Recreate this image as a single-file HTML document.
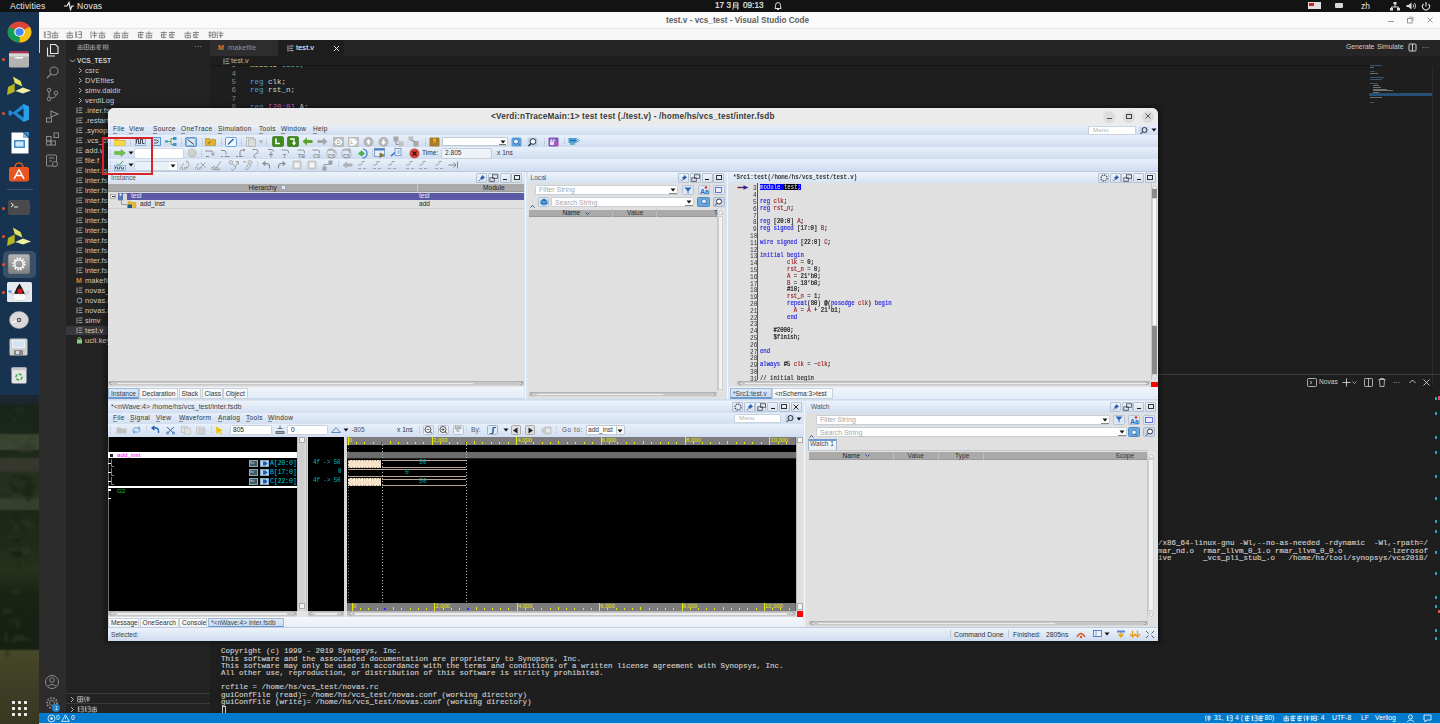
<!DOCTYPE html>
<html><head><meta charset="utf-8">
<style>
*{margin:0;padding:0;box-sizing:border-box}
html,body{width:1440px;height:724px;overflow:hidden;background:#1e1e1e;font-family:"Liberation Sans",sans-serif}
.a{position:absolute}
.t{position:absolute;white-space:nowrap;line-height:1}
svg.a{overflow:visible}
</style></head><body>
<div class="a" style="left:0px;top:0px;width:1440px;height:12px;background:#131313;"></div>
<div class="t" style="left:10px;top:1.70px;font-size:8.6px;color:#e8e8e8;font-weight:normal;letter-spacing:0.15px">Activities</div>
<svg class="a" style="left:63px;top:1px;" width="12" height="10" viewBox="0 0 12 10"><path d="M1 5 L4 5 L6 1.5 L7.5 8.5 L9 5 L11 5" stroke="#e8e8e8" stroke-width="1.2" fill="none"/></svg>
<div class="t" style="left:77px;top:1.70px;font-size:8.6px;color:#e8e8e8;font-weight:normal;letter-spacing:0.2px">Novas</div>
<div class="t" style="left:715px;top:1.90px;font-size:8.2px;color:#e8e8e8;font-weight:normal;-webkit-text-stroke:0.2px #e8e8e8">17</div>
<div class="t" style="left:726.5px;top:1.90px;font-size:8.2px;color:#e8e8e8;font-weight:normal;-webkit-text-stroke:0.2px #e8e8e8">3</div>
<svg class="a" style="left:732px;top:2px;" width="7" height="8" viewBox="0 0 7 8"><path d="M1.5 0.8h4.5v6.5M1.5 0.8v3.5q0 2.5-1 3.5M1.5 3h4.5M1.5 5h4.5M6 7.3l-1 -0.5" stroke="#e8e8e8" stroke-width="0.9" fill="none"/></svg>
<div class="t" style="left:743px;top:1.90px;font-size:8.2px;color:#e8e8e8;font-weight:normal;-webkit-text-stroke:0.2px #e8e8e8">09:13</div>
<svg class="a" style="left:773px;top:1px;" width="10" height="10" viewBox="0 0 10 10"><path d="M2 7.5 Q2.5 6 2.5 4.5 Q2.5 1.5 5 1.5 Q7.5 1.5 7.5 4.5 Q7.5 6 8 7.5 Z M4 8.5 h2" stroke="#ddd" stroke-width="1" fill="none"/></svg>
<div class="a" style="left:1308px;top:2px;width:13px;height:7px;background:#e0e0e0;"></div>
<div class="a" style="left:1309px;top:3px;width:5px;height:3px;background:#c81e2a;"></div>
<div class="a" style="left:1335px;top:3px;width:8px;height:5px;background:#d8d8d8;border-radius:1px"></div>
<div class="t" style="left:1361px;top:1.80px;font-size:8.4px;color:#e8e8e8;font-weight:normal;">zh</div>
<svg class="a" style="left:1389px;top:1px;" width="12" height="10" viewBox="0 0 12 10"><path d="M6 1.5v3M2.5 8v-2h7v2M6 4.5v1.5" stroke="#ddd" stroke-width="1" fill="none"/><rect x="4.5" y="1" width="3" height="2.5" fill="#ddd"/><rect x="1" y="7" width="3" height="2.5" fill="#ddd"/><rect x="8" y="7" width="3" height="2.5" fill="#ddd"/></svg>
<svg class="a" style="left:1405px;top:1px;" width="12" height="10" viewBox="0 0 12 10"><path d="M1.5 4h2l3-2.5v7l-3-2.5h-2z" fill="#ddd"/><path d="M8 3.5q1.5 1.5 0 3M9.5 2q2.5 3 0 6" stroke="#ddd" stroke-width="0.9" fill="none"/></svg>
<svg class="a" style="left:1419.5px;top:1px;" width="12" height="10" viewBox="0 0 12 10"><path d="M3.5 3 A3.5 3.5 0 1 0 8.5 3" stroke="#ddd" stroke-width="1.1" fill="none"/><path d="M6 1v4.5" stroke="#ddd" stroke-width="1.1"/></svg>
<div class="a" style="left:0px;top:12px;width:39px;height:393px;background:#173350;"></div>
<div class="a" style="left:0;top:395px;width:39px;height:329px;background:linear-gradient(180deg,#1d2a36 0px,#1f2b33 8px,#1c281d 10px,#1e2a1e 38px,#3e4a36 40px,#404c36 54px,#1f2a1c 56px,#22301d 62px,#3c3e32 64px,#3a3c32 75px,#2a3422 78px,#2c3524 100px,#3a4830 106px,#384630 114px,#1f2b1a 116px,#222e1a 150px,#2c361f 175px,#1d2616 200px,#1a2214 250px,#1c2414 254px,#4f4f2e 256px,#4a4a2a 266px,#43432a 300px,#3c3c22 329px)"></div>
<div class="a" style="left:22.3px;top:555.7px;width:10.4px;height:7.7px;background:#202c18;border-radius:50%;opacity:0.45;filter:blur(1px)"></div>
<div class="a" style="left:14.0px;top:407.3px;width:11.5px;height:6.2px;background:#2a3620;border-radius:50%;opacity:0.45;filter:blur(1px)"></div>
<div class="a" style="left:14.1px;top:428.3px;width:6.0px;height:5.7px;background:#202c18;border-radius:50%;opacity:0.45;filter:blur(1px)"></div>
<div class="a" style="left:21.9px;top:462.3px;width:7.3px;height:3.9px;background:#343c2c;border-radius:50%;opacity:0.45;filter:blur(1px)"></div>
<div class="a" style="left:23.9px;top:439.9px;width:5.1px;height:6.1px;background:#3a4030;border-radius:50%;opacity:0.45;filter:blur(1px)"></div>
<div class="a" style="left:29.2px;top:433.1px;width:4.0px;height:6.9px;background:#3a4030;border-radius:50%;opacity:0.45;filter:blur(1px)"></div>
<div class="a" style="left:8.7px;top:618.1px;width:11.7px;height:5.7px;background:#2a3620;border-radius:50%;opacity:0.45;filter:blur(1px)"></div>
<div class="a" style="left:29.1px;top:445.4px;width:5.6px;height:7.8px;background:#343c2c;border-radius:50%;opacity:0.45;filter:blur(1px)"></div>
<div class="a" style="left:10.8px;top:474.7px;width:5.3px;height:3.7px;background:#16200f;border-radius:50%;opacity:0.45;filter:blur(1px)"></div>
<div class="a" style="left:24.5px;top:483.0px;width:8.7px;height:6.0px;background:#1a2412;border-radius:50%;opacity:0.45;filter:blur(1px)"></div>
<div class="a" style="left:10.7px;top:416.5px;width:6.4px;height:6.5px;background:#2a3620;border-radius:50%;opacity:0.45;filter:blur(1px)"></div>
<div class="a" style="left:21.1px;top:520.3px;width:4.5px;height:7.9px;background:#16200f;border-radius:50%;opacity:0.45;filter:blur(1px)"></div>
<div class="a" style="left:10.7px;top:637.3px;width:7.2px;height:5.7px;background:#34402a;border-radius:50%;opacity:0.45;filter:blur(1px)"></div>
<div class="a" style="left:17.4px;top:491.5px;width:4.1px;height:3.2px;background:#2a3620;border-radius:50%;opacity:0.45;filter:blur(1px)"></div>
<div class="a" style="left:28.6px;top:555.9px;width:5.0px;height:4.2px;background:#34402a;border-radius:50%;opacity:0.45;filter:blur(1px)"></div>
<div class="a" style="left:10.6px;top:486.1px;width:8.2px;height:6.9px;background:#16200f;border-radius:50%;opacity:0.45;filter:blur(1px)"></div>
<div class="a" style="left:23.4px;top:547.4px;width:6.9px;height:4.5px;background:#34402a;border-radius:50%;opacity:0.45;filter:blur(1px)"></div>
<div class="a" style="left:2.7px;top:636.5px;width:6.7px;height:6.1px;background:#2a3620;border-radius:50%;opacity:0.45;filter:blur(1px)"></div>
<div class="a" style="left:27.7px;top:485.0px;width:8.4px;height:4.6px;background:#1a2412;border-radius:50%;opacity:0.45;filter:blur(1px)"></div>
<div class="a" style="left:24.0px;top:476.5px;width:9.0px;height:6.6px;background:#1a2412;border-radius:50%;opacity:0.45;filter:blur(1px)"></div>
<div class="a" style="left:4.8px;top:649.2px;width:4.4px;height:7.9px;background:#202c18;border-radius:50%;opacity:0.45;filter:blur(1px)"></div>
<div class="a" style="left:1.0px;top:630.9px;width:9.9px;height:4.7px;background:#1a2412;border-radius:50%;opacity:0.45;filter:blur(1px)"></div>
<div class="a" style="left:12.7px;top:513.9px;width:4.4px;height:7.6px;background:#16200f;border-radius:50%;opacity:0.45;filter:blur(1px)"></div>
<div class="a" style="left:10.0px;top:600.4px;width:5.7px;height:7.9px;background:#202c18;border-radius:50%;opacity:0.45;filter:blur(1px)"></div>
<div class="a" style="left:18.9px;top:637.4px;width:10.3px;height:3.5px;background:#34402a;border-radius:50%;opacity:0.45;filter:blur(1px)"></div>
<div class="a" style="left:1.8px;top:493.2px;width:7.4px;height:3.7px;background:#202c18;border-radius:50%;opacity:0.45;filter:blur(1px)"></div>
<div class="a" style="left:29.3px;top:613.1px;width:7.6px;height:5.4px;background:#1a2412;border-radius:50%;opacity:0.45;filter:blur(1px)"></div>
<div class="a" style="left:8.7px;top:519.8px;width:7.2px;height:3.7px;background:#34402a;border-radius:50%;opacity:0.45;filter:blur(1px)"></div>
<div class="a" style="left:16.0px;top:605.5px;width:5.4px;height:7.7px;background:#1a2412;border-radius:50%;opacity:0.45;filter:blur(1px)"></div>
<div class="a" style="left:14.8px;top:445.0px;width:8.1px;height:5.7px;background:#40402f;border-radius:50%;opacity:0.45;filter:blur(1px)"></div>
<div class="a" style="left:23.6px;top:490.3px;width:10.2px;height:6.5px;background:#16200f;border-radius:50%;opacity:0.45;filter:blur(1px)"></div>
<div class="a" style="left:10.9px;top:589.9px;width:9.6px;height:4.4px;background:#34402a;border-radius:50%;opacity:0.45;filter:blur(1px)"></div>
<div class="a" style="left:29.4px;top:466.2px;width:9.7px;height:7.8px;background:#343c2c;border-radius:50%;opacity:0.45;filter:blur(1px)"></div>
<div class="a" style="left:17.4px;top:562.4px;width:4.1px;height:5.7px;background:#1a2412;border-radius:50%;opacity:0.45;filter:blur(1px)"></div>
<div class="a" style="left:8.2px;top:481.5px;width:6.3px;height:5.5px;background:#1a2412;border-radius:50%;opacity:0.45;filter:blur(1px)"></div>
<div class="a" style="left:19.3px;top:487.0px;width:9.9px;height:7.1px;background:#1a2412;border-radius:50%;opacity:0.45;filter:blur(1px)"></div>
<div class="a" style="left:5.2px;top:630.6px;width:10.9px;height:5.2px;background:#1a2412;border-radius:50%;opacity:0.45;filter:blur(1px)"></div>
<div class="a" style="left:15.5px;top:639.1px;width:8.2px;height:3.8px;background:#1a2412;border-radius:50%;opacity:0.45;filter:blur(1px)"></div>
<div class="a" style="left:14.3px;top:634.3px;width:9.5px;height:6.6px;background:#34402a;border-radius:50%;opacity:0.45;filter:blur(1px)"></div>
<div class="a" style="left:23.4px;top:443.0px;width:8.6px;height:6.3px;background:#343c2c;border-radius:50%;opacity:0.45;filter:blur(1px)"></div>
<div class="a" style="left:16.6px;top:475.7px;width:10.9px;height:4.4px;background:#16200f;border-radius:50%;opacity:0.45;filter:blur(1px)"></div>
<div class="a" style="left:17.6px;top:448.9px;width:9.0px;height:3.9px;background:#40402f;border-radius:50%;opacity:0.45;filter:blur(1px)"></div>
<div class="a" style="left:21.6px;top:445.1px;width:11.9px;height:7.9px;background:#3a4030;border-radius:50%;opacity:0.45;filter:blur(1px)"></div>
<div class="a" style="left:4.0px;top:413.5px;width:6.5px;height:3.9px;background:#2a3620;border-radius:50%;opacity:0.45;filter:blur(1px)"></div>
<div class="a" style="left:12.5px;top:537.1px;width:6.8px;height:6.3px;background:#16200f;border-radius:50%;opacity:0.45;filter:blur(1px)"></div>
<div class="a" style="left:7.1px;top:547.5px;width:11.2px;height:3.0px;background:#34402a;border-radius:50%;opacity:0.45;filter:blur(1px)"></div>
<div class="a" style="left:25.7px;top:638.0px;width:10.9px;height:6.4px;background:#202c18;border-radius:50%;opacity:0.45;filter:blur(1px)"></div>
<div class="a" style="left:1.1px;top:493.5px;width:8.9px;height:3.5px;background:#202c18;border-radius:50%;opacity:0.45;filter:blur(1px)"></div>
<div class="a" style="left:28.5px;top:528.2px;width:6.3px;height:4.8px;background:#2a3620;border-radius:50%;opacity:0.45;filter:blur(1px)"></div>
<div class="a" style="left:24.4px;top:504.8px;width:9.1px;height:4.8px;background:#3a4030;border-radius:50%;opacity:0.45;filter:blur(1px)"></div>
<div class="a" style="left:11.5px;top:439.2px;width:7.8px;height:4.0px;background:#3a4030;border-radius:50%;opacity:0.45;filter:blur(1px)"></div>
<div class="a" style="left:10.5px;top:552.2px;width:11.1px;height:3.0px;background:#16200f;border-radius:50%;opacity:0.45;filter:blur(1px)"></div>
<div class="a" style="left:27.5px;top:481.5px;width:8.3px;height:4.6px;background:#202c18;border-radius:50%;opacity:0.45;filter:blur(1px)"></div>
<div class="a" style="left:13.0px;top:494.0px;width:5.8px;height:4.5px;background:#34402a;border-radius:50%;opacity:0.45;filter:blur(1px)"></div>
<div class="a" style="left:25.6px;top:496.0px;width:5.3px;height:6.0px;background:#1a2412;border-radius:50%;opacity:0.45;filter:blur(1px)"></div>
<div class="a" style="left:12.5px;top:524.1px;width:6.6px;height:7.9px;background:#34402a;border-radius:50%;opacity:0.45;filter:blur(1px)"></div>
<div class="a" style="left:4.3px;top:632.4px;width:4.2px;height:6.3px;background:#34402a;border-radius:50%;opacity:0.45;filter:blur(1px)"></div>
<div class="a" style="left:1.2px;top:461.4px;width:5.1px;height:5.0px;background:#343c2c;border-radius:50%;opacity:0.45;filter:blur(1px)"></div>
<div class="a" style="left:8.2px;top:533.1px;width:11.5px;height:6.9px;background:#2a3620;border-radius:50%;opacity:0.45;filter:blur(1px)"></div>
<div class="a" style="left:25.3px;top:522.5px;width:9.8px;height:4.4px;background:#34402a;border-radius:50%;opacity:0.45;filter:blur(1px)"></div>
<div class="a" style="left:14.2px;top:552.0px;width:9.2px;height:6.0px;background:#16200f;border-radius:50%;opacity:0.45;filter:blur(1px)"></div>
<div class="a" style="left:3.8px;top:404.0px;width:6.3px;height:6.5px;background:#202c18;border-radius:50%;opacity:0.45;filter:blur(1px)"></div>
<div class="a" style="left:15.9px;top:474.2px;width:7.7px;height:4.8px;background:#202c18;border-radius:50%;opacity:0.45;filter:blur(1px)"></div>
<div class="a" style="left:0.1px;top:433.1px;width:8.4px;height:6.4px;background:#3a4030;border-radius:50%;opacity:0.45;filter:blur(1px)"></div>
<div class="a" style="left:16.4px;top:622.0px;width:4.1px;height:6.9px;background:#34402a;border-radius:50%;opacity:0.45;filter:blur(1px)"></div>
<div class="a" style="left:20.7px;top:548.7px;width:11.6px;height:6.2px;background:#34402a;border-radius:50%;opacity:0.45;filter:blur(1px)"></div>
<div class="a" style="left:20.5px;top:518.9px;width:9.8px;height:7.5px;background:#34402a;border-radius:50%;opacity:0.45;filter:blur(1px)"></div>
<div class="a" style="left:2.0px;top:607.5px;width:10.7px;height:6.5px;background:#34402a;border-radius:50%;opacity:0.45;filter:blur(1px)"></div>
<div class="a" style="left:19.5px;top:545.5px;width:7.8px;height:4.6px;background:#2a3620;border-radius:50%;opacity:0.45;filter:blur(1px)"></div>
<div class="a" style="left:16.5px;top:519.6px;width:8.0px;height:4.7px;background:#2a3620;border-radius:50%;opacity:0.45;filter:blur(1px)"></div>
<div class="a" style="left:0;top:395px;width:39px;height:329px;background:rgba(0,0,0,0.08)"></div>
<div class="a" style="left:39px;top:395px;width:0px;height:0px;background:none;"></div>
<svg class="a" style="left:7px;top:21px;" width="25" height="22" viewBox="0 0 25 22"><g transform="scale(1.25,1.1)"><circle cx="10" cy="10" r="9.5" fill="#db4437"/><path d="M10 10 L18.2 5.2 A9.5 9.5 0 0 1 10 19.5Z" fill="#f4c20d"/><path d="M10 10 L10 19.5 A9.5 9.5 0 0 1 1.8 5.3Z" fill="#0f9d58"/><circle cx="10" cy="10" r="4.3" fill="#fff"/><circle cx="10" cy="10" r="3.3" fill="#4285f4"/></g></svg>
<svg class="a" style="left:8px;top:51px;" width="22" height="17" viewBox="0 0 22 17"><rect x="1" y="0" width="20" height="5" rx="1.5" fill="#a3324f"/><rect x="1" y="2.5" width="20" height="14" rx="1.5" fill="#b3b3b3"/><rect x="1" y="2.5" width="20" height="3" fill="#d8d8d8"/><rect x="7" y="6" width="8" height="1.5" fill="#f5f5f5"/></svg>
<div class="a" style="left:1.5px;top:57.5px;width:3px;height:3px;background:#e95420;border-radius:50%"></div>
<svg class="a" style="left:7px;top:75px;" width="25" height="22" viewBox="0 0 25 22"><path d="M6 1.5 L13.6 6 L15.4 11.5 L7.7 8 Z" fill="#e2e26a"/><path d="M7.7 8.5 L7.7 16.8 L0 20 L1 12 Z" fill="#b4b424"/><path d="M8.3 16 L16 12.6 L24 15.6 L16 18.5 Z" fill="#f0f0a4"/></svg>
<svg class="a" style="left:8px;top:103px;" width="22" height="20" viewBox="0 0 22 20"><path d="M15.5 1 L21 3.5 V16.5 L15.5 19 L5 10.5 L2 13 L0.5 12 V8 L2 7 L5 9.5Z" fill="#1f8ad2"/><path d="M15.5 1 L21 3.5 V16.5 L15.5 19Z" fill="#2a9fe8"/><path d="M15.5 5.5 V14.5 L9 10Z" fill="#15304a"/></svg>
<div class="a" style="left:1.5px;top:111.5px;width:3px;height:3px;background:#e95420;border-radius:50%"></div>
<svg class="a" style="left:11px;top:132px;" width="18" height="22" viewBox="0 0 18 22"><path d="M0.5 0.5 H12 L17.5 6 V21.5 H0.5Z" fill="#fff"/><path d="M12 0.5 L17.5 6 H12Z" fill="#7ab7e0"/><rect x="3" y="8" width="11" height="8" fill="#3b8fcf"/><rect x="4.5" y="9.5" width="8" height="5" fill="#cfe6f7"/><path d="M12.5 0 L18 0 L18 5z" fill="#3b8fcf"/></svg>
<svg class="a" style="left:8px;top:162px;" width="22" height="20" viewBox="0 0 22 20"><path d="M7 6 Q7 1 11 1 Q15 1 15 6" stroke="#d65a1a" stroke-width="1.6" fill="none"/><rect x="1" y="5" width="20" height="14.5" rx="2" fill="#e95420"/><path d="M11 7.5 L6 17 M11 7.5 L16 17 M7.5 13.5 H14.5" stroke="#fff" stroke-width="1.6"/></svg>
<div class="a" style="left:7px;top:189px;width:26px;height:1px;background:#3e5670;"></div>
<svg class="a" style="left:8px;top:200px;" width="22" height="15" viewBox="0 0 22 15"><rect x="0.5" y="0.5" width="21" height="14" rx="1.5" fill="#4a4a4a" stroke="#5a5a5a" stroke-width="0.5"/><path d="M3 3 L5.5 5 L3 7" stroke="#fff" stroke-width="0.9" fill="none"/><path d="M6 7h4" stroke="#fff" stroke-width="0.9"/></svg>
<div class="a" style="left:1.5px;top:206.5px;width:3px;height:3px;background:#e95420;border-radius:50%"></div>
<svg class="a" style="left:7px;top:225.5px;" width="25" height="22" viewBox="0 0 25 22"><path d="M6 1.5 L13.6 6 L15.4 11.5 L7.7 8 Z" fill="#e2e26a"/><path d="M7.7 8.5 L7.7 16.8 L0 20 L1 12 Z" fill="#b4b424"/><path d="M8.3 16 L16 12.6 L24 15.6 L16 18.5 Z" fill="#f0f0a4"/></svg>
<div class="a" style="left:1.5px;top:234.5px;width:3px;height:3px;background:#e95420;border-radius:50%"></div>
<div class="a" style="left:3px;top:251px;width:33px;height:27px;background:#3a5068;border-radius:5px"></div>
<svg class="a" style="left:8px;top:254px;" width="22" height="20" viewBox="0 0 22 20"><rect x="0.5" y="0.5" width="21" height="19" rx="1.5" fill="#9a9a9a"/><rect x="0.5" y="0.5" width="21" height="19" rx="1.5" fill="url(#gg)"/><defs><linearGradient id="gg" x1="0" y1="0" x2="0" y2="1"><stop offset="0" stop-color="#b5b5b5"/><stop offset="1" stop-color="#808080"/></linearGradient></defs><circle cx="11" cy="10" r="5.6" fill="none" stroke="#fff" stroke-width="2" stroke-dasharray="1.6 1.3"/><circle cx="11" cy="10" r="4.2" fill="none" stroke="#fff" stroke-width="1.3"/></svg>
<div class="a" style="left:1.5px;top:262.5px;width:3px;height:3px;background:#e95420;border-radius:50%"></div>
<svg class="a" style="left:7px;top:282px;" width="25" height="20" viewBox="0 0 25 20"><rect x="0" y="0" width="25" height="20" rx="1.5" fill="#e4eaf0"/><path d="M12.5 1.5 Q9 6 7 12 L18 12 Q15.5 6 12.5 1.5Z" fill="#181818"/><path d="M6 12 Q5 17 8 18.5 L17 18.5 Q20 17 19 12Z" fill="#fafafa" stroke="#c8c8c8" stroke-width="0.5"/><circle cx="13" cy="9" r="2.6" fill="#d81818"/><path d="M6.5 13 L3 10.5 M18.5 13 L22 9" stroke="#d0d0d0" stroke-width="2"/><ellipse cx="3" cy="9.5" rx="2" ry="1.2" fill="#6aa0d0"/></svg>
<div class="a" style="left:1.5px;top:290.5px;width:3px;height:3px;background:#e95420;border-radius:50%"></div>
<svg class="a" style="left:9px;top:311px;" width="20" height="18" viewBox="0 0 20 18"><ellipse cx="10" cy="9" rx="9.5" ry="8.5" fill="#d8d8d8"/><ellipse cx="10" cy="9" rx="9.5" ry="8.5" fill="none" stroke="#aaa" stroke-width="0.6"/><path d="M3 12 L9 9" stroke="#fff" stroke-width="1.2"/><circle cx="10" cy="9" r="2.3" fill="#555"/><circle cx="10" cy="9" r="1" fill="#ddd"/></svg>
<svg class="a" style="left:9px;top:338px;" width="19" height="18" viewBox="0 0 19 18"><rect x="0.5" y="0.5" width="18" height="17" rx="1.5" fill="#cfcfcf"/><rect x="3" y="2" width="13" height="8" fill="#eaf2fa"/><path d="M4 4h11M4 6h11M4 8h11" stroke="#9cc1e2" stroke-width="0.6"/><rect x="5" y="12" width="9" height="5" fill="#8a8a8a"/><rect x="7" y="13" width="3" height="3" fill="#ddd"/></svg>
<svg class="a" style="left:11px;top:367px;" width="16" height="17" viewBox="0 0 16 17"><rect x="0.5" y="0.5" width="15" height="16" rx="1.5" fill="#e4e4e4"/><rect x="0.5" y="0.5" width="15" height="2.5" fill="#c8c8c8"/><circle cx="8" cy="10" r="3" fill="none" stroke="#2ea043" stroke-width="1.4" stroke-dasharray="3 1.5"/></svg>
<div class="a" style="left:12.2px;top:701.3px;width:3.2px;height:3.2px;background:#f4f4f4;border-radius:0.8px"></div>
<div class="a" style="left:18.1px;top:701.3px;width:3.2px;height:3.2px;background:#f4f4f4;border-radius:0.8px"></div>
<div class="a" style="left:24.0px;top:701.3px;width:3.2px;height:3.2px;background:#f4f4f4;border-radius:0.8px"></div>
<div class="a" style="left:12.2px;top:707.3px;width:3.2px;height:3.2px;background:#f4f4f4;border-radius:0.8px"></div>
<div class="a" style="left:18.1px;top:707.3px;width:3.2px;height:3.2px;background:#f4f4f4;border-radius:0.8px"></div>
<div class="a" style="left:24.0px;top:707.3px;width:3.2px;height:3.2px;background:#f4f4f4;border-radius:0.8px"></div>
<div class="a" style="left:12.2px;top:713.3px;width:3.2px;height:3.2px;background:#f4f4f4;border-radius:0.8px"></div>
<div class="a" style="left:18.1px;top:713.3px;width:3.2px;height:3.2px;background:#f4f4f4;border-radius:0.8px"></div>
<div class="a" style="left:24.0px;top:713.3px;width:3.2px;height:3.2px;background:#f4f4f4;border-radius:0.8px"></div>
<div class="a" style="left:39px;top:12px;width:1401px;height:17px;background:#fafafa;"></div>
<div class="a" style="left:39px;top:28px;width:1401px;height:1px;background:#e6e6e6;"></div>
<div class="a" style="left:39px;top:29px;width:1401px;height:11px;background:#f6f6f6;"></div>
<div class="t" style="left:666px;top:16.90px;font-size:8.2px;color:#5f5f5f;font-weight:bold;">test.v - vcs_test - Visual Studio Code</div>
<div class="a" style="left:1388px;top:21px;width:6px;height:1px;background:#9a9a9a;"></div>
<svg class="a" style="left:1406px;top:16px;" width="8" height="8" viewBox="0 0 8 8"><rect x="1.5" y="2.5" width="4.5" height="4.5" fill="none" stroke="#9a9a9a" stroke-width="1"/><path d="M3 1.2h4v4" stroke="#9a9a9a" stroke-width="0.8" fill="none"/></svg>
<svg class="a" style="left:1426px;top:16px;" width="8" height="8" viewBox="0 0 8 8"><path d="M1.5 1.5L6.5 6.5M6.5 1.5L1.5 6.5" stroke="#9a9a9a" stroke-width="1"/></svg>
<svg class="a" style="left:43px;top:30.7px;" width="18" height="9" viewBox="0 0 18 9"><path transform="translate(0.00,0) scale(7.60)" d="M.1 .15h.3M.1 .45h.3M.1 .8h.35M.25 .15v.65M.55 .1h.4v.8M.55 .45h.4M.55 .9h.4" stroke="#7a7a7a" stroke-width="0.130" fill="none" opacity="0.9"/><path transform="translate(8.20,0) scale(7.60)" d="M.05 .3h.9M.5 .05v.35M.15 .55h.7v.35h-.7zM.5 .55v.35" stroke="#7a7a7a" stroke-width="0.130" fill="none" opacity="0.9"/></svg>
<svg class="a" style="left:66px;top:30.7px;" width="18" height="9" viewBox="0 0 18 9"><path transform="translate(0.00,0) scale(7.60)" d="M.05 .3h.9M.5 .05v.35M.15 .55h.7v.35h-.7zM.5 .55v.35" stroke="#7a7a7a" stroke-width="0.130" fill="none" opacity="0.9"/><path transform="translate(8.20,0) scale(7.60)" d="M.1 .15h.3M.1 .45h.3M.1 .8h.35M.25 .15v.65M.55 .1h.4v.8M.55 .45h.4M.55 .9h.4" stroke="#7a7a7a" stroke-width="0.130" fill="none" opacity="0.9"/></svg>
<svg class="a" style="left:90px;top:30.7px;" width="18" height="9" viewBox="0 0 18 9"><path transform="translate(0.00,0) scale(7.60)" d="M.2 .05l-.15 .4M.3 .3h.65M.6 .05v.9M.35 .6h.55M.15 .45v.5" stroke="#7a7a7a" stroke-width="0.130" fill="none" opacity="0.9"/><path transform="translate(8.20,0) scale(7.60)" d="M.05 .3h.9M.5 .05v.35M.15 .55h.7v.35h-.7zM.5 .55v.35" stroke="#7a7a7a" stroke-width="0.130" fill="none" opacity="0.9"/></svg>
<svg class="a" style="left:113px;top:30.7px;" width="18" height="9" viewBox="0 0 18 9"><path transform="translate(0.00,0) scale(7.60)" d="M.05 .3h.9M.5 .05v.35M.15 .55h.7v.35h-.7zM.5 .55v.35" stroke="#7a7a7a" stroke-width="0.130" fill="none" opacity="0.9"/><path transform="translate(8.20,0) scale(7.60)" d="M.05 .3h.9M.5 .05v.35M.15 .55h.7v.35h-.7zM.5 .55v.35" stroke="#7a7a7a" stroke-width="0.130" fill="none" opacity="0.9"/></svg>
<svg class="a" style="left:137px;top:30.7px;" width="18" height="9" viewBox="0 0 18 9"><path transform="translate(0.00,0) scale(7.60)" d="M.1 .2h.8M.5 .05v.9M.15 .5h.7M.2 .85h.6M.2 .35v.5" stroke="#7a7a7a" stroke-width="0.130" fill="none" opacity="0.9"/><path transform="translate(8.20,0) scale(7.60)" d="M.05 .3h.9M.5 .05v.35M.15 .55h.7v.35h-.7zM.5 .55v.35" stroke="#7a7a7a" stroke-width="0.130" fill="none" opacity="0.9"/></svg>
<svg class="a" style="left:160px;top:30.7px;" width="18" height="9" viewBox="0 0 18 9"><path transform="translate(0.00,0) scale(7.60)" d="M.1 .2h.8M.5 .05v.9M.15 .5h.7M.2 .85h.6M.2 .35v.5" stroke="#7a7a7a" stroke-width="0.130" fill="none" opacity="0.9"/><path transform="translate(8.20,0) scale(7.60)" d="M.1 .2h.8M.5 .05v.9M.15 .5h.7M.2 .85h.6M.2 .35v.5" stroke="#7a7a7a" stroke-width="0.130" fill="none" opacity="0.9"/></svg>
<svg class="a" style="left:184px;top:30.7px;" width="18" height="9" viewBox="0 0 18 9"><path transform="translate(0.00,0) scale(7.60)" d="M.05 .3h.9M.5 .05v.35M.15 .55h.7v.35h-.7zM.5 .55v.35" stroke="#7a7a7a" stroke-width="0.130" fill="none" opacity="0.9"/><path transform="translate(8.20,0) scale(7.60)" d="M.1 .2h.8M.5 .05v.9M.15 .5h.7M.2 .85h.6M.2 .35v.5" stroke="#7a7a7a" stroke-width="0.130" fill="none" opacity="0.9"/></svg>
<svg class="a" style="left:208px;top:30.7px;" width="18" height="9" viewBox="0 0 18 9"><path transform="translate(0.00,0) scale(7.60)" d="M.05 .25h.4M.25 .05v.9M.05 .6h.4M.55 .15h.4v.7h-.4zM.55 .5h.4" stroke="#7a7a7a" stroke-width="0.130" fill="none" opacity="0.9"/><path transform="translate(8.20,0) scale(7.60)" d="M.2 .05l-.15 .4M.3 .3h.65M.6 .05v.9M.35 .6h.55M.15 .45v.5" stroke="#7a7a7a" stroke-width="0.130" fill="none" opacity="0.9"/></svg>
<div class="a" style="left:39px;top:40px;width:27px;height:673px;background:#2c2c2c;"></div>
<div class="a" style="left:39px;top:40px;width:1px;height:13px;background:#d0d0d0;"></div>
<svg class="a" style="left:45px;top:43px;" width="15" height="15" viewBox="0 0 15 15"><path d="M5.5 1.5h5l2.5 2.5v6.5h-7.5z" fill="none" stroke="#e8e8e8" stroke-width="1.1"/><path d="M2.5 4.5v8.5h7.5" fill="none" stroke="#e8e8e8" stroke-width="1.1"/></svg>
<svg class="a" style="left:45px;top:65px;" width="15" height="15" viewBox="0 0 15 15"><circle cx="9" cy="6" r="4" fill="none" stroke="#8b8b8b" stroke-width="1.1"/><path d="M6 9L2 13" stroke="#8b8b8b" stroke-width="1.2"/></svg>
<svg class="a" style="left:45px;top:87px;" width="15" height="15" viewBox="0 0 15 15"><circle cx="4" cy="3" r="1.8" fill="none" stroke="#8b8b8b"/><circle cx="4" cy="12" r="1.8" fill="none" stroke="#8b8b8b"/><circle cx="11" cy="6" r="1.8" fill="none" stroke="#8b8b8b"/><path d="M4 5v5M11 8q0 3-6 3" stroke="#8b8b8b" fill="none"/></svg>
<svg class="a" style="left:45px;top:109px;" width="15" height="15" viewBox="0 0 15 15"><path d="M6 2v6l7-3z" fill="none" stroke="#8b8b8b" stroke-width="1.1"/><rect x="1.5" y="9" width="5" height="4" fill="none" stroke="#8b8b8b"/></svg>
<svg class="a" style="left:45px;top:131px;" width="15" height="15" viewBox="0 0 15 15"><rect x="1.5" y="5.5" width="4.5" height="4.5" fill="none" stroke="#8b8b8b"/><rect x="6" y="10" width="4.5" height="4" fill="none" stroke="#8b8b8b"/><rect x="1.5" y="10" width="4.5" height="4" fill="none" stroke="#8b8b8b"/><rect x="9" y="2" width="4.5" height="4.5" fill="none" stroke="#8b8b8b"/></svg>
<svg class="a" style="left:45px;top:153px;" width="15" height="15" viewBox="0 0 15 15"><rect x="1.5" y="2" width="10" height="11" rx="1" fill="none" stroke="#8b8b8b"/><circle cx="10" cy="11" r="2.5" fill="#2c2c2c" stroke="#8b8b8b"/><path d="M4 5h5M4 8h3" stroke="#8b8b8b"/></svg>
<svg class="a" style="left:44px;top:674px;" width="16" height="16" viewBox="0 0 16 16"><circle cx="8" cy="8" r="6.5" fill="none" stroke="#8b8b8b" stroke-width="1"/><circle cx="8" cy="6" r="2.3" fill="none" stroke="#8b8b8b"/><path d="M3.5 12.5q4.5-4 9 0" fill="none" stroke="#8b8b8b"/></svg>
<svg class="a" style="left:44px;top:695px;" width="16" height="16" viewBox="0 0 16 16"><circle cx="8" cy="8" r="5" fill="none" stroke="#8b8b8b" stroke-width="1.8" stroke-dasharray="1.6 1.4"/><circle cx="8" cy="8" r="2.5" fill="none" stroke="#8b8b8b"/></svg>
<div class="a" style="left:52px;top:704px;width:8px;height:8px;background:#1e84d0;border-radius:50%"></div>
<div class="t" style="left:55px;top:705.50px;font-size:5px;color:#fff;font-weight:normal;">1</div>
<div class="a" style="left:66px;top:40px;width:144px;height:673px;background:#232323;"></div>
<svg class="a" style="left:77px;top:44.4px;" width="33" height="8" viewBox="0 0 33 8"><path transform="translate(0.00,0) scale(6.20)" d="M.05 .3h.9M.5 .05v.35M.15 .55h.7v.35h-.7zM.5 .55v.35" stroke="#a8a8a8" stroke-width="0.130" fill="none" opacity="0.85"/><path transform="translate(6.30,0) scale(6.20)" d="M.1 .1h.8v.8h-.8zM.1 .5h.8M.5 .1v.8" stroke="#a8a8a8" stroke-width="0.130" fill="none" opacity="0.85"/><path transform="translate(12.60,0) scale(6.20)" d="M.05 .3h.9M.5 .05v.35M.15 .55h.7v.35h-.7zM.5 .55v.35" stroke="#a8a8a8" stroke-width="0.130" fill="none" opacity="0.85"/><path transform="translate(18.90,0) scale(6.20)" d="M.1 .2h.8M.5 .05v.9M.15 .5h.7M.2 .85h.6M.2 .35v.5" stroke="#a8a8a8" stroke-width="0.130" fill="none" opacity="0.85"/><path transform="translate(25.20,0) scale(6.20)" d="M.05 .25h.4M.25 .05v.9M.05 .6h.4M.55 .15h.4v.7h-.4zM.55 .5h.4" stroke="#a8a8a8" stroke-width="0.130" fill="none" opacity="0.85"/></svg>
<div class="t" style="left:194px;top:43.00px;font-size:8px;color:#c0c0c0;font-weight:normal;">···</div>
<svg class="a" style="left:69px;top:58px;" width="7" height="6" viewBox="0 0 7 6"><path d="M1 1.5L3.5 4L6 1.5" stroke="#c5c5c5" fill="none" stroke-width="0.9"/></svg>
<div class="t" style="left:77px;top:57.70px;font-size:6.6px;color:#d0d0d0;font-weight:bold;">VCS_TEST</div>
<svg class="a" style="left:78px;top:67.3px;" width="5" height="7" viewBox="0 0 5 7"><path d="M1 1L3.5 3.5L1 6" stroke="#c5c5c5" fill="none" stroke-width="0.9"/></svg>
<div class="t" style="left:85px;top:66.60px;font-size:7.4px;color:#cccccc;font-weight:normal;letter-spacing:0.1px">csrc</div>
<svg class="a" style="left:78px;top:77.3px;" width="5" height="7" viewBox="0 0 5 7"><path d="M1 1L3.5 3.5L1 6" stroke="#c5c5c5" fill="none" stroke-width="0.9"/></svg>
<div class="t" style="left:85px;top:76.60px;font-size:7.4px;color:#cccccc;font-weight:normal;letter-spacing:0.1px">DVEfiles</div>
<svg class="a" style="left:78px;top:87.3px;" width="5" height="7" viewBox="0 0 5 7"><path d="M1 1L3.5 3.5L1 6" stroke="#c5c5c5" fill="none" stroke-width="0.9"/></svg>
<div class="t" style="left:85px;top:86.60px;font-size:7.4px;color:#cccccc;font-weight:normal;letter-spacing:0.1px">simv.daidir</div>
<svg class="a" style="left:78px;top:97.3px;" width="5" height="7" viewBox="0 0 5 7"><path d="M1 1L3.5 3.5L1 6" stroke="#c5c5c5" fill="none" stroke-width="0.9"/></svg>
<div class="t" style="left:85px;top:96.60px;font-size:7.4px;color:#cccccc;font-weight:normal;letter-spacing:0.1px">verdiLog</div>
<svg class="a" style="left:76px;top:107.3px;" width="7" height="7" viewBox="0 0 7 7"><path d="M1 0.5v6M2.5 1h4M2.5 3.3h3.2M2.5 5.6h4" stroke="#a0a0a0" stroke-width="1" fill="none"/></svg>
<div class="t" style="left:85px;top:106.60px;font-size:7.4px;color:#cccccc;font-weight:normal;letter-spacing:0.1px">.inter.fsdb</div>
<svg class="a" style="left:76px;top:117.3px;" width="7" height="7" viewBox="0 0 7 7"><path d="M1 0.5v6M2.5 1h4M2.5 3.3h3.2M2.5 5.6h4" stroke="#a0a0a0" stroke-width="1" fill="none"/></svg>
<div class="t" style="left:85px;top:116.60px;font-size:7.4px;color:#cccccc;font-weight:normal;letter-spacing:0.1px">.restart</div>
<svg class="a" style="left:76px;top:127.30000000000001px;" width="7" height="7" viewBox="0 0 7 7"><path d="M1 0.5v6M2.5 1h4M2.5 3.3h3.2M2.5 5.6h4" stroke="#a0a0a0" stroke-width="1" fill="none"/></svg>
<div class="t" style="left:85px;top:126.60px;font-size:7.4px;color:#cccccc;font-weight:normal;letter-spacing:0.1px">.synopsys</div>
<svg class="a" style="left:76px;top:137.3px;" width="7" height="7" viewBox="0 0 7 7"><path d="M1 0.5v6M2.5 1h4M2.5 3.3h3.2M2.5 5.6h4" stroke="#a0a0a0" stroke-width="1" fill="none"/></svg>
<div class="t" style="left:85px;top:136.60px;font-size:7.4px;color:#cccccc;font-weight:normal;letter-spacing:0.1px">.vcs_cl</div>
<svg class="a" style="left:76px;top:147.3px;" width="7" height="7" viewBox="0 0 7 7"><path d="M1 0.5v6M2.5 1h4M2.5 3.3h3.2M2.5 5.6h4" stroke="#a0a0a0" stroke-width="1" fill="none"/></svg>
<div class="t" style="left:85px;top:146.60px;font-size:7.4px;color:#cccccc;font-weight:normal;letter-spacing:0.1px">add.v</div>
<svg class="a" style="left:76px;top:157.3px;" width="7" height="7" viewBox="0 0 7 7"><path d="M1 0.5v6M2.5 1h4M2.5 3.3h3.2M2.5 5.6h4" stroke="#a0a0a0" stroke-width="1" fill="none"/></svg>
<div class="t" style="left:85px;top:156.60px;font-size:7.4px;color:#cccccc;font-weight:normal;letter-spacing:0.1px">file.f</div>
<svg class="a" style="left:76px;top:167.3px;" width="7" height="7" viewBox="0 0 7 7"><path d="M1 0.5v6M2.5 1h4M2.5 3.3h3.2M2.5 5.6h4" stroke="#a0a0a0" stroke-width="1" fill="none"/></svg>
<div class="t" style="left:85px;top:166.60px;font-size:7.4px;color:#cccccc;font-weight:normal;letter-spacing:0.1px">inter.fsdb</div>
<svg class="a" style="left:76px;top:177.3px;" width="7" height="7" viewBox="0 0 7 7"><path d="M1 0.5v6M2.5 1h4M2.5 3.3h3.2M2.5 5.6h4" stroke="#a0a0a0" stroke-width="1" fill="none"/></svg>
<div class="t" style="left:85px;top:176.60px;font-size:7.4px;color:#cccccc;font-weight:normal;letter-spacing:0.1px">inter.fsdb</div>
<svg class="a" style="left:76px;top:187.3px;" width="7" height="7" viewBox="0 0 7 7"><path d="M1 0.5v6M2.5 1h4M2.5 3.3h3.2M2.5 5.6h4" stroke="#a0a0a0" stroke-width="1" fill="none"/></svg>
<div class="t" style="left:85px;top:186.60px;font-size:7.4px;color:#cccccc;font-weight:normal;letter-spacing:0.1px">inter.fsdb</div>
<svg class="a" style="left:76px;top:197.3px;" width="7" height="7" viewBox="0 0 7 7"><path d="M1 0.5v6M2.5 1h4M2.5 3.3h3.2M2.5 5.6h4" stroke="#a0a0a0" stroke-width="1" fill="none"/></svg>
<div class="t" style="left:85px;top:196.60px;font-size:7.4px;color:#cccccc;font-weight:normal;letter-spacing:0.1px">inter.fsdb</div>
<svg class="a" style="left:76px;top:207.3px;" width="7" height="7" viewBox="0 0 7 7"><path d="M1 0.5v6M2.5 1h4M2.5 3.3h3.2M2.5 5.6h4" stroke="#a0a0a0" stroke-width="1" fill="none"/></svg>
<div class="t" style="left:85px;top:206.60px;font-size:7.4px;color:#cccccc;font-weight:normal;letter-spacing:0.1px">inter.fsdb</div>
<svg class="a" style="left:76px;top:217.3px;" width="7" height="7" viewBox="0 0 7 7"><path d="M1 0.5v6M2.5 1h4M2.5 3.3h3.2M2.5 5.6h4" stroke="#a0a0a0" stroke-width="1" fill="none"/></svg>
<div class="t" style="left:85px;top:216.60px;font-size:7.4px;color:#cccccc;font-weight:normal;letter-spacing:0.1px">inter.fsdb</div>
<svg class="a" style="left:76px;top:227.3px;" width="7" height="7" viewBox="0 0 7 7"><path d="M1 0.5v6M2.5 1h4M2.5 3.3h3.2M2.5 5.6h4" stroke="#a0a0a0" stroke-width="1" fill="none"/></svg>
<div class="t" style="left:85px;top:226.60px;font-size:7.4px;color:#cccccc;font-weight:normal;letter-spacing:0.1px">inter.fsdb</div>
<svg class="a" style="left:76px;top:237.3px;" width="7" height="7" viewBox="0 0 7 7"><path d="M1 0.5v6M2.5 1h4M2.5 3.3h3.2M2.5 5.6h4" stroke="#a0a0a0" stroke-width="1" fill="none"/></svg>
<div class="t" style="left:85px;top:236.60px;font-size:7.4px;color:#cccccc;font-weight:normal;letter-spacing:0.1px">inter.fsdb</div>
<svg class="a" style="left:76px;top:247.3px;" width="7" height="7" viewBox="0 0 7 7"><path d="M1 0.5v6M2.5 1h4M2.5 3.3h3.2M2.5 5.6h4" stroke="#a0a0a0" stroke-width="1" fill="none"/></svg>
<div class="t" style="left:85px;top:246.60px;font-size:7.4px;color:#cccccc;font-weight:normal;letter-spacing:0.1px">inter.fsdb</div>
<svg class="a" style="left:76px;top:257.3px;" width="7" height="7" viewBox="0 0 7 7"><path d="M1 0.5v6M2.5 1h4M2.5 3.3h3.2M2.5 5.6h4" stroke="#a0a0a0" stroke-width="1" fill="none"/></svg>
<div class="t" style="left:85px;top:256.60px;font-size:7.4px;color:#cccccc;font-weight:normal;letter-spacing:0.1px">inter.fsdb</div>
<svg class="a" style="left:76px;top:267.3px;" width="7" height="7" viewBox="0 0 7 7"><path d="M1 0.5v6M2.5 1h4M2.5 3.3h3.2M2.5 5.6h4" stroke="#a0a0a0" stroke-width="1" fill="none"/></svg>
<div class="t" style="left:85px;top:266.60px;font-size:7.4px;color:#cccccc;font-weight:normal;letter-spacing:0.1px">inter.fsdb</div>
<div class="t" style="left:76px;top:276.80px;font-size:7px;color:#e37933;font-weight:bold;">M</div>
<div class="t" style="left:85px;top:276.60px;font-size:7.4px;color:#cccccc;font-weight:normal;letter-spacing:0.1px">makefile</div>
<svg class="a" style="left:76px;top:287.3px;" width="7" height="7" viewBox="0 0 7 7"><path d="M1 0.5v6M2.5 1h4M2.5 3.3h3.2M2.5 5.6h4" stroke="#a0a0a0" stroke-width="1" fill="none"/></svg>
<div class="t" style="left:85px;top:286.60px;font-size:7.4px;color:#cccccc;font-weight:normal;letter-spacing:0.1px">novas_dump</div>
<svg class="a" style="left:76px;top:297.3px;" width="7" height="7" viewBox="0 0 7 7"><circle cx="3.5" cy="3.5" r="2.3" fill="none" stroke="#6d8ba4" stroke-width="1.2"/></svg>
<div class="t" style="left:85px;top:296.60px;font-size:7.4px;color:#cccccc;font-weight:normal;letter-spacing:0.1px">novas.conf</div>
<svg class="a" style="left:76px;top:307.3px;" width="7" height="7" viewBox="0 0 7 7"><path d="M1 0.5v6M2.5 1h4M2.5 3.3h3.2M2.5 5.6h4" stroke="#a0a0a0" stroke-width="1" fill="none"/></svg>
<div class="t" style="left:85px;top:306.60px;font-size:7.4px;color:#cccccc;font-weight:normal;letter-spacing:0.1px">novas.rc</div>
<svg class="a" style="left:76px;top:317.3px;" width="7" height="7" viewBox="0 0 7 7"><path d="M1 0.5v6M2.5 1h4M2.5 3.3h3.2M2.5 5.6h4" stroke="#a0a0a0" stroke-width="1" fill="none"/></svg>
<div class="t" style="left:85px;top:316.60px;font-size:7.4px;color:#cccccc;font-weight:normal;letter-spacing:0.1px">simv</div>
<div class="a" style="left:66px;top:326.3px;width:144px;height:9px;background:#37373d;"></div>
<svg class="a" style="left:76px;top:327.3px;" width="7" height="7" viewBox="0 0 7 7"><path d="M1 0.5v6M2.5 1h4M2.5 3.3h3.2M2.5 5.6h4" stroke="#a0a0a0" stroke-width="1" fill="none"/></svg>
<div class="t" style="left:85px;top:326.60px;font-size:7.4px;color:#cccccc;font-weight:normal;letter-spacing:0.1px">test.v</div>
<svg class="a" style="left:76px;top:336.3px;" width="7" height="8" viewBox="0 0 7 8"><rect x="1" y="3.5" width="5" height="4" fill="#89d185"/><path d="M2 3.5v-1q1.5-2 3 0v1" stroke="#89d185" fill="none"/></svg>
<div class="t" style="left:85px;top:336.60px;font-size:7.4px;color:#cccccc;font-weight:normal;letter-spacing:0.1px">ucli.key</div>
<div class="a" style="left:66px;top:693px;width:144px;height:1px;background:#3a3a3a;"></div>
<div class="a" style="left:66px;top:703px;width:144px;height:1px;background:#3a3a3a;"></div>
<svg class="a" style="left:70px;top:696px;" width="5" height="7" viewBox="0 0 5 7"><path d="M1 1L3.5 3.5L1 6" stroke="#c5c5c5" fill="none" stroke-width="0.9"/></svg>
<svg class="a" style="left:70px;top:706px;" width="5" height="7" viewBox="0 0 5 7"><path d="M1 1L3.5 3.5L1 6" stroke="#c5c5c5" fill="none" stroke-width="0.9"/></svg>
<svg class="a" style="left:77px;top:695.75px;" width="16" height="8" viewBox="0 0 16 8"><path transform="translate(0.00,0) scale(6.50)" d="M.1 .1h.8v.8h-.8zM.1 .5h.8M.5 .1v.8" stroke="#c8c8c8" stroke-width="0.130" fill="none" opacity="0.85"/><path transform="translate(7.00,0) scale(6.50)" d="M.2 .05l-.15 .4M.3 .3h.65M.6 .05v.9M.35 .6h.55M.15 .45v.5" stroke="#c8c8c8" stroke-width="0.130" fill="none" opacity="0.85"/></svg>
<svg class="a" style="left:77px;top:705.75px;" width="23" height="8" viewBox="0 0 23 8"><path transform="translate(0.00,0) scale(6.50)" d="M.1 .15h.3M.1 .45h.3M.1 .8h.35M.25 .15v.65M.55 .1h.4v.8M.55 .45h.4M.55 .9h.4" stroke="#c8c8c8" stroke-width="0.130" fill="none" opacity="0.85"/><path transform="translate(7.00,0) scale(6.50)" d="M.1 .15h.3M.1 .45h.3M.1 .8h.35M.25 .15v.65M.55 .1h.4v.8M.55 .45h.4M.55 .9h.4" stroke="#c8c8c8" stroke-width="0.130" fill="none" opacity="0.85"/><path transform="translate(14.00,0) scale(6.50)" d="M.05 .3h.9M.5 .05v.35M.15 .55h.7v.35h-.7zM.5 .55v.35" stroke="#c8c8c8" stroke-width="0.130" fill="none" opacity="0.85"/></svg>
<div class="a" style="left:210px;top:40px;width:1230px;height:673px;background:#1e1e1e;"></div>
<div class="a" style="left:210px;top:40px;width:1230px;height:15.5px;background:#252526;"></div>
<div class="a" style="left:210px;top:40px;width:67.5px;height:15.5px;background:#2d2d2d;"></div>
<div class="a" style="left:277.5px;top:40px;width:66.5px;height:15.5px;background:#1e1e1e;"></div>
<div class="t" style="left:218px;top:44.30px;font-size:7px;color:#e37933;font-weight:bold;">M</div>
<div class="t" style="left:228px;top:44.00px;font-size:7.6px;color:#8f8f8f;font-weight:normal;">makefile</div>
<svg class="a" style="left:287px;top:44.5px;" width="7" height="7" viewBox="0 0 7 7"><path d="M1 0.5v6M2.5 1h4M2.5 3.3h3.2M2.5 5.6h4" stroke="#b0b0b0" stroke-width="1" fill="none"/></svg>
<div class="t" style="left:296px;top:44.00px;font-size:7.6px;color:#ffffff;font-weight:normal;">test.v</div>
<svg class="a" style="left:333px;top:44.5px;" width="7" height="7" viewBox="0 0 7 7"><path d="M1 1L6 6M6 1L1 6" stroke="#e0e0e0" stroke-width="1"/></svg>
<div class="t" style="left:1346px;top:44.10px;font-size:6.8px;color:#cccccc;font-weight:normal;">Generate</div>
<div class="t" style="left:1377px;top:44.10px;font-size:6.8px;color:#cccccc;font-weight:normal;">Simulate</div>
<svg class="a" style="left:1408px;top:43px;" width="9" height="9" viewBox="0 0 9 9"><rect x="1" y="1" width="7" height="7" rx="0.8" fill="none" stroke="#cfcfcf"/><path d="M4.5 1v7" stroke="#cfcfcf"/></svg>
<div class="t" style="left:1422px;top:43.50px;font-size:7px;color:#cccccc;font-weight:normal;">···</div>
<svg class="a" style="left:223px;top:58px;" width="7" height="7" viewBox="0 0 7 7"><path d="M1 0.5v6M2.5 1h4M2.5 3.3h3.2M2.5 5.6h4" stroke="#a0a0a0" stroke-width="1" fill="none"/></svg>
<div class="t" style="left:231px;top:57.30px;font-size:7.4px;color:#b8b8b8;font-weight:normal;">test.v</div>
<div class="t" style="left:231.5px;top:62.20px;font-size:7.5px;color:#858585;font-weight:normal;font-family:'Liberation Mono',monospace;">3</div>
<div class="t" style="left:250px;top:62.20px;font-size:7.5px;color:#d4d4d4;font-weight:normal;font-family:'Liberation Mono',monospace;"><span style="color:#dcdc8b">module</span><span style="color:#4ec9b0"> test;</span></div>
<div class="t" style="left:231.5px;top:70.55px;font-size:7.5px;color:#858585;font-weight:normal;font-family:'Liberation Mono',monospace;">4</div>
<div class="t" style="left:231.5px;top:78.90px;font-size:7.5px;color:#858585;font-weight:normal;font-family:'Liberation Mono',monospace;">5</div>
<div class="t" style="left:250px;top:78.90px;font-size:7.5px;color:#d4d4d4;font-weight:normal;font-family:'Liberation Mono',monospace;"><span style="color:#569cd6">reg</span><span style="color:#d4d4d4"> clk;</span></div>
<div class="t" style="left:231.5px;top:87.25px;font-size:7.5px;color:#858585;font-weight:normal;font-family:'Liberation Mono',monospace;">6</div>
<div class="t" style="left:250px;top:87.25px;font-size:7.5px;color:#d4d4d4;font-weight:normal;font-family:'Liberation Mono',monospace;"><span style="color:#569cd6">reg</span><span style="color:#d4d4d4"> rst_n;</span></div>
<div class="t" style="left:231.5px;top:95.60px;font-size:7.5px;color:#858585;font-weight:normal;font-family:'Liberation Mono',monospace;">7</div>
<div class="t" style="left:231.5px;top:103.95px;font-size:7.5px;color:#858585;font-weight:normal;font-family:'Liberation Mono',monospace;">8</div>
<div class="t" style="left:250px;top:103.95px;font-size:7.5px;color:#d4d4d4;font-weight:normal;font-family:'Liberation Mono',monospace;"><span style="color:#569cd6">reg</span><span style="color:#d16fd8"> [20:0]</span><span style="color:#d4d4d4"> A;</span></div>
<div class="a" style="left:210px;top:55.5px;width:1230px;height:9.6px;background:#1e1e1e;"></div>
<svg class="a" style="left:223px;top:58px;" width="7" height="7" viewBox="0 0 7 7"><path d="M1 0.5v6M2.5 1h4M2.5 3.3h3.2M2.5 5.6h4" stroke="#a0a0a0" stroke-width="1" fill="none"/></svg>
<div class="t" style="left:231px;top:57.30px;font-size:7.4px;color:#b8b8b8;font-weight:normal;">test.v</div>
<div class="a" style="left:210px;top:65.1px;width:1160px;height:1.2px;background:#151515;"></div>
<div class="a" style="left:1370px;top:65px;width:12px;height:0.8px;background:#569cd6;opacity:0.45"></div>
<div class="a" style="left:1370px;top:67px;width:4px;height:0.8px;background:#9cdcfe;opacity:0.45"></div>
<div class="a" style="left:1370px;top:71px;width:5px;height:0.8px;background:#569cd6;opacity:0.45"></div>
<div class="a" style="left:1370px;top:73px;width:8px;height:0.8px;background:#9cdcfe;opacity:0.45"></div>
<div class="a" style="left:1370px;top:77px;width:14px;height:0.8px;background:#569cd6;opacity:0.45"></div>
<div class="a" style="left:1370px;top:79px;width:12px;height:0.8px;background:#569cd6;opacity:0.45"></div>
<div class="a" style="left:1370px;top:83px;width:8px;height:0.8px;background:#569cd6;opacity:0.45"></div>
<div class="a" style="left:1373px;top:85px;width:6px;height:0.8px;background:#d4d4d4;opacity:0.45"></div>
<div class="a" style="left:1373px;top:87px;width:8px;height:0.8px;background:#d4d4d4;opacity:0.45"></div>
<div class="a" style="left:1373px;top:89px;width:14px;height:0.8px;background:#d4d4d4;opacity:0.45"></div>
<div class="a" style="left:1373px;top:90px;width:20px;height:0.8px;background:#d4d4d4;opacity:0.45"></div>
<div class="a" style="left:1373px;top:92px;width:6px;height:0.8px;background:#dcdcaa;opacity:0.45"></div>
<div class="a" style="left:1370px;top:95px;width:3px;height:0.8px;background:#569cd6;opacity:0.45"></div>
<div class="a" style="left:1370px;top:97px;width:12px;height:0.8px;background:#d4d4d4;opacity:0.45"></div>
<div class="a" style="left:1370px;top:102px;width:4px;height:0.8px;background:#569cd6;opacity:0.45"></div>
<div class="a" style="left:1369px;top:92.5px;width:63px;height:3px;background:#264f78;"></div>
<div class="a" style="left:1432px;top:66px;width:1px;height:320px;background:#2a2a2a;"></div>
<div class="a" style="left:210px;top:374px;width:1230px;height:1px;background:#3c3c3c;"></div>
<svg class="a" style="left:1307px;top:378px;" width="10" height="9" viewBox="0 0 10 9"><rect x="0.5" y="0.5" width="9" height="8" rx="1" fill="none" stroke="#cfcfcf" stroke-width="0.8"/><path d="M3 3l2 1.5-2 1.5" stroke="#cfcfcf" stroke-width="0.8" fill="none"/></svg>
<div class="t" style="left:1319px;top:379.30px;font-size:6.6px;color:#cfcfcf;font-weight:normal;">Novas</div>
<svg class="a" style="left:1342px;top:378px;" width="9" height="9" viewBox="0 0 9 9"><path d="M4.5 0.5v8M0.5 4.5h8" stroke="#cfcfcf" stroke-width="0.9"/></svg>
<svg class="a" style="left:1352px;top:381px;" width="5" height="4" viewBox="0 0 5 4"><path d="M0.5 0.5L2.5 2.5L4.5 0.5" stroke="#cfcfcf" stroke-width="0.7" fill="none"/></svg>
<svg class="a" style="left:1364px;top:378px;" width="9" height="9" viewBox="0 0 9 9"><rect x="0.5" y="0.5" width="8" height="8" rx="0.8" fill="none" stroke="#cfcfcf" stroke-width="0.8"/><path d="M4.5 0.5v8" stroke="#cfcfcf" stroke-width="0.8"/></svg>
<svg class="a" style="left:1378px;top:378px;" width="8" height="9" viewBox="0 0 8 9"><path d="M0.5 1.5h7M2.5 1.5v-1h3v1M1.5 1.5l0.5 7h4l0.5-7" stroke="#cfcfcf" stroke-width="0.8" fill="none"/></svg>
<div class="t" style="left:1393px;top:378.50px;font-size:7px;color:#cfcfcf;font-weight:normal;">···</div>
<svg class="a" style="left:1409px;top:379px;" width="7" height="5" viewBox="0 0 7 5"><path d="M0.5 4L3.5 1L6.5 4" stroke="#cfcfcf" stroke-width="0.9" fill="none"/></svg>
<svg class="a" style="left:1423px;top:379px;" width="7" height="7" viewBox="0 0 7 7"><path d="M0.5 0.5L6.5 6.5M6.5 0.5L0.5 6.5" stroke="#cfcfcf" stroke-width="0.9"/></svg>
<div class="t" style="left:1158px;top:540.25px;font-size:7.5px;color:#cccccc;font-weight:normal;font-family:'Liberation Mono',monospace;white-space:pre;-webkit-text-stroke:0.15px #cccccc">/x86_64-linux-gnu -Wl,--no-as-needed -rdynamic  -Wl,-rpath=/</div>
<div class="t" style="left:1158px;top:547.50px;font-size:7.5px;color:#cccccc;font-weight:normal;font-family:'Liberation Mono',monospace;white-space:pre;-webkit-text-stroke:0.15px #cccccc">mar_nd.o  rmar_llvm_0_1.o rmar_llvm_0_0.o          -lzerosof</div>
<div class="t" style="left:1158px;top:554.75px;font-size:7.5px;color:#cccccc;font-weight:normal;font-family:'Liberation Mono',monospace;white-space:pre;-webkit-text-stroke:0.15px #cccccc">ive       _vcs_pli_stub_.o   /home/hs/tool/synopsys/vcs2018/</div>
<div class="t" style="left:221px;top:648.45px;font-size:7.5px;color:#cccccc;font-weight:normal;font-family:'Liberation Mono',monospace;white-space:pre;-webkit-text-stroke:0.15px #cccccc">Copyright (c) 1999 - 2019 Synopsys, Inc.</div>
<div class="t" style="left:221px;top:655.65px;font-size:7.5px;color:#cccccc;font-weight:normal;font-family:'Liberation Mono',monospace;white-space:pre;-webkit-text-stroke:0.15px #cccccc">This software and the associated documentation are proprietary to Synopsys, Inc.</div>
<div class="t" style="left:221px;top:662.85px;font-size:7.5px;color:#cccccc;font-weight:normal;font-family:'Liberation Mono',monospace;white-space:pre;-webkit-text-stroke:0.15px #cccccc">This software may only be used in accordance with the terms and conditions of a written license agreement with Synopsys, Inc.</div>
<div class="t" style="left:221px;top:670.05px;font-size:7.5px;color:#cccccc;font-weight:normal;font-family:'Liberation Mono',monospace;white-space:pre;-webkit-text-stroke:0.15px #cccccc">All other use, reproduction, or distribution of this software is strictly prohibited.</div>
<div class="t" style="left:221px;top:684.45px;font-size:7.5px;color:#cccccc;font-weight:normal;font-family:'Liberation Mono',monospace;white-space:pre;-webkit-text-stroke:0.15px #cccccc">rcfile = /home/hs/vcs_test/novas.rc</div>
<div class="t" style="left:221px;top:691.65px;font-size:7.5px;color:#cccccc;font-weight:normal;font-family:'Liberation Mono',monospace;white-space:pre;-webkit-text-stroke:0.15px #cccccc">guiConfFile (read)= /home/hs/vcs_test/novas.conf (working directory)</div>
<div class="t" style="left:221px;top:698.85px;font-size:7.5px;color:#cccccc;font-weight:normal;font-family:'Liberation Mono',monospace;white-space:pre;-webkit-text-stroke:0.15px #cccccc">guiConfFile (write)= /home/hs/vcs_test/novas.conf (working directory)</div>
<div class="a" style="left:221.5px;top:705.5px;width:4px;height:8px;background:none;border:1px solid #cccccc"></div>
<div class="a" style="left:1435px;top:397px;width:1.5px;height:3px;background:#2aa0d8;"></div>
<div class="a" style="left:1435px;top:412px;width:1.5px;height:3px;background:#2aa0d8;"></div>
<div class="a" style="left:1435px;top:436px;width:1.5px;height:3px;background:#2aa0d8;"></div>
<div class="a" style="left:1435px;top:451px;width:1.5px;height:3px;background:#2aa0d8;"></div>
<div class="a" style="left:1435px;top:475px;width:1.5px;height:3px;background:#2aa0d8;"></div>
<div class="a" style="left:1435px;top:497px;width:1.5px;height:3px;background:#2aa0d8;"></div>
<div class="a" style="left:1435px;top:520px;width:1.5px;height:3px;background:#2aa0d8;"></div>
<div class="a" style="left:1435px;top:530px;width:1.5px;height:3px;background:#2aa0d8;"></div>
<div class="a" style="left:1435px;top:551px;width:1.5px;height:3px;background:#2aa0d8;"></div>
<div class="a" style="left:1435px;top:572px;width:1.5px;height:3px;background:#2aa0d8;"></div>
<div class="a" style="left:1435px;top:596px;width:1.5px;height:3px;background:#2aa0d8;"></div>
<div class="a" style="left:1435px;top:605px;width:1.5px;height:3px;background:#2aa0d8;"></div>
<div class="a" style="left:1435px;top:629px;width:1.5px;height:3px;background:#2aa0d8;"></div>
<div class="a" style="left:1435px;top:637px;width:1.5px;height:3px;background:#2aa0d8;"></div>
<div class="a" style="left:1438px;top:396px;width:2px;height:4px;background:#e05050;"></div>
<div class="a" style="left:1438px;top:610px;width:2px;height:3px;background:#e05050;"></div>
<div class="a" style="left:39px;top:713px;width:1401px;height:10px;background:#007acc;"></div>
<div class="a" style="left:39px;top:722.6px;width:1401px;height:1.4px;background:#d5dde4;"></div>
<svg class="a" style="left:47px;top:714px;" width="9" height="9" viewBox="0 0 9 9"><circle cx="4.5" cy="4.5" r="3.5" fill="none" stroke="#fff" stroke-width="0.8"/><circle cx="4.5" cy="4.5" r="1.2" fill="#fff"/></svg>
<div class="t" style="left:56px;top:715.00px;font-size:6.6px;color:#ffffff;font-weight:normal;">0</div>
<svg class="a" style="left:61px;top:714px;" width="9" height="8" viewBox="0 0 9 8"><path d="M4.5 0.8L8.3 7.4H0.7Z" fill="none" stroke="#fff" stroke-width="0.8"/><path d="M4.5 3v2.3" stroke="#fff" stroke-width="0.7"/></svg>
<div class="t" style="left:71px;top:715.00px;font-size:6.6px;color:#ffffff;font-weight:normal;">0</div>
<svg class="a" style="left:1205px;top:715.0px;" width="8" height="8" viewBox="0 0 8 8"><path transform="translate(0.00,0) scale(6.60)" d="M.2 .05l-.15 .4M.3 .3h.65M.6 .05v.9M.35 .6h.55M.15 .45v.5" stroke="#fff" stroke-width="0.130" fill="none" opacity="0.9"/></svg>
<div class="t" style="left:1214px;top:715.10px;font-size:6.8px;color:#fff;font-weight:normal;">31,</div>
<svg class="a" style="left:1226px;top:715.0px;" width="8" height="8" viewBox="0 0 8 8"><path transform="translate(0.00,0) scale(6.60)" d="M.1 .15h.3M.1 .45h.3M.1 .8h.35M.25 .15v.65M.55 .1h.4v.8M.55 .45h.4M.55 .9h.4" stroke="#fff" stroke-width="0.130" fill="none" opacity="0.9"/></svg>
<div class="t" style="left:1235px;top:715.10px;font-size:6.8px;color:#fff;font-weight:normal;">4 (</div>
<svg class="a" style="left:1244px;top:715.0px;" width="22" height="8" viewBox="0 0 22 8"><path transform="translate(0.00,0) scale(6.60)" d="M.1 .2h.8M.5 .05v.9M.15 .5h.7M.2 .85h.6M.2 .35v.5" stroke="#fff" stroke-width="0.130" fill="none" opacity="0.9"/><path transform="translate(6.80,0) scale(6.60)" d="M.1 .15h.3M.1 .45h.3M.1 .8h.35M.25 .15v.65M.55 .1h.4v.8M.55 .45h.4M.55 .9h.4" stroke="#fff" stroke-width="0.130" fill="none" opacity="0.9"/><path transform="translate(13.60,0) scale(6.60)" d="M.1 .2h.8M.5 .05v.9M.15 .5h.7M.2 .85h.6M.2 .35v.5" stroke="#fff" stroke-width="0.130" fill="none" opacity="0.9"/></svg>
<div class="t" style="left:1264.5px;top:715.10px;font-size:6.8px;color:#fff;font-weight:normal;">80)</div>
<svg class="a" style="left:1283px;top:715.0px;" width="36" height="8" viewBox="0 0 36 8"><path transform="translate(0.00,0) scale(6.60)" d="M.05 .3h.9M.5 .05v.35M.15 .55h.7v.35h-.7zM.5 .55v.35" stroke="#fff" stroke-width="0.130" fill="none" opacity="0.9"/><path transform="translate(6.80,0) scale(6.60)" d="M.1 .2h.8M.5 .05v.9M.15 .5h.7M.2 .85h.6M.2 .35v.5" stroke="#fff" stroke-width="0.130" fill="none" opacity="0.9"/><path transform="translate(13.60,0) scale(6.60)" d="M.1 .2h.8M.5 .05v.9M.15 .5h.7M.2 .85h.6M.2 .35v.5" stroke="#fff" stroke-width="0.130" fill="none" opacity="0.9"/><path transform="translate(20.40,0) scale(6.60)" d="M.2 .05l-.15 .4M.3 .3h.65M.6 .05v.9M.35 .6h.55M.15 .45v.5" stroke="#fff" stroke-width="0.130" fill="none" opacity="0.9"/><path transform="translate(27.20,0) scale(6.60)" d="M.05 .25h.4M.25 .05v.9M.05 .6h.4M.55 .15h.4v.7h-.4zM.55 .5h.4" stroke="#fff" stroke-width="0.130" fill="none" opacity="0.9"/></svg>
<div class="t" style="left:1317px;top:715.10px;font-size:6.8px;color:#fff;font-weight:normal;">: 4</div>
<div class="t" style="left:1332px;top:715.10px;font-size:6.8px;color:#fff;font-weight:normal;">UTF-8</div>
<div class="t" style="left:1361px;top:715.10px;font-size:6.8px;color:#fff;font-weight:normal;">LF</div>
<div class="t" style="left:1375px;top:715.10px;font-size:6.8px;color:#fff;font-weight:normal;">Verilog</div>
<svg class="a" style="left:1406px;top:714px;" width="9" height="9" viewBox="0 0 9 9"><circle cx="4.5" cy="3" r="2" fill="none" stroke="#fff" stroke-width="0.8"/><path d="M1 8q3.5-4 7 0" stroke="#fff" stroke-width="0.8" fill="none"/></svg>
<svg class="a" style="left:1423px;top:714px;" width="9" height="9" viewBox="0 0 9 9"><path d="M1 1h7v5H4l-2 2v-2H1z" fill="none" stroke="#fff" stroke-width="0.8"/></svg>
<div class="a" style="left:105px;top:106px;width:1055.5px;height:537px;background:rgba(0,0,0,0.35);border-radius:8px 8px 2px 2px;filter:blur(2px)"></div>
<div class="a" style="left:108px;top:108px;width:1049.5px;height:533px;background:#e0e0e0;border-radius:6px 6px 0 0;overflow:hidden"></div>
<div class="a" style="left:108px;top:108px;width:1049.5px;height:16.5px;background:#ebebeb;border-radius:6px 6px 0 0"></div>
<div class="t" style="left:491px;top:113.10px;font-size:8.2px;color:#3a3a3a;font-weight:bold;letter-spacing:0.2px">&lt;Verdi:nTraceMain:1&gt; test test (./test.v) - /home/hs/vcs_test/inter.fsdb</div>
<div class="a" style="left:1103px;top:110.5px;width:12px;height:12px;background:#dcdcdc;border-radius:50%"></div>
<div class="a" style="left:1122.6px;top:110.5px;width:12px;height:12px;background:#dcdcdc;border-radius:50%"></div>
<div class="a" style="left:1141.7px;top:110.5px;width:12px;height:12px;background:#dcdcdc;border-radius:50%"></div>
<div class="a" style="left:1106.5px;top:117.5px;width:5px;height:1px;background:#555;"></div>
<div class="a" style="left:1126px;top:113.5px;width:5.5px;height:5px;background:none;border:1px solid #444"></div>
<svg class="a" style="left:1145px;top:113px;" width="6" height="6" viewBox="0 0 6 6"><path d="M0.5 0.5L5.5 5.5M5.5 0.5L0.5 5.5" stroke="#444" stroke-width="0.9"/></svg>
<div class="a" style="left:108px;top:124.5px;width:1049.5px;height:10.5px;background:linear-gradient(180deg,#e9f0fa,#cfdcef);"></div>
<div class="t" style="left:113px;top:126.30px;font-size:6.6px;color:#333333;font-weight:normal;letter-spacing:0.3px">File</div>
<div class="a" style="left:113px;top:133.2px;width:3.5px;height:0.5px;background:#8a8a8a;"></div>
<div class="t" style="left:129px;top:126.30px;font-size:6.6px;color:#333333;font-weight:normal;letter-spacing:0.3px">View</div>
<div class="a" style="left:129px;top:133.2px;width:3.5px;height:0.5px;background:#8a8a8a;"></div>
<div class="t" style="left:153px;top:126.30px;font-size:6.6px;color:#333333;font-weight:normal;letter-spacing:0.3px">Source</div>
<div class="a" style="left:153px;top:133.2px;width:3.5px;height:0.5px;background:#8a8a8a;"></div>
<div class="t" style="left:181px;top:126.30px;font-size:6.6px;color:#333333;font-weight:normal;letter-spacing:0.3px">OneTrace</div>
<div class="a" style="left:181px;top:133.2px;width:3.5px;height:0.5px;background:#8a8a8a;"></div>
<div class="t" style="left:218px;top:126.30px;font-size:6.6px;color:#333333;font-weight:normal;letter-spacing:0.3px">Simulation</div>
<div class="a" style="left:218px;top:133.2px;width:3.5px;height:0.5px;background:#8a8a8a;"></div>
<div class="t" style="left:259px;top:126.30px;font-size:6.6px;color:#333333;font-weight:normal;letter-spacing:0.3px">Tools</div>
<div class="a" style="left:259px;top:133.2px;width:3.5px;height:0.5px;background:#8a8a8a;"></div>
<div class="t" style="left:281px;top:126.30px;font-size:6.6px;color:#333333;font-weight:normal;letter-spacing:0.3px">Window</div>
<div class="a" style="left:281px;top:133.2px;width:3.5px;height:0.5px;background:#8a8a8a;"></div>
<div class="t" style="left:313px;top:126.30px;font-size:6.6px;color:#333333;font-weight:normal;letter-spacing:0.3px">Help</div>
<div class="a" style="left:313px;top:133.2px;width:3.5px;height:0.5px;background:#8a8a8a;"></div>
<div class="a" style="left:1088px;top:125.5px;width:48px;height:9px;background:#ffffff;border:1px solid #c9d3e0"></div>
<div class="t" style="left:1093px;top:126.90px;font-size:6.2px;color:#b0b0b0;font-weight:normal;">Menu</div>
<svg class="a" style="left:1139px;top:125.5px;" width="10" height="9" viewBox="0 0 10 9"><rect x="0.5" y="0.5" width="9" height="8" fill="#c9d8ec"/><circle cx="5.5" cy="4" r="2.5" fill="none" stroke="#223" stroke-width="0.9"/><path d="M3.5 6L1.5 8" stroke="#223" stroke-width="1"/></svg>
<svg class="a" style="left:1151px;top:128px;" width="6" height="4" viewBox="0 0 6 4"><path d="M0.5 0.5H5.5L3 3.5Z" fill="#111"/></svg>
<div class="a" style="left:108px;top:135px;width:1049.5px;height:12px;background:linear-gradient(180deg,#e8f0fb,#d0ddf0);"></div>
<div class="a" style="left:108px;top:146.5px;width:1049.5px;height:0.5px;background:#b8c8de;"></div>
<div class="a" style="left:108px;top:147px;width:1049.5px;height:12px;background:linear-gradient(180deg,#e8f0fb,#d0ddf0);"></div>
<div class="a" style="left:108px;top:158.5px;width:1049.5px;height:0.5px;background:#b8c8de;"></div>
<div class="a" style="left:108px;top:159px;width:1049.5px;height:12px;background:linear-gradient(180deg,#e8f0fb,#d0ddf0);"></div>
<div class="a" style="left:108px;top:170.5px;width:1049.5px;height:0.5px;background:#b8c8de;"></div>
<div class="a" style="left:110px;top:138.0px;width:1.2px;height:1.2px;background:#b8c4d4;"></div>
<div class="a" style="left:110px;top:140.2px;width:1.2px;height:1.2px;background:#b8c4d4;"></div>
<div class="a" style="left:110px;top:142.4px;width:1.2px;height:1.2px;background:#b8c4d4;"></div>
<div class="a" style="left:110px;top:144.6px;width:1.2px;height:1.2px;background:#b8c4d4;"></div>
<svg class="a" style="left:114px;top:137px;" width="12" height="9" viewBox="0 0 12 9"><path d="M0.5 2.5h4l1 1h6v5h-11z" fill="#f0c419" stroke="#c39a10" stroke-width="0.5"/><rect x="0.5" y="4" width="11" height="4.5" fill="#f7d84a"/></svg>
<div class="a" style="left:130px;top:138.0px;width:1.2px;height:1.2px;background:#b8c4d4;"></div>
<div class="a" style="left:130px;top:140.2px;width:1.2px;height:1.2px;background:#b8c4d4;"></div>
<div class="a" style="left:130px;top:142.4px;width:1.2px;height:1.2px;background:#b8c4d4;"></div>
<div class="a" style="left:130px;top:144.6px;width:1.2px;height:1.2px;background:#b8c4d4;"></div>
<svg class="a" style="left:135px;top:137px;" width="11" height="9" viewBox="0 0 11 9"><rect x="0.5" y="0.5" width="10" height="8" fill="#cfe0f2" stroke="#7da2c9" stroke-width="0.7"/><path d="M1.5 6.5v-4h2v4h2v-4h2v4h2" stroke="#223" stroke-width="0.8" fill="none"/></svg>
<svg class="a" style="left:152px;top:137px;" width="9" height="9" viewBox="0 0 9 9"><rect x="0.5" y="0.5" width="8" height="8" fill="#cde0f4" stroke="#3d86c6" stroke-width="0.8"/><path d="M2 3h3l1.5 1.5L5 6H2" stroke="#234" stroke-width="0.8" fill="none"/></svg>
<svg class="a" style="left:165px;top:137px;" width="12" height="9" viewBox="0 0 12 9"><rect x="0" y="3.5" width="3" height="2" fill="#3b92d8"/><path d="M3 4.5h3M6 1.5v6M6 1.5h2M6 7.5h2" stroke="#6aa84f" stroke-width="1"/><rect x="8" y="0" width="3.5" height="3" fill="#3b92d8"/><rect x="8" y="6" width="3.5" height="3" fill="#3b92d8"/></svg>
<div class="a" style="left:181px;top:138.0px;width:1.2px;height:1.2px;background:#b8c4d4;"></div>
<div class="a" style="left:181px;top:140.2px;width:1.2px;height:1.2px;background:#b8c4d4;"></div>
<div class="a" style="left:181px;top:142.4px;width:1.2px;height:1.2px;background:#b8c4d4;"></div>
<div class="a" style="left:181px;top:144.6px;width:1.2px;height:1.2px;background:#b8c4d4;"></div>
<svg class="a" style="left:185px;top:136.5px;" width="12" height="10" viewBox="0 0 12 10"><rect x="0.5" y="0.5" width="11" height="9" rx="1" fill="#8fb6df" stroke="#4a86c5" stroke-width="0.8"/><rect x="2" y="2" width="8" height="6" fill="#d8e6f5"/><path d="M2.5 2.5L9 7.5" stroke="#334" stroke-width="0.9"/></svg>
<div class="a" style="left:202px;top:138.0px;width:1.2px;height:1.2px;background:#b8c4d4;"></div>
<div class="a" style="left:202px;top:140.2px;width:1.2px;height:1.2px;background:#b8c4d4;"></div>
<div class="a" style="left:202px;top:142.4px;width:1.2px;height:1.2px;background:#b8c4d4;"></div>
<div class="a" style="left:202px;top:144.6px;width:1.2px;height:1.2px;background:#b8c4d4;"></div>
<svg class="a" style="left:205px;top:137px;" width="11" height="9" viewBox="0 0 11 9"><path d="M0.5 1.5h4l1 1h5v6h-10z" fill="#e2b32b" stroke="#9c7a15" stroke-width="0.5"/><path d="M3.5 6.5l2-2" stroke="#222" stroke-width="0.8"/></svg>
<div class="a" style="left:221px;top:138.0px;width:1.2px;height:1.2px;background:#b8c4d4;"></div>
<div class="a" style="left:221px;top:140.2px;width:1.2px;height:1.2px;background:#b8c4d4;"></div>
<div class="a" style="left:221px;top:142.4px;width:1.2px;height:1.2px;background:#b8c4d4;"></div>
<div class="a" style="left:221px;top:144.6px;width:1.2px;height:1.2px;background:#b8c4d4;"></div>
<svg class="a" style="left:225px;top:136.5px;" width="12" height="10" viewBox="0 0 12 10"><rect x="0.5" y="0.5" width="11" height="9" rx="1.5" fill="#f5f9fe" stroke="#5a9ad8" stroke-width="0.9"/><path d="M3 7.5L8.5 2" stroke="#2563a8" stroke-width="1.4"/></svg>
<div class="a" style="left:241px;top:138.0px;width:1.2px;height:1.2px;background:#b8c4d4;"></div>
<div class="a" style="left:241px;top:140.2px;width:1.2px;height:1.2px;background:#b8c4d4;"></div>
<div class="a" style="left:241px;top:142.4px;width:1.2px;height:1.2px;background:#b8c4d4;"></div>
<div class="a" style="left:241px;top:144.6px;width:1.2px;height:1.2px;background:#b8c4d4;"></div>
<svg class="a" style="left:246px;top:136.5px;" width="10" height="10" viewBox="0 0 10 10"><rect x="0.5" y="0.5" width="7" height="9" fill="#e8e8e8" stroke="#b0b0b0" stroke-width="0.7"/><rect x="2.5" y="2" width="7" height="7.5" fill="#dcdcdc" stroke="#b0b0b0" stroke-width="0.7"/></svg>
<svg class="a" style="left:258px;top:140px;" width="6" height="4" viewBox="0 0 6 4"><path d="M0.5 0.5H5.5L3 3.5Z" fill="#b0b0b0"/></svg>
<div class="a" style="left:266px;top:138.0px;width:1.2px;height:1.2px;background:#b8c4d4;"></div>
<div class="a" style="left:266px;top:140.2px;width:1.2px;height:1.2px;background:#b8c4d4;"></div>
<div class="a" style="left:266px;top:142.4px;width:1.2px;height:1.2px;background:#b8c4d4;"></div>
<div class="a" style="left:266px;top:144.6px;width:1.2px;height:1.2px;background:#b8c4d4;"></div>
<svg class="a" style="left:271.5px;top:136px;" width="12" height="11" viewBox="0 0 12 11"><rect x="0.5" y="0.5" width="11" height="10" rx="1.5" fill="#3f8a1c" stroke="#2d6a10" stroke-width="0.6"/><path d="M4 2.5v5h4" stroke="#fff" stroke-width="1.6" fill="none"/></svg>
<svg class="a" style="left:286.5px;top:136px;" width="12" height="11" viewBox="0 0 12 11"><rect x="0.5" y="0.5" width="11" height="10" rx="1.5" fill="#3f8a1c" stroke="#2d6a10" stroke-width="0.6"/><path d="M3 3h4v5M5.5 6.5L7 8.5L8.5 6.5" stroke="#fff" stroke-width="1.3" fill="none"/></svg>
<svg class="a" style="left:302px;top:137px;" width="11" height="9" viewBox="0 0 11 9"><path d="M0.5 4.5L5 0.5V3H10.5V6H5V8.5Z" fill="#5aa62a"/></svg>
<svg class="a" style="left:317px;top:137px;" width="11" height="9" viewBox="0 0 11 9"><path d="M10.5 4.5L6 0.5V3H0.5V6H6V8.5Z" fill="#a8a8a8"/></svg>
<svg class="a" style="left:333px;top:136.5px;" width="11" height="10" viewBox="0 0 11 10"><rect x="0.5" y="0.5" width="10" height="9" fill="#c0c0c0" stroke="#a0a0a0" stroke-width="0.5"/><path d="M1.5 5L4 2H7L9.5 5L7 8H4Z" fill="#fff"/><text x="3.8" y="7" font-size="5" fill="#888" font-family="Liberation Sans">D</text></svg>
<svg class="a" style="left:348px;top:136.5px;" width="11" height="10" viewBox="0 0 11 10"><rect x="0.5" y="0.5" width="10" height="9" fill="#c8c8c8" stroke="#a0a0a0" stroke-width="0.5"/><path d="M1.5 1.5H6L9.5 5L6 8.5H1.5Z" fill="#fff"/><text x="2.5" y="7" font-size="5" fill="#888" font-family="Liberation Sans">L</text></svg>
<svg class="a" style="left:363px;top:136.5px;" width="11" height="10" viewBox="0 0 11 10"><circle cx="5.5" cy="5" r="5" fill="#b4b4b4"/><path d="M5.5 2L8 5H6.5V7.5H4.5V5H3Z" fill="#fff"/></svg>
<svg class="a" style="left:378px;top:136.5px;" width="11" height="10" viewBox="0 0 11 10"><circle cx="5.5" cy="5" r="5" fill="#b4b4b4"/><path d="M5.5 8L8 5H6.5V2.5H4.5V5H3Z" fill="#fff"/></svg>
<svg class="a" style="left:393px;top:136px;" width="11" height="11" viewBox="0 0 11 11"><rect x="0.5" y="0.5" width="5" height="5" fill="#a8a8a8"/><rect x="5.5" y="5.5" width="5" height="5" fill="#c0c0c0"/><path d="M3 5.5v3h2.5" stroke="#777" stroke-width="0.8" fill="none"/></svg>
<svg class="a" style="left:408px;top:136px;" width="11" height="11" viewBox="0 0 11 11"><rect x="0.5" y="0.5" width="5" height="4" fill="#c0c0c0"/><rect x="5.5" y="5" width="5" height="5.5" fill="#a8a8a8"/><path d="M3 4.5l4 1" stroke="#777" stroke-width="0.8" fill="none"/></svg>
<div class="a" style="left:425px;top:138.0px;width:1.2px;height:1.2px;background:#b8c4d4;"></div>
<div class="a" style="left:425px;top:140.2px;width:1.2px;height:1.2px;background:#b8c4d4;"></div>
<div class="a" style="left:425px;top:142.4px;width:1.2px;height:1.2px;background:#b8c4d4;"></div>
<div class="a" style="left:425px;top:144.6px;width:1.2px;height:1.2px;background:#b8c4d4;"></div>
<svg class="a" style="left:429px;top:136.5px;" width="11" height="10" viewBox="0 0 11 10"><rect x="0.5" y="0.5" width="10" height="9" rx="1" fill="#a57a2a"/><rect x="4" y="1.5" width="3" height="3" fill="#f4b400"/><path d="M4 6.5l1.5-1.5 1.5 1.5" stroke="#f4b400" fill="none"/></svg>
<div class="a" style="left:442px;top:137px;width:66px;height:9px;background:#ffffff;border:1px solid #c0cad6;border-radius:1px"></div>
<svg class="a" style="left:500px;top:140px;" width="6" height="4" viewBox="0 0 6 4"><path d="M0.5 0.5H5.5L3 3.5Z" fill="#111"/></svg>
<div class="a" style="left:499px;top:144px;width:7px;height:1px;background:#777;"></div>
<svg class="a" style="left:511px;top:136.5px;" width="11" height="10" viewBox="0 0 11 10"><rect x="0.5" y="0.5" width="10" height="9" rx="1.5" fill="#5fa2e0"/><circle cx="5" cy="4.5" r="2.5" fill="#e8f2fb" stroke="#2a5b9a" stroke-width="0.8"/><path d="M7 6.5L9 8.5" stroke="#2a5b9a" stroke-width="1"/></svg>
<svg class="a" style="left:527px;top:136.5px;" width="11" height="10" viewBox="0 0 11 10"><rect x="0.5" y="0.5" width="10" height="9" rx="1.5" fill="#bcd0e6"/><circle cx="6" cy="4.5" r="2.8" fill="#f4f8fc" stroke="#223" stroke-width="0.9"/><path d="M4 6.5L1.5 9" stroke="#223" stroke-width="1.1"/></svg>
<div class="a" style="left:544px;top:138.0px;width:1.2px;height:1.2px;background:#b8c4d4;"></div>
<div class="a" style="left:544px;top:140.2px;width:1.2px;height:1.2px;background:#b8c4d4;"></div>
<div class="a" style="left:544px;top:142.4px;width:1.2px;height:1.2px;background:#b8c4d4;"></div>
<div class="a" style="left:544px;top:144.6px;width:1.2px;height:1.2px;background:#b8c4d4;"></div>
<svg class="a" style="left:548px;top:136.5px;" width="11" height="10" viewBox="0 0 11 10"><rect x="0.5" y="0.5" width="10" height="9" rx="1" fill="#7f5ab8"/><rect x="2" y="5" width="4" height="3" fill="#f0e0ff"/><text x="2" y="4.5" font-size="4" fill="#fff" font-family="Liberation Sans">AB</text><circle cx="8" cy="7" r="1.8" fill="#e040c0"/></svg>
<div class="a" style="left:564px;top:138.0px;width:1.2px;height:1.2px;background:#b8c4d4;"></div>
<div class="a" style="left:564px;top:140.2px;width:1.2px;height:1.2px;background:#b8c4d4;"></div>
<div class="a" style="left:564px;top:142.4px;width:1.2px;height:1.2px;background:#b8c4d4;"></div>
<div class="a" style="left:564px;top:144.6px;width:1.2px;height:1.2px;background:#b8c4d4;"></div>
<svg class="a" style="left:568px;top:137px;" width="11" height="9" viewBox="0 0 11 9"><rect x="0.5" y="1" width="8" height="5" fill="#4aa0d8"/><path d="M2 3.5h7M9 1.5L11 3.5L9 5.5" stroke="#1e5a8a" stroke-width="0.8" fill="none"/><rect x="2" y="6" width="5" height="2" fill="#7ac"/></svg>
<div class="a" style="left:110px;top:149.0px;width:1.2px;height:1.2px;background:#b8c4d4;"></div>
<div class="a" style="left:110px;top:151.2px;width:1.2px;height:1.2px;background:#b8c4d4;"></div>
<div class="a" style="left:110px;top:153.4px;width:1.2px;height:1.2px;background:#b8c4d4;"></div>
<div class="a" style="left:110px;top:155.6px;width:1.2px;height:1.2px;background:#b8c4d4;"></div>
<svg class="a" style="left:114px;top:149px;" width="12" height="8" viewBox="0 0 12 8"><path d="M11.5 4L7 0.5V2.5H0.5V5.5H7V7.5Z" fill="#6cc04a" stroke="#4f9a30" stroke-width="0.4"/></svg>
<svg class="a" style="left:128px;top:151px;" width="6" height="4" viewBox="0 0 6 4"><path d="M0.5 0.5H5.5L3 3.5Z" fill="#111"/></svg>
<div class="a" style="left:133.5px;top:148px;width:50px;height:10.5px;background:#ffffff;border:1px solid #cfd6df;border-radius:2px"></div>
<svg class="a" style="left:187px;top:148px;" width="10" height="10" viewBox="0 0 10 10"><circle cx="5" cy="5" r="4.5" fill="#c0c0c0"/><circle cx="4.5" cy="4.5" r="3.5" fill="#d0d0d0"/></svg>
<div class="a" style="left:201px;top:149.0px;width:1.2px;height:1.2px;background:#b8c4d4;"></div>
<div class="a" style="left:201px;top:151.2px;width:1.2px;height:1.2px;background:#b8c4d4;"></div>
<div class="a" style="left:201px;top:153.4px;width:1.2px;height:1.2px;background:#b8c4d4;"></div>
<div class="a" style="left:201px;top:155.6px;width:1.2px;height:1.2px;background:#b8c4d4;"></div>
<svg class="a" style="left:204px;top:148px;" width="11" height="10" viewBox="0 0 11 10"><path d="M1 3h6q2 0 2 2v1.5M7.5 5.5L9 7.5L10.5 5.5M2 8.5h3" stroke="#8c8c8c" stroke-width="1" fill="none"/></svg>
<svg class="a" style="left:220px;top:148px;" width="11" height="10" viewBox="0 0 11 10"><path d="M1 2.5h3q2 0 2 2v2M1 8.5h2M4.5 8.5h5" stroke="#8c8c8c" stroke-width="1" fill="none"/></svg>
<svg class="a" style="left:235px;top:148px;" width="11" height="10" viewBox="0 0 11 10"><path d="M1 8.5h2M4 8.5h4M5 8.5V4q0-2 2-2h3M8.5 1l1.5 1l-1.5 1" stroke="#8c8c8c" stroke-width="1" fill="none"/></svg>
<svg class="a" style="left:250px;top:148px;" width="11" height="10" viewBox="0 0 11 10"><path d="M2.5 1.5h3q2.5 0 2.5 2q0 2-2.5 2.5q-1.5 0.5-1.5 2.5q0 1 2 1" stroke="#8c8c8c" stroke-width="1" fill="none"/></svg>
<svg class="a" style="left:265px;top:148px;" width="11" height="10" viewBox="0 0 11 10"><path d="M3 1.5h3q2.5 0 2.5 2M6 3.5v6M4 6.5h4" stroke="#8c8c8c" stroke-width="1" fill="none"/></svg>
<svg class="a" style="left:280px;top:148px;" width="11" height="11" viewBox="0 0 11 11"><path d="M1.5 2h5q2 0 2 2v1" stroke="#8a8a8a" stroke-width="0.9" fill="none"/><text x="3" y="9.5" font-size="5.2" font-weight="bold" fill="#8a8a8a" font-family="Liberation Sans">T</text></svg>
<svg class="a" style="left:296px;top:148px;" width="11" height="11" viewBox="0 0 11 11"><path d="M1.5 2h5q2 0 2 2v1" stroke="#8a8a8a" stroke-width="0.9" fill="none"/><text x="2" y="9.5" font-size="5.2" font-weight="bold" fill="#8a8a8a" font-family="Liberation Sans">TB</text></svg>
<svg class="a" style="left:311px;top:148px;" width="11" height="11" viewBox="0 0 11 11"><path d="M1.5 2h5q2 0 2 2v1" stroke="#8a8a8a" stroke-width="0.9" fill="none"/><text x="2" y="9.5" font-size="5.2" font-weight="bold" fill="#8a8a8a" font-family="Liberation Sans">CS</text></svg>
<svg class="a" style="left:326px;top:148px;" width="11" height="11" viewBox="0 0 11 11"><path d="M1.5 2h5q2 0 2 2v1" stroke="#8a8a8a" stroke-width="0.9" fill="none"/><text x="2" y="9.5" font-size="5.2" font-weight="bold" fill="#8a8a8a" font-family="Liberation Sans">CS</text><circle cx="5.5" cy="5.5" r="4.8" fill="none" stroke="#9a9a9a" stroke-width="0.6"/></svg>
<svg class="a" style="left:341px;top:148px;" width="11" height="11" viewBox="0 0 11 11"><path d="M1.5 2h5q2 0 2 2v1" stroke="#8a8a8a" stroke-width="0.9" fill="none"/><text x="2" y="9.5" font-size="5.2" font-weight="bold" fill="#8a8a8a" font-family="Liberation Sans">CS</text><circle cx="5.5" cy="5.5" r="4.8" fill="none" stroke="#9a9a9a" stroke-width="0.6"/><path d="M8 0.5v2M9.5 0.5v2" stroke="#8a8a8a" stroke-width="0.6"/></svg>
<svg class="a" style="left:357px;top:147.5px;" width="11" height="11" viewBox="0 0 11 11"><path d="M1 5.5L4.5 2.5L8 5.5L4.5 8.5Z" fill="#4cae4c"/><path d="M6 1Q10.5 2 10 6Q9.5 10 5.5 10" stroke="#2f6fc0" stroke-width="1.1" fill="none"/></svg>
<div class="a" style="left:372px;top:149.0px;width:1.2px;height:1.2px;background:#b8c4d4;"></div>
<div class="a" style="left:372px;top:151.2px;width:1.2px;height:1.2px;background:#b8c4d4;"></div>
<div class="a" style="left:372px;top:153.4px;width:1.2px;height:1.2px;background:#b8c4d4;"></div>
<div class="a" style="left:372px;top:155.6px;width:1.2px;height:1.2px;background:#b8c4d4;"></div>
<svg class="a" style="left:374px;top:147.5px;" width="12" height="11" viewBox="0 0 12 11"><rect x="0.5" y="0.5" width="10" height="8" fill="#e8eef6" stroke="#5880b0" stroke-width="0.7"/><rect x="0.5" y="0.5" width="10" height="2" fill="#4a7fc0"/><path d="M6 5v5.5M6 5l4 2-4 2" fill="#2bb52b" stroke="#c03020" stroke-width="0.6"/></svg>
<svg class="a" style="left:390px;top:148px;" width="12" height="10" viewBox="0 0 12 10"><rect x="5" y="0.5" width="6" height="7" fill="#e8f0fa" stroke="#4a7fc0" stroke-width="0.7"/><path d="M1 8L5 4.5" stroke="#2a6ad0" stroke-width="1.4"/><path d="M7 3h3M7 5h3" stroke="#4a7fc0" stroke-width="0.6"/></svg>
<svg class="a" style="left:408.5px;top:147.5px;" width="11" height="11" viewBox="0 0 11 11"><circle cx="5.5" cy="5.5" r="5" fill="#d0483a"/><path d="M3.5 3.5L7.5 7.5M7.5 3.5L3.5 7.5" stroke="#3a0a0a" stroke-width="1.3"/></svg>
<div class="t" style="left:422px;top:149.70px;font-size:6.6px;color:#333;font-weight:normal;">Time:</div>
<div class="a" style="left:441px;top:148px;width:50.5px;height:10.5px;background:#eef3f9;border:1px solid #c6ced8;border-radius:2px"></div>
<div class="t" style="left:445px;top:149.70px;font-size:6.6px;color:#333;font-weight:normal;">2.805</div>
<div class="t" style="left:497px;top:149.70px;font-size:6.6px;color:#333;font-weight:normal;">x 1ns</div>
<div class="a" style="left:110px;top:161.0px;width:1.2px;height:1.2px;background:#b8c4d4;"></div>
<div class="a" style="left:110px;top:163.2px;width:1.2px;height:1.2px;background:#b8c4d4;"></div>
<div class="a" style="left:110px;top:165.4px;width:1.2px;height:1.2px;background:#b8c4d4;"></div>
<div class="a" style="left:110px;top:167.6px;width:1.2px;height:1.2px;background:#b8c4d4;"></div>
<svg class="a" style="left:114px;top:159.5px;" width="12" height="11" viewBox="0 0 12 11"><path d="M3 3.5L5 5.5L9 0.8" stroke="#3aa83a" stroke-width="1" fill="none"/><rect x="0.5" y="5.5" width="11" height="5" fill="#cfe0f2" stroke="#5a90c8" stroke-width="0.5"/><path d="M1.5 9v-2h2v2h2v-2h2v2h2v-2" stroke="#223" stroke-width="0.6" fill="none"/></svg>
<svg class="a" style="left:128px;top:163px;" width="6" height="4" viewBox="0 0 6 4"><path d="M0.5 0.5H5.5L3 3.5Z" fill="#111"/></svg>
<div class="a" style="left:133.5px;top:160.5px;width:44px;height:10px;background:#eaf0f7;border:1px solid #c8d0da;border-radius:1.5px"></div>
<div class="a" style="left:169px;top:161.5px;width:8px;height:8px;background:#ffffff;"></div>
<svg class="a" style="left:170px;top:164px;" width="6" height="4" viewBox="0 0 6 4"><path d="M0.5 0.5H5.5L3 3.5Z" fill="#111"/></svg>
<svg class="a" style="left:180px;top:160px;" width="12" height="11" viewBox="0 0 12 11"><path d="M0.5 9.5v-2h2v2h2v-2h2v2" stroke="#a4a4a4" stroke-width="0.8" fill="#d8d8d8"/><path d="M1 6L4 3.5M5 8q4 0 4-3.5q0-3-2.5-3" stroke="#a4a4a4" stroke-width="1" fill="none"/><path d="M6 0.5L7.5 1.5L6 2.8" stroke="#a4a4a4" stroke-width="0.8" fill="none"/></svg>
<svg class="a" style="left:195px;top:160px;" width="12" height="11" viewBox="0 0 12 11"><path d="M0.5 9.5v-2h2v2h2v-2h2v2" stroke="#a4a4a4" stroke-width="0.8" fill="#d8d8d8"/><path d="M1 6L4 3.5M5.5 2.5l5 5M10.5 2.5l-5 5" stroke="#a4a4a4" stroke-width="1" fill="none"/></svg>
<svg class="a" style="left:211px;top:160px;" width="12" height="11" viewBox="0 0 12 11"><path d="M0.5 9.5v-2h2v2h2v-2h2v2" stroke="#a4a4a4" stroke-width="0.8" fill="#d8d8d8"/><path d="M1 8L3 6l2 2L10 1" stroke="#a4a4a4" stroke-width="1" fill="none"/><path d="M1.5 9.5h8" stroke="#a4a4a4" stroke-width="1.4"/></svg>
<svg class="a" style="left:228px;top:160px;" width="12" height="11" viewBox="0 0 12 11"><circle cx="3" cy="2.5" r="2" fill="#d8d8d8" stroke="#a4a4a4" stroke-width="0.7"/><path d="M4.5 4L7 7L10 2M7.5 1.5h3v3" stroke="#a4a4a4" stroke-width="1" fill="none"/><path d="M3 9l2 1.5L8 7" stroke="#a4a4a4" stroke-width="1" fill="none"/></svg>
<svg class="a" style="left:242px;top:160px;" width="12" height="11" viewBox="0 0 12 11"><circle cx="8" cy="2.5" r="2" fill="#d8d8d8" stroke="#a4a4a4" stroke-width="0.7"/><path d="M1 1h3L2.5 3z" fill="#a4a4a4"/><path d="M6.5 4L4 7.5M3 8l2 2L9 5" stroke="#a4a4a4" stroke-width="1" fill="none"/></svg>
<div class="a" style="left:257px;top:161.0px;width:1.2px;height:1.2px;background:#b8c4d4;"></div>
<div class="a" style="left:257px;top:163.2px;width:1.2px;height:1.2px;background:#b8c4d4;"></div>
<div class="a" style="left:257px;top:165.4px;width:1.2px;height:1.2px;background:#b8c4d4;"></div>
<div class="a" style="left:257px;top:167.6px;width:1.2px;height:1.2px;background:#b8c4d4;"></div>
<svg class="a" style="left:262px;top:161px;" width="9" height="8" viewBox="0 0 9 8"><path d="M7.5 7.5v-2q0-3-3-3h-3M3.5 0.5l-2.5 2 2.5 2" stroke="#888" stroke-width="1.1" fill="none"/></svg>
<svg class="a" style="left:277px;top:161px;" width="9" height="8" viewBox="0 0 9 8"><path d="M1.5 7.5v-2q0-3 3-3h3M5.5 0.5l2.5 2-2.5 2" stroke="#888" stroke-width="1.1" fill="none"/></svg>
<svg class="a" style="left:292px;top:160px;" width="10" height="10" viewBox="0 0 10 10"><rect x="0.5" y="0.5" width="9" height="9" fill="#c8c8c8"/><rect x="2.5" y="2.5" width="5" height="5" fill="#f4f4f4"/></svg>
<svg class="a" style="left:307px;top:160px;" width="10" height="10" viewBox="0 0 10 10"><rect x="0.5" y="0.5" width="9" height="9" fill="#c8c8c8"/><rect x="2.5" y="2.5" width="5" height="5" fill="#f4f4f4"/></svg>
<svg class="a" style="left:322px;top:159.5px;" width="11" height="11" viewBox="0 0 11 11"><rect x="0.5" y="6.5" width="4" height="4" fill="#a0a0a0"/><rect x="6.5" y="0.5" width="4" height="4" fill="#a0a0a0"/><path d="M2.5 6.5v-2h6v-1" stroke="#a0a0a0" stroke-width="1.2" fill="none"/></svg>
<div class="a" style="left:338px;top:161.0px;width:1.2px;height:1.2px;background:#b8c4d4;"></div>
<div class="a" style="left:338px;top:163.2px;width:1.2px;height:1.2px;background:#b8c4d4;"></div>
<div class="a" style="left:338px;top:165.4px;width:1.2px;height:1.2px;background:#b8c4d4;"></div>
<div class="a" style="left:338px;top:167.6px;width:1.2px;height:1.2px;background:#b8c4d4;"></div>
<svg class="a" style="left:342px;top:161px;" width="11" height="8" viewBox="0 0 11 8"><path d="M0.5 4L5 0.5V2.5H10.5V5.5H5V7.5Z" fill="#b0b0b0"/></svg>
<svg class="a" style="left:357px;top:160px;" width="11" height="10" viewBox="0 0 11 10"><path d="M1 5h2q2 0 2-2V1.5h3M1 8.5h3M6 8.5h3" stroke="#a0a0a0" stroke-width="0.9" fill="none"/></svg>
<svg class="a" style="left:372px;top:160px;" width="11" height="10" viewBox="0 0 11 10"><path d="M1 5h2q2 0 2-2V1.5h3M1 8.5h3M6 8.5h3" stroke="#a0a0a0" stroke-width="0.9" fill="none"/></svg>
<svg class="a" style="left:387px;top:160px;" width="11" height="10" viewBox="0 0 11 10"><path d="M1 5h2q2 0 2-2V1.5h3M1 8.5h3M6 8.5h3" stroke="#a0a0a0" stroke-width="0.9" fill="none"/></svg>
<svg class="a" style="left:405px;top:160px;" width="11" height="10" viewBox="0 0 11 10"><path d="M1 5h2q2 0 2-2V1.5h3M1 8.5h3M6 8.5h3" stroke="#a0a0a0" stroke-width="0.9" fill="none"/></svg>
<svg class="a" style="left:418px;top:160px;" width="11" height="10" viewBox="0 0 11 10"><path d="M1 5h2q2 0 2-2V1.5h3M1 8.5h3M6 8.5h3" stroke="#a0a0a0" stroke-width="0.9" fill="none"/></svg>
<svg class="a" style="left:434px;top:160px;" width="11" height="10" viewBox="0 0 11 10"><path d="M1 5h2q2 0 2-2V1.5h3M1 8.5h3M6 8.5h3" stroke="#a0a0a0" stroke-width="0.9" fill="none"/></svg>
<svg class="a" style="left:448px;top:161px;" width="11" height="8" viewBox="0 0 11 8"><path d="M0.5 4h7M5.5 1.5L8 4L5.5 6.5M9.5 0.5v7" stroke="#888" stroke-width="1" fill="none"/></svg>
<div class="a" style="left:108px;top:172px;width:416px;height:11px;background:linear-gradient(180deg,#edf3fb,#d6e2f2);"></div>
<div class="a" style="left:108px;top:183px;width:416px;height:0.8px;background:#c0ccdc;"></div>
<div class="t" style="left:111px;top:174.90px;font-size:6.6px;color:#555;font-weight:normal;">Instance</div>
<div class="a" style="left:476.2px;top:172.5px;width:11px;height:10px;background:linear-gradient(180deg,#eef3fa,#d6e0ee);border:1px solid #b5c2d4;border-radius:1px"></div>
<svg class="a" style="left:478.2px;top:173.5px;" width="8" height="8" viewBox="0 0 8 8"><path d="M4.5 1L7 3.5L5.5 4.5L4 6L2 4L3.5 2.5Z" fill="#2b5fb0"/><path d="M2.5 5.5L1 7" stroke="#2b5fb0" stroke-width="0.9"/></svg>
<div class="a" style="left:487.9px;top:172.5px;width:11px;height:10px;background:linear-gradient(180deg,#eef3fa,#d6e0ee);border:1px solid #b5c2d4;border-radius:1px"></div>
<svg class="a" style="left:489.4px;top:173.5px;" width="9" height="8" viewBox="0 0 9 8"><rect x="3.5" y="0.8" width="5" height="3.5" fill="none" stroke="#445" stroke-width="0.8"/><rect x="0.8" y="3.8" width="4.5" height="3.5" fill="none" stroke="#445" stroke-width="0.8"/></svg>
<div class="a" style="left:499.59999999999997px;top:172.5px;width:11px;height:10px;background:linear-gradient(180deg,#eef3fa,#d6e0ee);border:1px solid #b5c2d4;border-radius:1px"></div>
<div class="a" style="left:503.09999999999997px;top:178.5px;width:4px;height:1.3px;background:#222;"></div>
<div class="a" style="left:511.29999999999995px;top:172.5px;width:11px;height:10px;background:linear-gradient(180deg,#eef3fa,#d6e0ee);border:1px solid #b5c2d4;border-radius:1px"></div>
<div class="a" style="left:513.8px;top:174.5px;width:6px;height:5px;background:none;border:1px solid #333;border-top-width:1.5px"></div>
<div class="a" style="left:108px;top:183px;width:416px;height:197px;background:#e0e0e0;"></div>
<div class="a" style="left:108px;top:183.5px;width:416px;height:8.5px;background:#aaaaaa;border-bottom:1px solid #9a9a9a"></div>
<div class="a" style="left:417px;top:183.5px;width:1px;height:8.5px;background:#c8c8c8;"></div>
<div class="t" style="left:248.5px;top:184.70px;font-size:6.6px;color:#222;font-weight:normal;">Hierarchy</div>
<div class="a" style="left:281px;top:185px;width:5px;height:5px;background:#dde8f4;border:1px solid #9ab"></div>
<div class="t" style="left:483px;top:184.70px;font-size:6.6px;color:#222;font-weight:normal;">Module</div>
<div class="a" style="left:117.5px;top:192.5px;width:406.5px;height:7.5px;background:#5b58a6;"></div>
<div class="a" style="left:110px;top:194px;width:6px;height:5px;background:#eeeeee;border:1px solid #aaa"></div>
<div class="a" style="left:111.5px;top:196px;width:3px;height:0.8px;background:#333;"></div>
<svg class="a" style="left:118px;top:192.5px;" width="10" height="8" viewBox="0 0 10 8"><rect x="0.5" y="1.5" width="4" height="6" fill="#4f7fb8"/><rect x="5" y="0.5" width="4" height="7" fill="#d8d8d8"/><rect x="1.5" y="0.5" width="2" height="2" fill="#fff"/></svg>
<div class="t" style="left:131px;top:193.00px;font-size:6.6px;color:#e8e6f8;font-weight:normal;">test</div>
<div class="t" style="left:419px;top:193.00px;font-size:6.6px;color:#e8e6f8;font-weight:normal;">test</div>
<div class="a" style="left:108px;top:208px;width:416px;height:0.8px;background:#cfcfcf;"></div>
<div class="a" style="left:121px;top:200px;width:0.6px;height:4px;background:#9a9a9a;"></div>
<div class="a" style="left:121px;top:204px;width:6px;height:0.6px;background:#9a9a9a;"></div>
<svg class="a" style="left:127px;top:200px;" width="10" height="8" viewBox="0 0 10 8"><path d="M1 1.5h3l1 1h4v5h-8z" fill="#e8b830" stroke="#b08820" stroke-width="0.4"/><rect x="0.5" y="4.5" width="4.5" height="3.5" fill="#1e5a8e"/></svg>
<div class="t" style="left:140px;top:201.00px;font-size:6.6px;color:#222;font-weight:normal;">add_inst</div>
<div class="t" style="left:419px;top:201.00px;font-size:6.6px;color:#222;font-weight:normal;">add</div>
<div class="a" style="left:108px;top:380.5px;width:416px;height:5px;background:#c6c6c6;border-top:1px solid #b4b4b4;border-bottom:1px solid #d8d8d8"></div>
<div class="a" style="left:116px;top:381.5px;width:358px;height:3px;background:#ececec;border:1px solid #c8c8c8"></div>
<svg class="a" style="left:108px;top:380.5px;" width="6" height="5" viewBox="0 0 6 5"><path d="M4.5 1L1.5 2.5L4.5 4" stroke="#888" stroke-width="0.7" fill="#f0f0f0"/></svg>
<svg class="a" style="left:518px;top:380.5px;" width="6" height="5" viewBox="0 0 6 5"><path d="M1.5 1L4.5 2.5L1.5 4" stroke="#888" stroke-width="0.7" fill="#f0f0f0"/></svg>
<div class="a" style="left:524px;top:172px;width:3.5px;height:227px;background:#dbe5f2;"></div>
<div class="a" style="left:524.5px;top:172px;width:1px;height:227px;background:#f4f8fd;"></div>
<div class="a" style="left:527.5px;top:172px;width:198.5px;height:11px;background:linear-gradient(180deg,#edf3fb,#d6e2f2);"></div>
<div class="a" style="left:527.5px;top:183px;width:198.5px;height:0.8px;background:#c0ccdc;"></div>
<div class="t" style="left:530.5px;top:174.90px;font-size:6.6px;color:#555;font-weight:normal;">Local</div>
<div class="a" style="left:678.2px;top:172.5px;width:11px;height:10px;background:linear-gradient(180deg,#eef3fa,#d6e0ee);border:1px solid #b5c2d4;border-radius:1px"></div>
<svg class="a" style="left:680.2px;top:173.5px;" width="8" height="8" viewBox="0 0 8 8"><path d="M4.5 1L7 3.5L5.5 4.5L4 6L2 4L3.5 2.5Z" fill="#2b5fb0"/><path d="M2.5 5.5L1 7" stroke="#2b5fb0" stroke-width="0.9"/></svg>
<div class="a" style="left:689.9000000000001px;top:172.5px;width:11px;height:10px;background:linear-gradient(180deg,#eef3fa,#d6e0ee);border:1px solid #b5c2d4;border-radius:1px"></div>
<svg class="a" style="left:691.4000000000001px;top:173.5px;" width="9" height="8" viewBox="0 0 9 8"><rect x="3.5" y="0.8" width="5" height="3.5" fill="none" stroke="#445" stroke-width="0.8"/><rect x="0.8" y="3.8" width="4.5" height="3.5" fill="none" stroke="#445" stroke-width="0.8"/></svg>
<div class="a" style="left:701.6px;top:172.5px;width:11px;height:10px;background:linear-gradient(180deg,#eef3fa,#d6e0ee);border:1px solid #b5c2d4;border-radius:1px"></div>
<div class="a" style="left:705.1px;top:178.5px;width:4px;height:1.3px;background:#222;"></div>
<div class="a" style="left:713.3000000000001px;top:172.5px;width:11px;height:10px;background:linear-gradient(180deg,#eef3fa,#d6e0ee);border:1px solid #b5c2d4;border-radius:1px"></div>
<div class="a" style="left:715.8000000000001px;top:174.5px;width:6px;height:5px;background:none;border:1px solid #333;border-top-width:1.5px"></div>
<div class="a" style="left:527.5px;top:183px;width:198.5px;height:214px;background:#e0e0e0;"></div>
<div class="a" style="left:535px;top:185px;width:143px;height:9.5px;background:#ffffff;border:1px solid #c6ced8;border-radius:1.5px"></div>
<div class="t" style="left:539px;top:186.25px;font-size:7px;color:#a8a8a8;font-weight:normal;">Filter String</div>
<svg class="a" style="left:670px;top:187.75px;" width="6" height="4" viewBox="0 0 6 4"><path d="M0.5 0.5H5.5L3 3.5Z" fill="#111"/></svg>
<div class="a" style="left:669px;top:192.5px;width:8px;height:1px;background:#888;"></div>
<div class="a" style="left:681.5px;top:184.5px;width:12.5px;height:10.5px;background:#dde8f5;border:1px solid #b6c4d6;border-radius:1.5px"></div>
<div class="a" style="left:697.5px;top:184.5px;width:12.5px;height:10.5px;background:#dde8f5;border:1px solid #b6c4d6;border-radius:1.5px"></div>
<svg class="a" style="left:683.5px;top:186.5px;" width="9" height="7" viewBox="0 0 9 7"><path d="M0.5 0.5H7.5L4.5 4V6.5L3.5 6V4Z" fill="#2a66b8"/></svg>
<svg class="a" style="left:699.5px;top:186px;" width="9" height="8" viewBox="0 0 9 8"><text x="0" y="7.5" font-size="7" font-weight="bold" fill="#2a66b8" font-family="Liberation Sans">Aa</text><circle cx="6" cy="1.5" r="1.3" fill="#e03030"/></svg>
<div class="a" style="left:713px;top:184.5px;width:12px;height:10.5px;background:#dde8f5;border:1px solid #b6c4d6;border-radius:1.5px"></div>
<svg class="a" style="left:715px;top:187px;" width="8" height="6" viewBox="0 0 8 6"><rect x="0.5" y="0.5" width="6" height="5" fill="#e8e8ff" stroke="#5050d0" stroke-width="0.8"/></svg>
<div class="a" style="left:538px;top:196.5px;width:11px;height:10px;background:#dde8f5;border:1px solid #b6c4d6;border-radius:1.5px"></div>
<svg class="a" style="left:540px;top:197.5px;" width="8" height="8" viewBox="0 0 8 8"><path d="M4 0.5L7.5 2.5V6L4 7.5L0.5 6V2.5Z" fill="#2a78c0"/><path d="M0.5 2.5L4 4.5L7.5 2.5M4 4.5V7.5" stroke="#bfe0ff" stroke-width="0.5" fill="none"/></svg>
<div class="a" style="left:551px;top:197px;width:143px;height:10px;background:#ffffff;border:1px solid #c6ced8;border-radius:1.5px"></div>
<div class="t" style="left:555px;top:198.50px;font-size:7px;color:#a8a8a8;font-weight:normal;">Search String</div>
<svg class="a" style="left:686px;top:200.0px;" width="6" height="4" viewBox="0 0 6 4"><path d="M0.5 0.5H5.5L3 3.5Z" fill="#111"/></svg>
<div class="a" style="left:685px;top:205px;width:8px;height:1px;background:#888;"></div>
<div class="a" style="left:697px;top:196.5px;width:12.5px;height:10.5px;background:#6aa8e0;border:1px solid #5088c0;border-radius:1.5px"></div>
<svg class="a" style="left:699.5px;top:198px;" width="8" height="7" viewBox="0 0 8 7"><circle cx="4" cy="3.3" r="2.3" fill="#e8f2fb" stroke="#2a5b9a" stroke-width="0.7"/><path d="M5.5 5L7 6.5" stroke="#2a5b9a"/></svg>
<div class="a" style="left:712.5px;top:196.5px;width:12.5px;height:10.5px;background:#c8d8ea;border:1px solid #a8b8cc;border-radius:1.5px"></div>
<svg class="a" style="left:714px;top:197.5px;" width="9" height="8" viewBox="0 0 9 8"><circle cx="5" cy="3.5" r="2.5" fill="#fff" stroke="#223" stroke-width="0.9"/><path d="M3 5.5L1 7.5" stroke="#223" stroke-width="1"/></svg>
<svg class="a" style="left:530px;top:205px;" width="5" height="3" viewBox="0 0 5 3"><path d="M0.5 2.5L2.5 0.5L4.5 2.5" stroke="#1a4a8a" stroke-width="0.9" fill="none"/></svg>
<div class="a" style="left:529px;top:209.5px;width:188px;height:7.5px;background:#aaaaaa;border-bottom:1px solid #999"></div>
<div class="a" style="left:612px;top:209px;width:1px;height:8px;background:#bcbcbc;"></div>
<div class="a" style="left:656px;top:209px;width:1px;height:8px;background:#bcbcbc;"></div>
<div class="t" style="left:562.5px;top:209.70px;font-size:6.6px;color:#222;font-weight:normal;">Name</div>
<svg class="a" style="left:585px;top:211.5px;" width="5" height="3" viewBox="0 0 5 3"><path d="M0.5 0.5L2.5 2.5L4.5 0.5" stroke="#1a4a8a" stroke-width="0.9" fill="none"/></svg>
<div class="t" style="left:627px;top:209.70px;font-size:6.6px;color:#333;font-weight:normal;">Value</div>
<div class="t" style="left:714px;top:209.70px;font-size:6.6px;color:#333;font-weight:normal;">T</div>
<div class="a" style="left:717px;top:208px;width:7px;height:182px;background:#e6e6e6;border-left:1px solid #c8c8c8"></div>
<svg class="a" style="left:717px;top:209px;" width="7" height="6" viewBox="0 0 7 6"><path d="M3.5 1L6 5H1Z" fill="#fff" stroke="#999" stroke-width="0.5"/></svg>
<div class="a" style="left:718px;top:216px;width:5px;height:174px;background:#f2f2f2;border:1px solid #cfcfcf"></div>
<div class="a" style="left:529px;top:391.5px;width:188px;height:5px;background:#c6c6c6;border-top:1px solid #b4b4b4;border-bottom:1px solid #d8d8d8"></div>
<div class="a" style="left:536px;top:392.5px;width:128px;height:3px;background:#ececec;border:1px solid #c8c8c8"></div>
<svg class="a" style="left:529px;top:391.5px;" width="6" height="5" viewBox="0 0 6 5"><path d="M4.5 1L1.5 2.5L4.5 4" stroke="#888" stroke-width="0.7" fill="#f0f0f0"/></svg>
<svg class="a" style="left:711px;top:391.5px;" width="6" height="5" viewBox="0 0 6 5"><path d="M1.5 1L4.5 2.5L1.5 4" stroke="#888" stroke-width="0.7" fill="#f0f0f0"/></svg>
<div class="a" style="left:726px;top:172px;width:3px;height:227px;background:#dbe5f2;"></div>
<div class="a" style="left:726.5px;top:172px;width:1px;height:227px;background:#f4f8fd;"></div>
<div class="a" style="left:729px;top:172px;width:428.5px;height:11px;background:linear-gradient(180deg,#edf3fb,#d6e2f2);"></div>
<div class="a" style="left:729px;top:183px;width:428.5px;height:0.8px;background:#c0ccdc;"></div>
<div class="t" style="left:732.5px;top:174.60px;font-size:6.4px;color:#333;font-weight:bold;font-family:'Liberation Mono',monospace;transform:scaleX(0.9);transform-origin:left">*Src1:test(/home/hs/vcs_test/test.v)</div>
<div class="a" style="left:1098.0px;top:172.5px;width:11px;height:10px;background:linear-gradient(180deg,#eef3fa,#d6e0ee);border:1px solid #b5c2d4;border-radius:1px"></div>
<svg class="a" style="left:1099.5px;top:173.5px;" width="8" height="8" viewBox="0 0 8 8"><circle cx="4" cy="4" r="3" fill="none" stroke="#556" stroke-width="1.3" stroke-dasharray="1.5 0.8"/></svg>
<div class="a" style="left:1109.7px;top:172.5px;width:11px;height:10px;background:linear-gradient(180deg,#eef3fa,#d6e0ee);border:1px solid #b5c2d4;border-radius:1px"></div>
<svg class="a" style="left:1111.7px;top:173.5px;" width="8" height="8" viewBox="0 0 8 8"><path d="M4.5 1L7 3.5L5.5 4.5L4 6L2 4L3.5 2.5Z" fill="#2b5fb0"/><path d="M2.5 5.5L1 7" stroke="#2b5fb0" stroke-width="0.9"/></svg>
<div class="a" style="left:1121.4px;top:172.5px;width:11px;height:10px;background:linear-gradient(180deg,#eef3fa,#d6e0ee);border:1px solid #b5c2d4;border-radius:1px"></div>
<svg class="a" style="left:1122.9px;top:173.5px;" width="9" height="8" viewBox="0 0 9 8"><rect x="3.5" y="0.8" width="5" height="3.5" fill="none" stroke="#445" stroke-width="0.8"/><rect x="0.8" y="3.8" width="4.5" height="3.5" fill="none" stroke="#445" stroke-width="0.8"/></svg>
<div class="a" style="left:1133.1px;top:172.5px;width:11px;height:10px;background:linear-gradient(180deg,#eef3fa,#d6e0ee);border:1px solid #b5c2d4;border-radius:1px"></div>
<div class="a" style="left:1136.6px;top:178.5px;width:4px;height:1.3px;background:#222;"></div>
<div class="a" style="left:1144.8px;top:172.5px;width:11px;height:10px;background:linear-gradient(180deg,#eef3fa,#d6e0ee);border:1px solid #b5c2d4;border-radius:1px"></div>
<div class="a" style="left:1147.3px;top:174.5px;width:6px;height:5px;background:none;border:1px solid #333;border-top-width:1.5px"></div>
<div class="a" style="left:729px;top:183px;width:428.5px;height:215px;background:#e0e0e0;"></div>
<div class="a" style="left:757px;top:183px;width:1px;height:197px;background:#555;"></div>
<svg class="a" style="left:737px;top:184.5px;" width="12" height="5" viewBox="0 0 12 5"><path d="M0.5 2.5H8" stroke="#6a1a50" stroke-width="1.4"/><path d="M6.5 0.2L11.5 2.5L6.5 4.8Z" fill="#3a20a0"/></svg>
<div class="t" style="left:753.3px;top:185.45px;font-size:6.9px;color:#333;font-weight:normal;font-family:'Liberation Mono',monospace;transform:scaleX(0.88);transform-origin:left">3</div>
<div class="t" style="left:760px;top:185.40px;font-size:6.4px;color:#111;font-weight:normal;font-family:'Liberation Mono',monospace;white-space:pre;transform:scaleX(0.88);transform-origin:left;-webkit-text-stroke:0.2px currentColor"><span style="color:#2a2ae0">module</span><span style="color:#151515"> </span><span style="color:#151515">test;</span></div>
<div class="t" style="left:753.3px;top:192.25px;font-size:6.9px;color:#333;font-weight:normal;font-family:'Liberation Mono',monospace;transform:scaleX(0.88);transform-origin:left">4</div>
<div class="t" style="left:753.3px;top:199.05px;font-size:6.9px;color:#333;font-weight:normal;font-family:'Liberation Mono',monospace;transform:scaleX(0.88);transform-origin:left">5</div>
<div class="t" style="left:760px;top:199.00px;font-size:6.4px;color:#111;font-weight:normal;font-family:'Liberation Mono',monospace;white-space:pre;transform:scaleX(0.88);transform-origin:left;-webkit-text-stroke:0.2px currentColor"><span style="color:#2a2ae0">reg </span><span style="color:#a02828">clk</span><span style="color:#151515">;</span></div>
<div class="t" style="left:753.3px;top:205.85px;font-size:6.9px;color:#333;font-weight:normal;font-family:'Liberation Mono',monospace;transform:scaleX(0.88);transform-origin:left">6</div>
<div class="t" style="left:760px;top:205.80px;font-size:6.4px;color:#111;font-weight:normal;font-family:'Liberation Mono',monospace;white-space:pre;transform:scaleX(0.88);transform-origin:left;-webkit-text-stroke:0.2px currentColor"><span style="color:#2a2ae0">reg </span><span style="color:#a02828">rst_n</span><span style="color:#151515">;</span></div>
<div class="t" style="left:753.3px;top:212.65px;font-size:6.9px;color:#333;font-weight:normal;font-family:'Liberation Mono',monospace;transform:scaleX(0.88);transform-origin:left">7</div>
<div class="t" style="left:753.3px;top:219.45px;font-size:6.9px;color:#333;font-weight:normal;font-family:'Liberation Mono',monospace;transform:scaleX(0.88);transform-origin:left">8</div>
<div class="t" style="left:760px;top:219.40px;font-size:6.4px;color:#111;font-weight:normal;font-family:'Liberation Mono',monospace;white-space:pre;transform:scaleX(0.88);transform-origin:left;-webkit-text-stroke:0.2px currentColor"><span style="color:#2a2ae0">reg </span><span style="color:#151515">[20:0] </span><span style="color:#a02828">A</span><span style="color:#151515">;</span></div>
<div class="t" style="left:753.3px;top:226.25px;font-size:6.9px;color:#333;font-weight:normal;font-family:'Liberation Mono',monospace;transform:scaleX(0.88);transform-origin:left">9</div>
<div class="t" style="left:760px;top:226.20px;font-size:6.4px;color:#111;font-weight:normal;font-family:'Liberation Mono',monospace;white-space:pre;transform:scaleX(0.88);transform-origin:left;-webkit-text-stroke:0.2px currentColor"><span style="color:#2a2ae0">reg signed </span><span style="color:#151515">[17:0] </span><span style="color:#a02828">B</span><span style="color:#151515">;</span></div>
<div class="t" style="left:749.6px;top:233.05px;font-size:6.9px;color:#333;font-weight:normal;font-family:'Liberation Mono',monospace;transform:scaleX(0.88);transform-origin:left">10</div>
<div class="t" style="left:749.6px;top:239.85px;font-size:6.9px;color:#333;font-weight:normal;font-family:'Liberation Mono',monospace;transform:scaleX(0.88);transform-origin:left">11</div>
<div class="t" style="left:760px;top:239.80px;font-size:6.4px;color:#111;font-weight:normal;font-family:'Liberation Mono',monospace;white-space:pre;transform:scaleX(0.88);transform-origin:left;-webkit-text-stroke:0.2px currentColor"><span style="color:#2a2ae0">wire signed </span><span style="color:#151515">[22:0] </span><span style="color:#a02828">C</span><span style="color:#151515">;</span></div>
<div class="t" style="left:749.6px;top:246.65px;font-size:6.9px;color:#333;font-weight:normal;font-family:'Liberation Mono',monospace;transform:scaleX(0.88);transform-origin:left">12</div>
<div class="t" style="left:749.6px;top:253.45px;font-size:6.9px;color:#333;font-weight:normal;font-family:'Liberation Mono',monospace;transform:scaleX(0.88);transform-origin:left">13</div>
<div class="t" style="left:760px;top:253.40px;font-size:6.4px;color:#111;font-weight:normal;font-family:'Liberation Mono',monospace;white-space:pre;transform:scaleX(0.88);transform-origin:left;-webkit-text-stroke:0.2px currentColor"><span style="color:#2a2ae0">initial begin</span></div>
<div class="t" style="left:749.6px;top:260.25px;font-size:6.9px;color:#333;font-weight:normal;font-family:'Liberation Mono',monospace;transform:scaleX(0.88);transform-origin:left">14</div>
<div class="t" style="left:760px;top:260.20px;font-size:6.4px;color:#111;font-weight:normal;font-family:'Liberation Mono',monospace;white-space:pre;transform:scaleX(0.88);transform-origin:left;-webkit-text-stroke:0.2px currentColor"><span style="color:#151515">        </span><span style="color:#a02828">clk</span><span style="color:#151515"> = 0;</span></div>
<div class="t" style="left:749.6px;top:267.05px;font-size:6.9px;color:#333;font-weight:normal;font-family:'Liberation Mono',monospace;transform:scaleX(0.88);transform-origin:left">15</div>
<div class="t" style="left:760px;top:267.00px;font-size:6.4px;color:#111;font-weight:normal;font-family:'Liberation Mono',monospace;white-space:pre;transform:scaleX(0.88);transform-origin:left;-webkit-text-stroke:0.2px currentColor"><span style="color:#151515">        </span><span style="color:#a02828">rst_n</span><span style="color:#151515"> = 0;</span></div>
<div class="t" style="left:749.6px;top:273.85px;font-size:6.9px;color:#333;font-weight:normal;font-family:'Liberation Mono',monospace;transform:scaleX(0.88);transform-origin:left">16</div>
<div class="t" style="left:760px;top:273.80px;font-size:6.4px;color:#111;font-weight:normal;font-family:'Liberation Mono',monospace;white-space:pre;transform:scaleX(0.88);transform-origin:left;-webkit-text-stroke:0.2px currentColor"><span style="color:#151515">        </span><span style="color:#a02828">A</span><span style="color:#151515"> = 21&#x27;b0;</span></div>
<div class="t" style="left:749.6px;top:280.65px;font-size:6.9px;color:#333;font-weight:normal;font-family:'Liberation Mono',monospace;transform:scaleX(0.88);transform-origin:left">17</div>
<div class="t" style="left:760px;top:280.60px;font-size:6.4px;color:#111;font-weight:normal;font-family:'Liberation Mono',monospace;white-space:pre;transform:scaleX(0.88);transform-origin:left;-webkit-text-stroke:0.2px currentColor"><span style="color:#151515">        </span><span style="color:#a02828">B</span><span style="color:#151515"> = 18&#x27;b0;</span></div>
<div class="t" style="left:749.6px;top:287.45px;font-size:6.9px;color:#333;font-weight:normal;font-family:'Liberation Mono',monospace;transform:scaleX(0.88);transform-origin:left">18</div>
<div class="t" style="left:760px;top:287.40px;font-size:6.4px;color:#111;font-weight:normal;font-family:'Liberation Mono',monospace;white-space:pre;transform:scaleX(0.88);transform-origin:left;-webkit-text-stroke:0.2px currentColor"><span style="color:#151515">        #10;</span></div>
<div class="t" style="left:749.6px;top:294.25px;font-size:6.9px;color:#333;font-weight:normal;font-family:'Liberation Mono',monospace;transform:scaleX(0.88);transform-origin:left">19</div>
<div class="t" style="left:760px;top:294.20px;font-size:6.4px;color:#111;font-weight:normal;font-family:'Liberation Mono',monospace;white-space:pre;transform:scaleX(0.88);transform-origin:left;-webkit-text-stroke:0.2px currentColor"><span style="color:#151515">        </span><span style="color:#a02828">rst_n</span><span style="color:#151515"> = 1;</span></div>
<div class="t" style="left:749.6px;top:301.05px;font-size:6.9px;color:#333;font-weight:normal;font-family:'Liberation Mono',monospace;transform:scaleX(0.88);transform-origin:left">20</div>
<div class="t" style="left:760px;top:301.00px;font-size:6.4px;color:#111;font-weight:normal;font-family:'Liberation Mono',monospace;white-space:pre;transform:scaleX(0.88);transform-origin:left;-webkit-text-stroke:0.2px currentColor"><span style="color:#151515">        </span><span style="color:#2a2ae0">repeat</span><span style="color:#151515">(80) @(</span><span style="color:#2a2ae0">posedge</span><span style="color:#151515"> </span><span style="color:#a02828">clk</span><span style="color:#151515">) </span><span style="color:#2a2ae0">begin</span></div>
<div class="t" style="left:749.6px;top:307.85px;font-size:6.9px;color:#333;font-weight:normal;font-family:'Liberation Mono',monospace;transform:scaleX(0.88);transform-origin:left">21</div>
<div class="t" style="left:760px;top:307.80px;font-size:6.4px;color:#111;font-weight:normal;font-family:'Liberation Mono',monospace;white-space:pre;transform:scaleX(0.88);transform-origin:left;-webkit-text-stroke:0.2px currentColor"><span style="color:#151515">          </span><span style="color:#a02828">A</span><span style="color:#151515"> = </span><span style="color:#a02828">A</span><span style="color:#151515"> + 21&#x27;b1;</span></div>
<div class="t" style="left:749.6px;top:314.65px;font-size:6.9px;color:#333;font-weight:normal;font-family:'Liberation Mono',monospace;transform:scaleX(0.88);transform-origin:left">22</div>
<div class="t" style="left:760px;top:314.60px;font-size:6.4px;color:#111;font-weight:normal;font-family:'Liberation Mono',monospace;white-space:pre;transform:scaleX(0.88);transform-origin:left;-webkit-text-stroke:0.2px currentColor"><span style="color:#151515">        </span><span style="color:#2a2ae0">end</span></div>
<div class="t" style="left:749.6px;top:321.45px;font-size:6.9px;color:#333;font-weight:normal;font-family:'Liberation Mono',monospace;transform:scaleX(0.88);transform-origin:left">23</div>
<div class="t" style="left:749.6px;top:328.25px;font-size:6.9px;color:#333;font-weight:normal;font-family:'Liberation Mono',monospace;transform:scaleX(0.88);transform-origin:left">24</div>
<div class="t" style="left:760px;top:328.20px;font-size:6.4px;color:#111;font-weight:normal;font-family:'Liberation Mono',monospace;white-space:pre;transform:scaleX(0.88);transform-origin:left;-webkit-text-stroke:0.2px currentColor"><span style="color:#151515">    #2000;</span></div>
<div class="t" style="left:749.6px;top:335.05px;font-size:6.9px;color:#333;font-weight:normal;font-family:'Liberation Mono',monospace;transform:scaleX(0.88);transform-origin:left">25</div>
<div class="t" style="left:760px;top:335.00px;font-size:6.4px;color:#111;font-weight:normal;font-family:'Liberation Mono',monospace;white-space:pre;transform:scaleX(0.88);transform-origin:left;-webkit-text-stroke:0.2px currentColor"><span style="color:#151515">    $finish;</span></div>
<div class="t" style="left:749.6px;top:341.85px;font-size:6.9px;color:#333;font-weight:normal;font-family:'Liberation Mono',monospace;transform:scaleX(0.88);transform-origin:left">26</div>
<div class="t" style="left:749.6px;top:348.65px;font-size:6.9px;color:#333;font-weight:normal;font-family:'Liberation Mono',monospace;transform:scaleX(0.88);transform-origin:left">27</div>
<div class="t" style="left:760px;top:348.60px;font-size:6.4px;color:#111;font-weight:normal;font-family:'Liberation Mono',monospace;white-space:pre;transform:scaleX(0.88);transform-origin:left;-webkit-text-stroke:0.2px currentColor"><span style="color:#2a2ae0">end</span></div>
<div class="t" style="left:749.6px;top:355.45px;font-size:6.9px;color:#333;font-weight:normal;font-family:'Liberation Mono',monospace;transform:scaleX(0.88);transform-origin:left">28</div>
<div class="t" style="left:749.6px;top:362.25px;font-size:6.9px;color:#333;font-weight:normal;font-family:'Liberation Mono',monospace;transform:scaleX(0.88);transform-origin:left">29</div>
<div class="t" style="left:760px;top:362.20px;font-size:6.4px;color:#111;font-weight:normal;font-family:'Liberation Mono',monospace;white-space:pre;transform:scaleX(0.88);transform-origin:left;-webkit-text-stroke:0.2px currentColor"><span style="color:#2a2ae0">always</span><span style="color:#151515"> #5 </span><span style="color:#a02828">clk</span><span style="color:#151515"> = ~</span><span style="color:#a02828">clk</span><span style="color:#151515">;</span></div>
<div class="t" style="left:749.6px;top:369.05px;font-size:6.9px;color:#333;font-weight:normal;font-family:'Liberation Mono',monospace;transform:scaleX(0.88);transform-origin:left">30</div>
<div class="t" style="left:749.6px;top:375.85px;font-size:6.9px;color:#333;font-weight:normal;font-family:'Liberation Mono',monospace;transform:scaleX(0.88);transform-origin:left">31</div>
<div class="t" style="left:760px;top:375.80px;font-size:6.4px;color:#111;font-weight:normal;font-family:'Liberation Mono',monospace;white-space:pre;transform:scaleX(0.88);transform-origin:left;-webkit-text-stroke:0.2px currentColor"><span style="color:#333">// initial begin</span></div>
<div class="a" style="left:760px;top:184px;width:41px;height:6.2px;background:#0000ff;"></div>
<div class="a" style="left:784px;top:184px;width:13.7px;height:6.2px;background:#000;"></div>
<div class="t" style="left:760px;top:185.10px;font-size:6.4px;color:#e8e8ff;font-weight:normal;font-family:'Liberation Mono',monospace;white-space:pre;transform:scaleX(0.89);transform-origin:left">module test;</div>
<div class="a" style="left:1150.5px;top:183px;width:7px;height:197px;background:#e4e4e4;border-left:1px solid #c4c4c4"></div>
<svg class="a" style="left:1151px;top:184px;" width="7" height="6" viewBox="0 0 7 6"><path d="M3.5 1L6 5H1Z" fill="#fff" stroke="#999" stroke-width="0.5"/></svg>
<div class="a" style="left:1151.5px;top:189px;width:5.5px;height:8.5px;background:#8a8a8a;"></div>
<div class="a" style="left:1151.5px;top:197.5px;width:5.5px;height:128.5px;background:#f8f8f8;border:1px solid #cfcfcf"></div>
<div class="a" style="left:1151.5px;top:326px;width:5.5px;height:48px;background:#8a8a8a;"></div>
<svg class="a" style="left:1151px;top:374px;" width="7" height="6" viewBox="0 0 7 6"><path d="M3.5 5L6 1H1Z" fill="#fff" stroke="#999" stroke-width="0.5"/></svg>
<div class="a" style="left:737px;top:380.5px;width:413px;height:5px;background:#c6c6c6;border-top:1px solid #b4b4b4;border-bottom:1px solid #d8d8d8"></div>
<div class="a" style="left:744px;top:381.5px;width:404px;height:3px;background:#ececec;border:1px solid #c8c8c8"></div>
<svg class="a" style="left:737px;top:380.5px;" width="6" height="5" viewBox="0 0 6 5"><path d="M4.5 1L1.5 2.5L4.5 4" stroke="#888" stroke-width="0.7" fill="#f0f0f0"/></svg>
<svg class="a" style="left:1144px;top:380.5px;" width="6" height="5" viewBox="0 0 6 5"><path d="M1.5 1L4.5 2.5L1.5 4" stroke="#888" stroke-width="0.7" fill="#f0f0f0"/></svg>
<div class="a" style="left:1151px;top:381.5px;width:6.5px;height:6px;background:#ff0000;"></div>
<div class="a" style="left:729px;top:386.5px;width:428.5px;height:0.8px;background:#c8d2de;"></div>
<div class="a" style="left:108px;top:387px;width:416px;height:12px;background:linear-gradient(180deg,#eef4fb,#e2ebf6);"></div>
<div class="a" style="left:108px;top:398px;width:416px;height:1px;background:#c9d6e6;"></div>
<div class="a" style="left:108px;top:387.5px;width:30.5px;height:11.5px;background:linear-gradient(180deg,#dce9f8,#c9dcf2);border:1px solid #9cb6d6;border-bottom:2px solid #6a9ad0"></div>
<div class="t" style="left:111px;top:390.75px;font-size:6.6px;color:#444;font-weight:normal;">Instance</div>
<div class="a" style="left:139px;top:387.5px;width:39px;height:11.5px;background:linear-gradient(180deg,#fbfcfe,#eef2f7);border:1px solid #c8d0da"></div>
<div class="t" style="left:142px;top:390.75px;font-size:6.6px;color:#333;font-weight:normal;">Declaration</div>
<div class="a" style="left:178.5px;top:387.5px;width:22.5px;height:11.5px;background:linear-gradient(180deg,#fbfcfe,#eef2f7);border:1px solid #c8d0da"></div>
<div class="t" style="left:181.5px;top:390.75px;font-size:6.6px;color:#333;font-weight:normal;">Stack</div>
<div class="a" style="left:201.5px;top:387.5px;width:21px;height:11.5px;background:linear-gradient(180deg,#fbfcfe,#eef2f7);border:1px solid #c8d0da"></div>
<div class="t" style="left:204.5px;top:390.75px;font-size:6.6px;color:#333;font-weight:normal;">Class</div>
<div class="a" style="left:222.8px;top:387.5px;width:25px;height:11.5px;background:linear-gradient(180deg,#fbfcfe,#eef2f7);border:1px solid #c8d0da"></div>
<div class="t" style="left:225.8px;top:390.75px;font-size:6.6px;color:#333;font-weight:normal;">Object</div>
<div class="a" style="left:729px;top:387px;width:428.5px;height:12px;background:linear-gradient(180deg,#eef4fb,#e2ebf6);"></div>
<div class="a" style="left:730px;top:387.5px;width:41.5px;height:11.5px;background:linear-gradient(180deg,#dce9f8,#c9dcf2);border:1px solid #9cb6d6;border-bottom:2px solid #6a9ad0"></div>
<div class="t" style="left:733px;top:390.75px;font-size:6.6px;color:#444;font-weight:normal;">*Src1:test.v</div>
<div class="a" style="left:772px;top:387.5px;width:61px;height:11.5px;background:linear-gradient(180deg,#fbfcfe,#eef2f7);border:1px solid #c8d0da"></div>
<div class="t" style="left:775px;top:390.75px;font-size:6.6px;color:#333;font-weight:normal;">&lt;nSchema:3&gt;test</div>
<div class="a" style="left:108px;top:399px;width:1049.5px;height:1.5px;background:linear-gradient(180deg,#c8d6ea,#dfe8f4);"></div>
<div class="a" style="left:108px;top:400.5px;width:695px;height:12px;background:linear-gradient(180deg,#edf3fb,#d3e0f1);"></div>
<div class="t" style="left:111px;top:403.20px;font-size:7.2px;color:#444;font-weight:normal;">*&lt;nWave:4&gt; /home/hs/vcs_test/inter.fsdb</div>
<div class="a" style="left:732.0px;top:401.5px;width:11px;height:10px;background:linear-gradient(180deg,#eef3fa,#d6e0ee);border:1px solid #b5c2d4;border-radius:1px"></div>
<svg class="a" style="left:733.5px;top:402.5px;" width="8" height="8" viewBox="0 0 8 8"><circle cx="4" cy="4" r="3" fill="none" stroke="#556" stroke-width="1.3" stroke-dasharray="1.5 0.8"/></svg>
<div class="a" style="left:743.7px;top:401.5px;width:11px;height:10px;background:linear-gradient(180deg,#eef3fa,#d6e0ee);border:1px solid #b5c2d4;border-radius:1px"></div>
<svg class="a" style="left:745.7px;top:402.5px;" width="8" height="8" viewBox="0 0 8 8"><path d="M4.5 1L7 3.5L5.5 4.5L4 6L2 4L3.5 2.5Z" fill="#2b5fb0"/><path d="M2.5 5.5L1 7" stroke="#2b5fb0" stroke-width="0.9"/></svg>
<div class="a" style="left:755.4px;top:401.5px;width:11px;height:10px;background:linear-gradient(180deg,#eef3fa,#d6e0ee);border:1px solid #b5c2d4;border-radius:1px"></div>
<svg class="a" style="left:756.9px;top:402.5px;" width="9" height="8" viewBox="0 0 9 8"><rect x="3.5" y="0.8" width="5" height="3.5" fill="none" stroke="#445" stroke-width="0.8"/><rect x="0.8" y="3.8" width="4.5" height="3.5" fill="none" stroke="#445" stroke-width="0.8"/></svg>
<div class="a" style="left:767.1px;top:401.5px;width:11px;height:10px;background:linear-gradient(180deg,#eef3fa,#d6e0ee);border:1px solid #b5c2d4;border-radius:1px"></div>
<div class="a" style="left:770.6px;top:407.5px;width:4px;height:1.3px;background:#222;"></div>
<div class="a" style="left:778.8px;top:401.5px;width:11px;height:10px;background:linear-gradient(180deg,#eef3fa,#d6e0ee);border:1px solid #b5c2d4;border-radius:1px"></div>
<div class="a" style="left:781.3px;top:403.5px;width:6px;height:5px;background:none;border:1px solid #333;border-top-width:1.5px"></div>
<div class="a" style="left:790.5px;top:401.5px;width:11px;height:10px;background:linear-gradient(180deg,#eef3fa,#d6e0ee);border:1px solid #b5c2d4;border-radius:1px"></div>
<svg class="a" style="left:793.0px;top:403.5px;" width="6" height="6" viewBox="0 0 6 6"><path d="M0.5 0.5L5.5 5.5M5.5 0.5L0.5 5.5" stroke="#222" stroke-width="1"/></svg>
<div class="a" style="left:108px;top:412.5px;width:695px;height:11.5px;background:linear-gradient(180deg,#e6eef9,#d2dff0);"></div>
<div class="t" style="left:113px;top:415.00px;font-size:6.6px;color:#333;font-weight:normal;letter-spacing:0.3px">File</div>
<div class="a" style="left:113px;top:421.4px;width:3.5px;height:0.5px;background:#8a8a8a;"></div>
<div class="t" style="left:130px;top:415.00px;font-size:6.6px;color:#333;font-weight:normal;letter-spacing:0.3px">Signal</div>
<div class="a" style="left:130px;top:421.4px;width:3.5px;height:0.5px;background:#8a8a8a;"></div>
<div class="t" style="left:156px;top:415.00px;font-size:6.6px;color:#333;font-weight:normal;letter-spacing:0.3px">View</div>
<div class="a" style="left:156px;top:421.4px;width:3.5px;height:0.5px;background:#8a8a8a;"></div>
<div class="t" style="left:179px;top:415.00px;font-size:6.6px;color:#333;font-weight:normal;letter-spacing:0.3px">Waveform</div>
<div class="a" style="left:179px;top:421.4px;width:3.5px;height:0.5px;background:#8a8a8a;"></div>
<div class="t" style="left:218px;top:415.00px;font-size:6.6px;color:#333;font-weight:normal;letter-spacing:0.3px">Analog</div>
<div class="a" style="left:218px;top:421.4px;width:3.5px;height:0.5px;background:#8a8a8a;"></div>
<div class="t" style="left:246px;top:415.00px;font-size:6.6px;color:#333;font-weight:normal;letter-spacing:0.3px">Tools</div>
<div class="a" style="left:246px;top:421.4px;width:3.5px;height:0.5px;background:#8a8a8a;"></div>
<div class="t" style="left:268px;top:415.00px;font-size:6.6px;color:#333;font-weight:normal;letter-spacing:0.3px">Window</div>
<div class="a" style="left:268px;top:421.4px;width:3.5px;height:0.5px;background:#8a8a8a;"></div>
<div class="a" style="left:734px;top:414px;width:47px;height:8.5px;background:#fff;border:1px solid #c9d3e0;border-radius:1px"></div>
<div class="t" style="left:739px;top:415.10px;font-size:6.2px;color:#b0b0b0;font-weight:normal;">Menu</div>
<svg class="a" style="left:784.5px;top:414px;" width="10" height="9" viewBox="0 0 10 9"><rect x="0.5" y="0.5" width="9" height="8" fill="#c9d8ec"/><circle cx="5.5" cy="4" r="2.5" fill="none" stroke="#223" stroke-width="0.9"/><path d="M3.5 6L1.5 8" stroke="#223" stroke-width="1"/></svg>
<svg class="a" style="left:796px;top:416.5px;" width="6" height="4" viewBox="0 0 6 4"><path d="M0.5 0.5H5.5L3 3.5Z" fill="#111"/></svg>
<div class="a" style="left:108px;top:424px;width:695px;height:12.5px;background:linear-gradient(180deg,#e8f0fb,#d2dff1);"></div>
<div class="a" style="left:110px;top:425.5px;width:1.2px;height:1.2px;background:#b8c4d4;"></div>
<div class="a" style="left:110px;top:427.7px;width:1.2px;height:1.2px;background:#b8c4d4;"></div>
<div class="a" style="left:110px;top:429.9px;width:1.2px;height:1.2px;background:#b8c4d4;"></div>
<div class="a" style="left:110px;top:432.1px;width:1.2px;height:1.2px;background:#b8c4d4;"></div>
<svg class="a" style="left:116px;top:425.5px;" width="11" height="8" viewBox="0 0 11 8"><path d="M0.5 1.5h4l1 1h5v5h-10z" fill="#c0c0c0"/></svg>
<svg class="a" style="left:131px;top:425.5px;" width="11" height="8" viewBox="0 0 11 8"><path d="M2 5q0-4 4-3h3M7 0.5l2 1.5-2 1.5M9 3q0 4-4 3H2M4 4.5l-2 1.5 2 1.5" stroke="#6aa0d8" stroke-width="1" fill="none"/></svg>
<div class="a" style="left:146px;top:425.5px;width:1.2px;height:1.2px;background:#b8c4d4;"></div>
<div class="a" style="left:146px;top:427.7px;width:1.2px;height:1.2px;background:#b8c4d4;"></div>
<div class="a" style="left:146px;top:429.9px;width:1.2px;height:1.2px;background:#b8c4d4;"></div>
<div class="a" style="left:146px;top:432.1px;width:1.2px;height:1.2px;background:#b8c4d4;"></div>
<svg class="a" style="left:151px;top:425.5px;" width="9" height="8" viewBox="0 0 9 8"><path d="M7.5 7v-2q0-3-3-3h-3M3.5 0l-2.5 2 2.5 2" stroke="#2060b0" stroke-width="1.3" fill="none"/></svg>
<svg class="a" style="left:166px;top:425.5px;" width="9" height="8" viewBox="0 0 9 8"><path d="M1 1L8 7.5M8 1L1 7.5" stroke="#3a6ab8" stroke-width="1"/><circle cx="1.5" cy="7" r="1.2" fill="none" stroke="#3a6ab8" stroke-width="0.6"/><circle cx="7.5" cy="7" r="1.2" fill="none" stroke="#3a6ab8" stroke-width="0.6"/></svg>
<svg class="a" style="left:181px;top:425.5px;" width="10" height="8" viewBox="0 0 10 8"><rect x="0.5" y="0.5" width="6" height="6" fill="#e0e0e0" stroke="#b8b8b8" stroke-width="0.6"/><rect x="3.5" y="2" width="6" height="6" fill="#e0e0e0" stroke="#b8b8b8" stroke-width="0.6"/></svg>
<svg class="a" style="left:196px;top:425.5px;" width="10" height="8" viewBox="0 0 10 8"><rect x="0.5" y="1" width="8" height="7" fill="#e0e0e0" stroke="#b8b8b8" stroke-width="0.6"/><rect x="3" y="3" width="6" height="5" fill="#d0d0d0" stroke="#b8b8b8" stroke-width="0.6"/></svg>
<div class="a" style="left:211px;top:425.5px;width:1.2px;height:1.2px;background:#b8c4d4;"></div>
<div class="a" style="left:211px;top:427.7px;width:1.2px;height:1.2px;background:#b8c4d4;"></div>
<div class="a" style="left:211px;top:429.9px;width:1.2px;height:1.2px;background:#b8c4d4;"></div>
<div class="a" style="left:211px;top:432.1px;width:1.2px;height:1.2px;background:#b8c4d4;"></div>
<svg class="a" style="left:215px;top:425.5px;" width="9" height="9" viewBox="0 0 9 9"><path d="M1 0.5L8 4.5L5 5.5L7 8.5L6 9L4 6L1.5 8Z" fill="#f0c000"/></svg>
<div class="a" style="left:229.5px;top:425px;width:42.5px;height:10px;background:#fff;border:1px solid #c8d0da;border-radius:1.5px"></div>
<div class="t" style="left:233px;top:426.70px;font-size:6.6px;color:#222;font-weight:normal;">805</div>
<svg class="a" style="left:275px;top:425px;" width="10" height="10" viewBox="0 0 10 10"><path d="M5 0.5v3M2.5 3.5h5M1 6.5h8v2H1z" stroke="#555" stroke-width="0.8" fill="#aaa"/></svg>
<div class="a" style="left:287px;top:425px;width:41px;height:10px;background:#fff;border:1px solid #c8d0da;border-radius:1.5px"></div>
<div class="t" style="left:291px;top:426.70px;font-size:6.6px;color:#222;font-weight:normal;">0</div>
<svg class="a" style="left:331px;top:427px;" width="10" height="6" viewBox="0 0 10 6"><path d="M0.5 5.5L5 0.5L9.5 5.5Z" fill="none" stroke="#4a7ac0" stroke-width="0.9"/></svg>
<svg class="a" style="left:343px;top:428px;" width="6" height="4" viewBox="0 0 6 4"><path d="M0.5 0.5H5.5L3 3.5Z" fill="#111"/></svg>
<div class="t" style="left:351.5px;top:426.70px;font-size:6.6px;color:#555;font-weight:normal;">-805</div>
<div class="t" style="left:397px;top:426.70px;font-size:6.6px;color:#333;font-weight:normal;">x 1ns</div>
<div class="a" style="left:419px;top:425.5px;width:1.2px;height:1.2px;background:#b8c4d4;"></div>
<div class="a" style="left:419px;top:427.7px;width:1.2px;height:1.2px;background:#b8c4d4;"></div>
<div class="a" style="left:419px;top:429.9px;width:1.2px;height:1.2px;background:#b8c4d4;"></div>
<div class="a" style="left:419px;top:432.1px;width:1.2px;height:1.2px;background:#b8c4d4;"></div>
<div class="a" style="left:422.5px;top:425px;width:11px;height:10px;background:#eaf0f8;border:1px solid #b8c4d4;border-radius:1.5px"></div>
<div class="a" style="left:437.5px;top:425px;width:11px;height:10px;background:#eaf0f8;border:1px solid #b8c4d4;border-radius:1.5px"></div>
<div class="a" style="left:452.5px;top:425px;width:11px;height:10px;background:#eaf0f8;border:1px solid #b8c4d4;border-radius:1.5px"></div>
<svg class="a" style="left:424px;top:426px;" width="9" height="8" viewBox="0 0 9 8"><circle cx="4" cy="3.5" r="3" fill="#fff" stroke="#222" stroke-width="0.8"/><path d="M2.5 3.5h3" stroke="#222" stroke-width="0.7"/><path d="M6 5.5L8 7.5" stroke="#222"/></svg>
<svg class="a" style="left:439px;top:426px;" width="9" height="8" viewBox="0 0 9 8"><circle cx="4" cy="3.5" r="3" fill="#fff" stroke="#222" stroke-width="0.8"/><path d="M2.5 3.5h3M4 2v3" stroke="#222" stroke-width="0.7"/><path d="M6 5.5L8 7.5" stroke="#222"/></svg>
<div class="t" style="left:454.5px;top:426.20px;font-size:4px;color:#333;font-weight:normal;">100</div>
<div class="t" style="left:456px;top:430.25px;font-size:3.5px;color:#333;font-weight:normal;">%</div>
<div class="a" style="left:466px;top:425.5px;width:1.2px;height:1.2px;background:#b8c4d4;"></div>
<div class="a" style="left:466px;top:427.7px;width:1.2px;height:1.2px;background:#b8c4d4;"></div>
<div class="a" style="left:466px;top:429.9px;width:1.2px;height:1.2px;background:#b8c4d4;"></div>
<div class="a" style="left:466px;top:432.1px;width:1.2px;height:1.2px;background:#b8c4d4;"></div>
<div class="t" style="left:471px;top:426.70px;font-size:6.6px;color:#555;font-weight:normal;">By:</div>
<div class="a" style="left:487px;top:425px;width:11px;height:10px;background:#dde8f5;border:1px solid #9ab4d4;border-radius:1.5px"></div>
<svg class="a" style="left:489px;top:426px;" width="8" height="8" viewBox="0 0 8 8"><path d="M1 7.5h3v-6h3" stroke="#333" stroke-width="0.8" fill="none"/><path d="M4 2v5" stroke="#2a70d0" stroke-width="1.4"/></svg>
<svg class="a" style="left:502.5px;top:428px;" width="6" height="4" viewBox="0 0 6 4"><path d="M0.5 0.5H5.5L3 3.5Z" fill="#111"/></svg>
<div class="a" style="left:510.5px;top:425px;width:10.5px;height:10px;background:#e0e0e0;border:1px solid #aaa;border-radius:1.5px"></div>
<svg class="a" style="left:512px;top:426.5px;" width="7" height="7" viewBox="0 0 7 7"><path d="M5.5 0.5V6.5L1 3.5Z" fill="#222"/></svg>
<div class="a" style="left:524.5px;top:425px;width:10.5px;height:10px;background:#e0e0e0;border:1px solid #aaa;border-radius:1.5px"></div>
<svg class="a" style="left:526.5px;top:426.5px;" width="7" height="7" viewBox="0 0 7 7"><path d="M1.5 0.5V6.5L6 3.5Z" fill="#222"/></svg>
<svg class="a" style="left:540px;top:425.5px;" width="12" height="9" viewBox="0 0 12 9"><path d="M0.5 4.5L5 0.5H11.5V8.5H5Z" fill="#c8c8c8"/><rect x="6" y="2.5" width="4" height="4" fill="#e8e8e8"/></svg>
<div class="a" style="left:556px;top:425.5px;width:1.2px;height:1.2px;background:#b8c4d4;"></div>
<div class="a" style="left:556px;top:427.7px;width:1.2px;height:1.2px;background:#b8c4d4;"></div>
<div class="a" style="left:556px;top:429.9px;width:1.2px;height:1.2px;background:#b8c4d4;"></div>
<div class="a" style="left:556px;top:432.1px;width:1.2px;height:1.2px;background:#b8c4d4;"></div>
<div class="t" style="left:562px;top:426.80px;font-size:6.4px;color:#555;font-weight:normal;letter-spacing:0.6px">Go to:</div>
<div class="a" style="left:586px;top:425px;width:39px;height:10px;background:#fff;border:1px solid #c0c8d2;border-radius:1px"></div>
<div class="t" style="left:588px;top:426.70px;font-size:6.6px;color:#333;font-weight:normal;">add_inst</div>
<div class="a" style="left:616px;top:426px;width:8px;height:8px;background:#f4f4f4;border-left:1px solid #ccc"></div>
<svg class="a" style="left:617px;top:428.5px;" width="6" height="4" viewBox="0 0 6 4"><path d="M0.5 0.5H5.5L3 3.5Z" fill="#111"/></svg>
<div class="a" style="left:108px;top:436.5px;width:695px;height:174.5px;background:#d8d8d8;"></div>
<div class="a" style="left:108px;top:436.5px;width:189px;height:174px;background:#000;border-left:1px solid #707070"></div>
<div class="a" style="left:297px;top:436.5px;width:9.5px;height:174px;background:#d8d8d8;border-left:1px solid #bbb;border-right:1px solid #bbb"></div>
<div class="a" style="left:298.5px;top:437px;width:6px;height:6px;background:#f0f0f0;border:1px solid #aaa"></div>
<div class="a" style="left:298.5px;top:603px;width:6px;height:6px;background:#f0f0f0;border:1px solid #aaa"></div>
<div class="a" style="left:299px;top:443px;width:5px;height:160px;background:#cfcfcf;"></div>
<div class="a" style="left:307.5px;top:436.5px;width:36px;height:174px;background:#000;"></div>
<div class="a" style="left:343.5px;top:436.5px;width:3.5px;height:174px;background:#d8d8d8;"></div>
<div class="a" style="left:347px;top:436.5px;width:448.5px;height:174px;background:#000;"></div>
<div class="a" style="left:795.5px;top:436.5px;width:8px;height:174px;background:#e0e0e0;border-left:1px solid #bbb"></div>
<div class="a" style="left:797px;top:437px;width:6px;height:6px;background:#f4f4f4;border:1px solid #aaa"></div>
<div class="a" style="left:797px;top:603px;width:6px;height:7px;background:#f4f4f4;border:1px solid #aaa"></div>
<div class="a" style="left:108px;top:452px;width:188.5px;height:6px;background:#fff;"></div>
<div class="a" style="left:110px;top:453.5px;width:3px;height:3px;background:#222;"></div>
<div class="t" style="left:117px;top:451.90px;font-size:6.2px;color:#ff00ff;font-weight:normal;">add_inst</div>
<div class="a" style="left:108px;top:462.9px;width:3.5px;height:1.5px;background:#fff;"></div>
<div class="a" style="left:111px;top:458.7px;width:0.7px;height:8px;background:#7a7a7a;"></div>
<div class="a" style="left:111px;top:465.7px;width:3px;height:0.6px;background:#7a7a7a;"></div>
<div class="a" style="left:248.5px;top:460.2px;width:9px;height:7px;background:#3c5a6a;border:1px solid #8aa"></div>
<div class="t" style="left:250px;top:461.80px;font-size:3.8px;color:#cde;font-weight:normal;">fsr</div>
<div class="a" style="left:259.5px;top:460.2px;width:9px;height:7px;background:#b8d4f0;border:1px solid #8ab"></div>
<svg class="a" style="left:260.5px;top:461.2px;" width="7" height="5" viewBox="0 0 7 5"><path d="M2 0.5h2.5L6.5 2.5L4.5 4.5H2Z" fill="#1a5ab8"/></svg>
<div class="t" style="left:270px;top:460.30px;font-size:6.8px;color:#00c8d8;font-weight:normal;font-family:'Liberation Mono',monospace;letter-spacing:-0.3px">A[20:0]</div>
<div class="t" style="left:313.4px;top:460.40px;font-size:6.6px;color:#00c0d0;font-weight:normal;font-family:'Liberation Mono',monospace;white-space:pre;transform:scaleX(0.87);transform-origin:left">4f -&gt; 50</div>
<div class="a" style="left:108px;top:471.79999999999995px;width:3.5px;height:1.5px;background:#fff;"></div>
<div class="a" style="left:111px;top:467.59999999999997px;width:0.7px;height:8px;background:#7a7a7a;"></div>
<div class="a" style="left:111px;top:474.59999999999997px;width:3px;height:0.6px;background:#7a7a7a;"></div>
<div class="a" style="left:248.5px;top:469.09999999999997px;width:9px;height:7px;background:#3c5a6a;border:1px solid #8aa"></div>
<div class="t" style="left:250px;top:470.70px;font-size:3.8px;color:#cde;font-weight:normal;">fsr</div>
<div class="a" style="left:259.5px;top:469.09999999999997px;width:9px;height:7px;background:#b8d4f0;border:1px solid #8ab"></div>
<svg class="a" style="left:260.5px;top:470.09999999999997px;" width="7" height="5" viewBox="0 0 7 5"><path d="M2 0.5h2.5L6.5 2.5L4.5 4.5H2Z" fill="#1a5ab8"/></svg>
<div class="t" style="left:270px;top:469.20px;font-size:6.8px;color:#00c8d8;font-weight:normal;font-family:'Liberation Mono',monospace;letter-spacing:-0.3px">B[17:0]</div>
<div class="t" style="left:337.55px;top:469.30px;font-size:6.6px;color:#00c0d0;font-weight:normal;font-family:'Liberation Mono',monospace;white-space:pre;transform:scaleX(0.87);transform-origin:left">0</div>
<div class="a" style="left:108px;top:480.7px;width:3.5px;height:1.5px;background:#fff;"></div>
<div class="a" style="left:111px;top:476.5px;width:0.7px;height:8px;background:#7a7a7a;"></div>
<div class="a" style="left:111px;top:483.5px;width:3px;height:0.6px;background:#7a7a7a;"></div>
<div class="a" style="left:248.5px;top:478.0px;width:9px;height:7px;background:#3c5a6a;border:1px solid #8aa"></div>
<div class="t" style="left:250px;top:479.60px;font-size:3.8px;color:#cde;font-weight:normal;">fsr</div>
<div class="a" style="left:259.5px;top:478.0px;width:9px;height:7px;background:#b8d4f0;border:1px solid #8ab"></div>
<svg class="a" style="left:260.5px;top:479.0px;" width="7" height="5" viewBox="0 0 7 5"><path d="M2 0.5h2.5L6.5 2.5L4.5 4.5H2Z" fill="#1a5ab8"/></svg>
<div class="t" style="left:270px;top:478.10px;font-size:6.8px;color:#00c8d8;font-weight:normal;font-family:'Liberation Mono',monospace;letter-spacing:-0.3px">C[22:0]</div>
<div class="t" style="left:313.4px;top:478.20px;font-size:6.6px;color:#00c0d0;font-weight:normal;font-family:'Liberation Mono',monospace;white-space:pre;transform:scaleX(0.87);transform-origin:left">4f -&gt; 50</div>
<div class="a" style="left:108px;top:486px;width:188.5px;height:1.5px;background:#fff;"></div>
<div class="a" style="left:108px;top:489px;width:3px;height:1.5px;background:#fff;"></div>
<div class="a" style="left:108px;top:497.5px;width:3px;height:1.5px;background:#fff;"></div>
<div class="t" style="left:117px;top:487.90px;font-size:6.2px;color:#20c020;font-weight:normal;">G2</div>
<div class="a" style="left:347px;top:436.7px;width:448.5px;height:8px;background:#7c7c7c;"></div>
<div class="a" style="left:347.5px;top:436.7px;width:1.2px;height:8px;background:#3030d0;"></div>
<div class="a" style="left:794.5px;top:436.7px;width:1px;height:8px;background:#5a5aa0;"></div>
<div class="a" style="left:355.935px;top:442.2px;width:0.8px;height:1.5px;background:#e8e800;"></div>
<div class="a" style="left:364.37px;top:442.2px;width:0.8px;height:1.5px;background:#e8e800;"></div>
<div class="a" style="left:372.805px;top:442.2px;width:0.8px;height:1.5px;background:#e8e800;"></div>
<div class="a" style="left:381.24px;top:442.2px;width:0.8px;height:1.5px;background:#e8e800;"></div>
<div class="a" style="left:389.675px;top:440.7px;width:0.8px;height:3px;background:#e8e800;"></div>
<div class="a" style="left:398.11px;top:442.2px;width:0.8px;height:1.5px;background:#e8e800;"></div>
<div class="a" style="left:406.54499999999996px;top:442.2px;width:0.8px;height:1.5px;background:#e8e800;"></div>
<div class="a" style="left:414.98px;top:442.2px;width:0.8px;height:1.5px;background:#e8e800;"></div>
<div class="a" style="left:423.41499999999996px;top:442.2px;width:0.8px;height:1.5px;background:#e8e800;"></div>
<div class="a" style="left:440.28499999999997px;top:442.2px;width:0.8px;height:1.5px;background:#e8e800;"></div>
<div class="a" style="left:448.71999999999997px;top:442.2px;width:0.8px;height:1.5px;background:#e8e800;"></div>
<div class="a" style="left:457.155px;top:442.2px;width:0.8px;height:1.5px;background:#e8e800;"></div>
<div class="a" style="left:465.59px;top:442.2px;width:0.8px;height:1.5px;background:#e8e800;"></div>
<div class="a" style="left:474.025px;top:440.7px;width:0.8px;height:3px;background:#e8e800;"></div>
<div class="a" style="left:482.46px;top:442.2px;width:0.8px;height:1.5px;background:#e8e800;"></div>
<div class="a" style="left:490.895px;top:442.2px;width:0.8px;height:1.5px;background:#e8e800;"></div>
<div class="a" style="left:499.33px;top:442.2px;width:0.8px;height:1.5px;background:#e8e800;"></div>
<div class="a" style="left:507.765px;top:442.2px;width:0.8px;height:1.5px;background:#e8e800;"></div>
<div class="a" style="left:524.635px;top:442.2px;width:0.8px;height:1.5px;background:#e8e800;"></div>
<div class="a" style="left:533.0699999999999px;top:442.2px;width:0.8px;height:1.5px;background:#e8e800;"></div>
<div class="a" style="left:541.505px;top:442.2px;width:0.8px;height:1.5px;background:#e8e800;"></div>
<div class="a" style="left:549.9399999999999px;top:442.2px;width:0.8px;height:1.5px;background:#e8e800;"></div>
<div class="a" style="left:558.375px;top:440.7px;width:0.8px;height:3px;background:#e8e800;"></div>
<div class="a" style="left:566.81px;top:442.2px;width:0.8px;height:1.5px;background:#e8e800;"></div>
<div class="a" style="left:575.245px;top:442.2px;width:0.8px;height:1.5px;background:#e8e800;"></div>
<div class="a" style="left:583.68px;top:442.2px;width:0.8px;height:1.5px;background:#e8e800;"></div>
<div class="a" style="left:592.115px;top:442.2px;width:0.8px;height:1.5px;background:#e8e800;"></div>
<div class="a" style="left:608.9849999999999px;top:442.2px;width:0.8px;height:1.5px;background:#e8e800;"></div>
<div class="a" style="left:617.42px;top:442.2px;width:0.8px;height:1.5px;background:#e8e800;"></div>
<div class="a" style="left:625.855px;top:442.2px;width:0.8px;height:1.5px;background:#e8e800;"></div>
<div class="a" style="left:634.29px;top:442.2px;width:0.8px;height:1.5px;background:#e8e800;"></div>
<div class="a" style="left:642.7249999999999px;top:440.7px;width:0.8px;height:3px;background:#e8e800;"></div>
<div class="a" style="left:651.16px;top:442.2px;width:0.8px;height:1.5px;background:#e8e800;"></div>
<div class="a" style="left:659.595px;top:442.2px;width:0.8px;height:1.5px;background:#e8e800;"></div>
<div class="a" style="left:668.03px;top:442.2px;width:0.8px;height:1.5px;background:#e8e800;"></div>
<div class="a" style="left:676.4649999999999px;top:442.2px;width:0.8px;height:1.5px;background:#e8e800;"></div>
<div class="a" style="left:693.3349999999999px;top:442.2px;width:0.8px;height:1.5px;background:#e8e800;"></div>
<div class="a" style="left:701.77px;top:442.2px;width:0.8px;height:1.5px;background:#e8e800;"></div>
<div class="a" style="left:710.2049999999999px;top:442.2px;width:0.8px;height:1.5px;background:#e8e800;"></div>
<div class="a" style="left:718.6399999999999px;top:442.2px;width:0.8px;height:1.5px;background:#e8e800;"></div>
<div class="a" style="left:727.0749999999999px;top:440.7px;width:0.8px;height:3px;background:#e8e800;"></div>
<div class="a" style="left:735.51px;top:442.2px;width:0.8px;height:1.5px;background:#e8e800;"></div>
<div class="a" style="left:743.9449999999999px;top:442.2px;width:0.8px;height:1.5px;background:#e8e800;"></div>
<div class="a" style="left:752.3799999999999px;top:442.2px;width:0.8px;height:1.5px;background:#e8e800;"></div>
<div class="a" style="left:760.8149999999999px;top:442.2px;width:0.8px;height:1.5px;background:#e8e800;"></div>
<div class="a" style="left:777.685px;top:442.2px;width:0.8px;height:1.5px;background:#e8e800;"></div>
<div class="a" style="left:786.1199999999999px;top:442.2px;width:0.8px;height:1.5px;background:#e8e800;"></div>
<div class="a" style="left:347.5px;top:436.7px;width:0.8px;height:8px;background:#e8e800;"></div>
<div class="t" style="left:348.7px;top:437.60px;font-size:5.8px;color:#e8e800;font-weight:normal;">0</div>
<div class="a" style="left:431.85px;top:436.7px;width:0.8px;height:8px;background:#e8e800;"></div>
<div class="t" style="left:433.05px;top:437.60px;font-size:5.8px;color:#e8e800;font-weight:normal;">2,000</div>
<div class="a" style="left:516.2px;top:436.7px;width:0.8px;height:8px;background:#e8e800;"></div>
<div class="t" style="left:517.4000000000001px;top:437.60px;font-size:5.8px;color:#e8e800;font-weight:normal;">4,000</div>
<div class="a" style="left:600.55px;top:436.7px;width:0.8px;height:8px;background:#e8e800;"></div>
<div class="t" style="left:601.75px;top:437.60px;font-size:5.8px;color:#e8e800;font-weight:normal;">6,000</div>
<div class="a" style="left:684.9px;top:436.7px;width:0.8px;height:8px;background:#e8e800;"></div>
<div class="t" style="left:686.1px;top:437.60px;font-size:5.8px;color:#e8e800;font-weight:normal;">8,000</div>
<div class="a" style="left:769.25px;top:436.7px;width:0.8px;height:8px;background:#e8e800;"></div>
<div class="t" style="left:770.45px;top:437.60px;font-size:5.8px;color:#e8e800;font-weight:normal;">10,000</div>
<div class="a" style="left:380.8px;top:442.2px;width:1.5px;height:1.5px;background:#3030ff;"></div>
<div class="a" style="left:464.9px;top:442.2px;width:1.5px;height:1.5px;background:#3030ff;"></div>
<div class="a" style="left:347px;top:451.7px;width:448.5px;height:6.6px;background:#6c6c6c;"></div>
<div class="a" style="left:347px;top:458.3px;width:448.5px;height:0.5px;background:#222;"></div>
<div class="a" style="left:348px;top:459.8px;width:32.6px;height:8.100000000000012px;background:#f6e2c8;"></div>
<div class="a" style="left:348px;top:459.8px;width:32.6px;height:1.4px;background:repeating-linear-gradient(90deg,#f6e2c8 0px,#f6e2c8 1px,#8a7a68 1px,#8a7a68 1.6px);"></div>
<div class="a" style="left:348px;top:466.5px;width:32.6px;height:1.4px;background:repeating-linear-gradient(90deg,#f6e2c8 0px,#f6e2c8 1px,#8a7a68 1px,#8a7a68 1.6px);"></div>
<div class="a" style="left:381.5px;top:460.2px;width:84.5px;height:0.9px;background:#b8a490;"></div>
<div class="a" style="left:381.5px;top:466.6px;width:84.5px;height:0.9px;background:#b8a490;"></div>
<div class="a" style="left:381.5px;top:469.4px;width:84.5px;height:0.9px;background:#b8a490;"></div>
<div class="a" style="left:381.5px;top:475.6px;width:84.5px;height:0.9px;background:#b8a490;"></div>
<div class="a" style="left:348px;top:478.1px;width:32.6px;height:7.9999999999999885px;background:#f6e2c8;"></div>
<div class="a" style="left:348px;top:478.1px;width:32.6px;height:1.4px;background:repeating-linear-gradient(90deg,#f6e2c8 0px,#f6e2c8 1px,#8a7a68 1px,#8a7a68 1.6px);"></div>
<div class="a" style="left:348px;top:484.7px;width:32.6px;height:1.4px;background:repeating-linear-gradient(90deg,#f6e2c8 0px,#f6e2c8 1px,#8a7a68 1px,#8a7a68 1.6px);"></div>
<div class="a" style="left:381.5px;top:478.5px;width:84.5px;height:0.9px;background:#b8a490;"></div>
<div class="a" style="left:381.5px;top:484.8px;width:84.5px;height:0.9px;background:#b8a490;"></div>
<div class="a" style="left:348px;top:469.4px;width:33.5px;height:0.9px;background:#b8a490;"></div>
<div class="a" style="left:348px;top:475.6px;width:33.5px;height:0.9px;background:#b8a490;"></div>
<div class="t" style="left:419px;top:460.30px;font-size:6.4px;color:#00b0c0;font-weight:normal;font-family:'Liberation Mono',monospace;">50</div>
<div class="t" style="left:405px;top:469.80px;font-size:6.4px;color:#00b0c0;font-weight:normal;font-family:'Liberation Mono',monospace;">0</div>
<div class="t" style="left:419px;top:478.80px;font-size:6.4px;color:#00b0c0;font-weight:normal;font-family:'Liberation Mono',monospace;">50</div>
<div class="a" style="left:381.5px;top:445px;width:1px;height:158px;background:repeating-linear-gradient(180deg,#b8b8b8 0px,#b8b8b8 1px,transparent 1px,transparent 3px);"></div>
<div class="a" style="left:466px;top:445px;width:1px;height:158px;background:repeating-linear-gradient(180deg,#b8b8b8 0px,#b8b8b8 1px,transparent 1px,transparent 3px);"></div>
<div class="a" style="left:348px;top:445px;width:1px;height:158px;background:repeating-linear-gradient(180deg,#707070 0px,#707070 1px,transparent 1px,transparent 3px);"></div>
<div class="a" style="left:347px;top:602.8px;width:448.5px;height:8px;background:#7c7c7c;"></div>
<div class="a" style="left:351.9px;top:602.8px;width:1.2px;height:8px;background:#3030d0;"></div>
<div class="a" style="left:794.5px;top:602.8px;width:1px;height:8px;background:#5a5aa0;"></div>
<div class="a" style="left:360.14px;top:608.3px;width:0.8px;height:1.5px;background:#e8e800;"></div>
<div class="a" style="left:368.38px;top:608.3px;width:0.8px;height:1.5px;background:#e8e800;"></div>
<div class="a" style="left:376.62px;top:608.3px;width:0.8px;height:1.5px;background:#e8e800;"></div>
<div class="a" style="left:384.85999999999996px;top:608.3px;width:0.8px;height:1.5px;background:#e8e800;"></div>
<div class="a" style="left:393.09999999999997px;top:606.8px;width:0.8px;height:3px;background:#e8e800;"></div>
<div class="a" style="left:401.34px;top:608.3px;width:0.8px;height:1.5px;background:#e8e800;"></div>
<div class="a" style="left:409.58px;top:608.3px;width:0.8px;height:1.5px;background:#e8e800;"></div>
<div class="a" style="left:417.82px;top:608.3px;width:0.8px;height:1.5px;background:#e8e800;"></div>
<div class="a" style="left:426.05999999999995px;top:608.3px;width:0.8px;height:1.5px;background:#e8e800;"></div>
<div class="a" style="left:442.53999999999996px;top:608.3px;width:0.8px;height:1.5px;background:#e8e800;"></div>
<div class="a" style="left:450.78px;top:608.3px;width:0.8px;height:1.5px;background:#e8e800;"></div>
<div class="a" style="left:459.02px;top:608.3px;width:0.8px;height:1.5px;background:#e8e800;"></div>
<div class="a" style="left:467.26px;top:608.3px;width:0.8px;height:1.5px;background:#e8e800;"></div>
<div class="a" style="left:475.5px;top:606.8px;width:0.8px;height:3px;background:#e8e800;"></div>
<div class="a" style="left:483.74px;top:608.3px;width:0.8px;height:1.5px;background:#e8e800;"></div>
<div class="a" style="left:491.98px;top:608.3px;width:0.8px;height:1.5px;background:#e8e800;"></div>
<div class="a" style="left:500.21999999999997px;top:608.3px;width:0.8px;height:1.5px;background:#e8e800;"></div>
<div class="a" style="left:508.46px;top:608.3px;width:0.8px;height:1.5px;background:#e8e800;"></div>
<div class="a" style="left:524.9399999999999px;top:608.3px;width:0.8px;height:1.5px;background:#e8e800;"></div>
<div class="a" style="left:533.18px;top:608.3px;width:0.8px;height:1.5px;background:#e8e800;"></div>
<div class="a" style="left:541.42px;top:608.3px;width:0.8px;height:1.5px;background:#e8e800;"></div>
<div class="a" style="left:549.66px;top:608.3px;width:0.8px;height:1.5px;background:#e8e800;"></div>
<div class="a" style="left:557.9px;top:606.8px;width:0.8px;height:3px;background:#e8e800;"></div>
<div class="a" style="left:566.14px;top:608.3px;width:0.8px;height:1.5px;background:#e8e800;"></div>
<div class="a" style="left:574.38px;top:608.3px;width:0.8px;height:1.5px;background:#e8e800;"></div>
<div class="a" style="left:582.62px;top:608.3px;width:0.8px;height:1.5px;background:#e8e800;"></div>
<div class="a" style="left:590.86px;top:608.3px;width:0.8px;height:1.5px;background:#e8e800;"></div>
<div class="a" style="left:607.3399999999999px;top:608.3px;width:0.8px;height:1.5px;background:#e8e800;"></div>
<div class="a" style="left:615.5799999999999px;top:608.3px;width:0.8px;height:1.5px;background:#e8e800;"></div>
<div class="a" style="left:623.8199999999999px;top:608.3px;width:0.8px;height:1.5px;background:#e8e800;"></div>
<div class="a" style="left:632.06px;top:608.3px;width:0.8px;height:1.5px;background:#e8e800;"></div>
<div class="a" style="left:640.3px;top:606.8px;width:0.8px;height:3px;background:#e8e800;"></div>
<div class="a" style="left:648.54px;top:608.3px;width:0.8px;height:1.5px;background:#e8e800;"></div>
<div class="a" style="left:656.78px;top:608.3px;width:0.8px;height:1.5px;background:#e8e800;"></div>
<div class="a" style="left:665.02px;top:608.3px;width:0.8px;height:1.5px;background:#e8e800;"></div>
<div class="a" style="left:673.26px;top:608.3px;width:0.8px;height:1.5px;background:#e8e800;"></div>
<div class="a" style="left:689.74px;top:608.3px;width:0.8px;height:1.5px;background:#e8e800;"></div>
<div class="a" style="left:697.98px;top:608.3px;width:0.8px;height:1.5px;background:#e8e800;"></div>
<div class="a" style="left:706.22px;top:608.3px;width:0.8px;height:1.5px;background:#e8e800;"></div>
<div class="a" style="left:714.46px;top:608.3px;width:0.8px;height:1.5px;background:#e8e800;"></div>
<div class="a" style="left:722.7px;top:606.8px;width:0.8px;height:3px;background:#e8e800;"></div>
<div class="a" style="left:730.94px;top:608.3px;width:0.8px;height:1.5px;background:#e8e800;"></div>
<div class="a" style="left:739.1800000000001px;top:608.3px;width:0.8px;height:1.5px;background:#e8e800;"></div>
<div class="a" style="left:747.42px;top:608.3px;width:0.8px;height:1.5px;background:#e8e800;"></div>
<div class="a" style="left:755.66px;top:608.3px;width:0.8px;height:1.5px;background:#e8e800;"></div>
<div class="a" style="left:772.14px;top:608.3px;width:0.8px;height:1.5px;background:#e8e800;"></div>
<div class="a" style="left:780.38px;top:608.3px;width:0.8px;height:1.5px;background:#e8e800;"></div>
<div class="a" style="left:788.62px;top:608.3px;width:0.8px;height:1.5px;background:#e8e800;"></div>
<div class="a" style="left:351.9px;top:602.8px;width:0.8px;height:8px;background:#e8e800;"></div>
<div class="t" style="left:353.09999999999997px;top:603.70px;font-size:5.8px;color:#e8e800;font-weight:normal;">0</div>
<div class="a" style="left:434.29999999999995px;top:602.8px;width:0.8px;height:8px;background:#e8e800;"></div>
<div class="t" style="left:435.49999999999994px;top:603.70px;font-size:5.8px;color:#e8e800;font-weight:normal;">2,000</div>
<div class="a" style="left:516.7px;top:602.8px;width:0.8px;height:8px;background:#e8e800;"></div>
<div class="t" style="left:517.9000000000001px;top:603.70px;font-size:5.8px;color:#e8e800;font-weight:normal;">4,000</div>
<div class="a" style="left:599.1px;top:602.8px;width:0.8px;height:8px;background:#e8e800;"></div>
<div class="t" style="left:600.3000000000001px;top:603.70px;font-size:5.8px;color:#e8e800;font-weight:normal;">6,000</div>
<div class="a" style="left:681.5px;top:602.8px;width:0.8px;height:8px;background:#e8e800;"></div>
<div class="t" style="left:682.7px;top:603.70px;font-size:5.8px;color:#e8e800;font-weight:normal;">8,000</div>
<div class="a" style="left:763.9px;top:602.8px;width:0.8px;height:8px;background:#e8e800;"></div>
<div class="t" style="left:765.1px;top:603.70px;font-size:5.8px;color:#e8e800;font-weight:normal;">10,000</div>
<div class="a" style="left:384.3px;top:608.3px;width:1.5px;height:1.5px;background:#3030ff;"></div>
<div class="a" style="left:467px;top:608.3px;width:1.5px;height:1.5px;background:#3030ff;"></div>
<div class="a" style="left:108px;top:610.5px;width:695px;height:7px;background:#e4e4e4;"></div>
<div class="a" style="left:108px;top:611px;width:189px;height:6px;background:#c6c6c6;border-top:1px solid #b4b4b4;border-bottom:1px solid #d8d8d8"></div>
<div class="a" style="left:116px;top:612px;width:172px;height:4px;background:#ececec;border:1px solid #c8c8c8"></div>
<svg class="a" style="left:108px;top:611px;" width="6" height="6" viewBox="0 0 6 6"><path d="M4.5 1L1.5 2.5L4.5 4" stroke="#888" stroke-width="0.7" fill="#f0f0f0"/></svg>
<svg class="a" style="left:291px;top:611px;" width="6" height="6" viewBox="0 0 6 6"><path d="M1.5 1L4.5 2.5L1.5 4" stroke="#888" stroke-width="0.7" fill="#f0f0f0"/></svg>
<div class="a" style="left:307.5px;top:611px;width:36px;height:6px;background:#c6c6c6;border-top:1px solid #b4b4b4;border-bottom:1px solid #d8d8d8"></div>
<div class="a" style="left:313.5px;top:612px;width:24px;height:4px;background:#ececec;border:1px solid #c8c8c8"></div>
<svg class="a" style="left:307.5px;top:611px;" width="6" height="6" viewBox="0 0 6 6"><path d="M4.5 1L1.5 2.5L4.5 4" stroke="#888" stroke-width="0.7" fill="#f0f0f0"/></svg>
<svg class="a" style="left:337.5px;top:611px;" width="6" height="6" viewBox="0 0 6 6"><path d="M1.5 1L4.5 2.5L1.5 4" stroke="#888" stroke-width="0.7" fill="#f0f0f0"/></svg>
<div class="a" style="left:347px;top:611px;width:448.5px;height:6px;background:#c6c6c6;border-top:1px solid #b4b4b4;border-bottom:1px solid #d8d8d8"></div>
<div class="a" style="left:354px;top:612px;width:434px;height:4px;background:#ececec;border:1px solid #c8c8c8"></div>
<svg class="a" style="left:347px;top:611px;" width="6" height="6" viewBox="0 0 6 6"><path d="M4.5 1L1.5 2.5L4.5 4" stroke="#888" stroke-width="0.7" fill="#f0f0f0"/></svg>
<svg class="a" style="left:789.5px;top:611px;" width="6" height="6" viewBox="0 0 6 6"><path d="M1.5 1L4.5 2.5L1.5 4" stroke="#888" stroke-width="0.7" fill="#f0f0f0"/></svg>
<div class="a" style="left:797px;top:611px;width:6px;height:6px;background:#ff0000;"></div>
<div class="a" style="left:803px;top:400.5px;width:3px;height:227px;background:#dbe5f2;"></div>
<div class="a" style="left:803.5px;top:400.5px;width:1px;height:227px;background:#f4f8fd;"></div>
<div class="a" style="left:806px;top:400.5px;width:351.5px;height:12px;background:linear-gradient(180deg,#edf3fb,#d3e0f1);"></div>
<div class="t" style="left:811px;top:403.70px;font-size:6.6px;color:#555;font-weight:normal;">Watch</div>
<div class="a" style="left:1110.0px;top:401.5px;width:11px;height:10px;background:linear-gradient(180deg,#eef3fa,#d6e0ee);border:1px solid #b5c2d4;border-radius:1px"></div>
<svg class="a" style="left:1112.0px;top:402.5px;" width="8" height="8" viewBox="0 0 8 8"><path d="M4.5 1L7 3.5L5.5 4.5L4 6L2 4L3.5 2.5Z" fill="#2b5fb0"/><path d="M2.5 5.5L1 7" stroke="#2b5fb0" stroke-width="0.9"/></svg>
<div class="a" style="left:1121.7px;top:401.5px;width:11px;height:10px;background:linear-gradient(180deg,#eef3fa,#d6e0ee);border:1px solid #b5c2d4;border-radius:1px"></div>
<svg class="a" style="left:1123.2px;top:402.5px;" width="9" height="8" viewBox="0 0 9 8"><rect x="3.5" y="0.8" width="5" height="3.5" fill="none" stroke="#445" stroke-width="0.8"/><rect x="0.8" y="3.8" width="4.5" height="3.5" fill="none" stroke="#445" stroke-width="0.8"/></svg>
<div class="a" style="left:1133.4px;top:401.5px;width:11px;height:10px;background:linear-gradient(180deg,#eef3fa,#d6e0ee);border:1px solid #b5c2d4;border-radius:1px"></div>
<div class="a" style="left:1136.9px;top:407.5px;width:4px;height:1.3px;background:#222;"></div>
<div class="a" style="left:1145.1px;top:401.5px;width:11px;height:10px;background:linear-gradient(180deg,#eef3fa,#d6e0ee);border:1px solid #b5c2d4;border-radius:1px"></div>
<div class="a" style="left:1147.6px;top:403.5px;width:6px;height:5px;background:none;border:1px solid #333;border-top-width:1.5px"></div>
<div class="a" style="left:806px;top:412.5px;width:351.5px;height:214px;background:#e0e0e0;"></div>
<div class="a" style="left:816px;top:415px;width:294px;height:9.5px;background:#ffffff;border:1px solid #c6ced8;border-radius:1.5px"></div>
<div class="t" style="left:820px;top:416.25px;font-size:7px;color:#a8a8a8;font-weight:normal;">Filter String</div>
<svg class="a" style="left:1102px;top:417.75px;" width="6" height="4" viewBox="0 0 6 4"><path d="M0.5 0.5H5.5L3 3.5Z" fill="#111"/></svg>
<div class="a" style="left:1101px;top:422.5px;width:8px;height:1px;background:#888;"></div>
<div class="a" style="left:1113px;top:414.5px;width:12px;height:10px;background:#dde8f5;border:1px solid #b6c4d6;border-radius:1.5px"></div>
<svg class="a" style="left:1115px;top:416px;" width="9" height="7" viewBox="0 0 9 7"><path d="M0.5 0.5H7.5L4.5 4V6.5L3.5 6V4Z" fill="#2a66b8"/></svg>
<div class="a" style="left:1128px;top:414.5px;width:12px;height:10px;background:#dde8f5;border:1px solid #b6c4d6;border-radius:1.5px"></div>
<svg class="a" style="left:1129.5px;top:415.5px;" width="9" height="8" viewBox="0 0 9 8"><text x="0" y="7.5" font-size="7" font-weight="bold" fill="#2a66b8" font-family="Liberation Sans">Aa</text><circle cx="6" cy="1.5" r="1.3" fill="#e03030"/></svg>
<div class="a" style="left:1143px;top:414.5px;width:12px;height:10px;background:#dde8f5;border:1px solid #b6c4d6;border-radius:1.5px"></div>
<svg class="a" style="left:1145px;top:416.5px;" width="8" height="6" viewBox="0 0 8 6"><rect x="0.5" y="0.5" width="7" height="5" fill="#e8e8ff" stroke="#5050d0" stroke-width="0.8"/></svg>
<div class="a" style="left:816px;top:427px;width:311px;height:10px;background:#ffffff;border:1px solid #c6ced8;border-radius:1.5px"></div>
<div class="t" style="left:820px;top:428.50px;font-size:7px;color:#a8a8a8;font-weight:normal;">Search String</div>
<svg class="a" style="left:1119px;top:430.0px;" width="6" height="4" viewBox="0 0 6 4"><path d="M0.5 0.5H5.5L3 3.5Z" fill="#111"/></svg>
<div class="a" style="left:1118px;top:435px;width:8px;height:1px;background:#888;"></div>
<div class="a" style="left:1128px;top:427px;width:12px;height:10px;background:#6aa8e0;border:1px solid #5088c0;border-radius:1.5px"></div>
<svg class="a" style="left:1130px;top:428.5px;" width="8" height="7" viewBox="0 0 8 7"><circle cx="4" cy="3.3" r="2.3" fill="#e8f2fb" stroke="#2a5b9a" stroke-width="0.7"/><path d="M5.5 5L7 6.5" stroke="#2a5b9a"/></svg>
<div class="a" style="left:1143px;top:427px;width:12px;height:10px;background:#c8d8ea;border:1px solid #a8b8cc;border-radius:1.5px"></div>
<svg class="a" style="left:1144.5px;top:428px;" width="9" height="8" viewBox="0 0 9 8"><circle cx="5" cy="3.5" r="2.5" fill="#fff" stroke="#223" stroke-width="0.9"/><path d="M3 5.5L1 7.5" stroke="#223" stroke-width="1"/></svg>
<svg class="a" style="left:809px;top:435px;" width="5" height="3" viewBox="0 0 5 3"><path d="M0.5 2.5L2.5 0.5L4.5 2.5" stroke="#1a4a8a" stroke-width="0.9" fill="none"/></svg>
<div class="a" style="left:807.5px;top:439px;width:29px;height:11px;background:linear-gradient(180deg,#f8fafc,#e8edf3);border:1px solid #9cb6d6;border-top:2px solid #6a9ad0;border-bottom:none"></div>
<div class="t" style="left:810px;top:441.20px;font-size:6.6px;color:#444;font-weight:normal;">Watch 1</div>
<div class="a" style="left:807.5px;top:450px;width:340px;height:1px;background:#c8c8c8;"></div>
<div class="a" style="left:809px;top:452px;width:338px;height:7.5px;background:#aaaaaa;border-bottom:1px solid #999"></div>
<div class="a" style="left:893px;top:452px;width:1px;height:7.5px;background:#bcbcbc;"></div>
<div class="a" style="left:938px;top:452px;width:1px;height:7.5px;background:#bcbcbc;"></div>
<div class="a" style="left:983px;top:452px;width:1px;height:7.5px;background:#bcbcbc;"></div>
<div class="t" style="left:842.5px;top:452.50px;font-size:6.6px;color:#222;font-weight:normal;">Name</div>
<svg class="a" style="left:865px;top:454.3px;" width="5" height="3" viewBox="0 0 5 3"><path d="M0.5 0.5L2.5 2.5L4.5 0.5" stroke="#1a4a8a" stroke-width="0.9" fill="none"/></svg>
<div class="t" style="left:907.5px;top:452.50px;font-size:6.6px;color:#333;font-weight:normal;">Value</div>
<div class="t" style="left:955px;top:452.50px;font-size:6.6px;color:#333;font-weight:normal;">Type</div>
<div class="t" style="left:1115.5px;top:452.50px;font-size:6.6px;color:#333;font-weight:normal;">Scope</div>
<div class="a" style="left:1147px;top:452px;width:7.5px;height:166px;background:#e6e6e6;border-left:1px solid #c8c8c8"></div>
<svg class="a" style="left:1147.5px;top:452.5px;" width="7" height="6" viewBox="0 0 7 6"><path d="M3.5 1L6 5H1Z" fill="#fff" stroke="#999" stroke-width="0.5"/></svg>
<div class="a" style="left:1148px;top:459px;width:5.5px;height:152px;background:#f2f2f2;border:1px solid #cfcfcf"></div>
<svg class="a" style="left:1147.5px;top:611.5px;" width="7" height="6" viewBox="0 0 7 6"><path d="M3.5 5L6 1H1Z" fill="#fff" stroke="#999" stroke-width="0.5"/></svg>
<div class="a" style="left:808.5px;top:620.5px;width:339px;height:5px;background:#c6c6c6;border-top:1px solid #b4b4b4;border-bottom:1px solid #d8d8d8"></div>
<div class="a" style="left:816.5px;top:621.5px;width:239px;height:3px;background:#ececec;border:1px solid #c8c8c8"></div>
<svg class="a" style="left:808.5px;top:620.5px;" width="6" height="5" viewBox="0 0 6 5"><path d="M4.5 1L1.5 2.5L4.5 4" stroke="#888" stroke-width="0.7" fill="#f0f0f0"/></svg>
<svg class="a" style="left:1141.5px;top:620.5px;" width="6" height="5" viewBox="0 0 6 5"><path d="M1.5 1L4.5 2.5L1.5 4" stroke="#888" stroke-width="0.7" fill="#f0f0f0"/></svg>
<div class="a" style="left:108px;top:617px;width:695px;height:10.5px;background:linear-gradient(180deg,#f4f7fb,#e8eef6);"></div>
<div class="a" style="left:108px;top:617.5px;width:31px;height:10px;background:linear-gradient(180deg,#fbfcfe,#eef2f7);border:1px solid #c8d0da"></div>
<div class="t" style="left:111px;top:620.00px;font-size:6.6px;color:#333;font-weight:normal;">Message</div>
<div class="a" style="left:139.5px;top:617.5px;width:39px;height:10px;background:linear-gradient(180deg,#fbfcfe,#eef2f7);border:1px solid #c8d0da"></div>
<div class="t" style="left:142.5px;top:620.00px;font-size:6.6px;color:#333;font-weight:normal;">OneSearch</div>
<div class="a" style="left:179px;top:617.5px;width:28px;height:10px;background:linear-gradient(180deg,#fbfcfe,#eef2f7);border:1px solid #c8d0da"></div>
<div class="t" style="left:182px;top:620.00px;font-size:6.6px;color:#333;font-weight:normal;">Console</div>
<div class="a" style="left:208px;top:617.5px;width:76px;height:10px;background:linear-gradient(180deg,#dce9f8,#c9dcf2);border:1px solid #9cb6d6;border-bottom:2px solid #6a9ad0"></div>
<div class="t" style="left:211px;top:620.00px;font-size:6.6px;color:#444;font-weight:normal;">*&lt;nWave:4&gt; inter.fsdb</div>
<div class="a" style="left:108px;top:627.3px;width:1049.5px;height:13.7px;background:linear-gradient(180deg,#eef4fb,#cfdcf0);"></div>
<div class="a" style="left:108px;top:627.3px;width:1049.5px;height:0.6px;background:#c0cde0;"></div>
<div class="t" style="left:111px;top:631.90px;font-size:6.6px;color:#444;font-weight:normal;">Selected:</div>
<div class="a" style="left:950px;top:630px;width:0.6px;height:8px;background:#c0c8d4;"></div>
<div class="a" style="left:1008px;top:630px;width:0.6px;height:8px;background:#c0c8d4;"></div>
<div class="t" style="left:954px;top:631.60px;font-size:6.8px;color:#333;font-weight:normal;">Command Done</div>
<div class="t" style="left:1013px;top:631.60px;font-size:6.8px;color:#333;font-weight:normal;">Finished:</div>
<div class="t" style="left:1046px;top:631.60px;font-size:6.8px;color:#333;font-weight:normal;">2805ns</div>
<svg class="a" style="left:1076px;top:629.5px;" width="10" height="9" viewBox="0 0 10 9"><path d="M1 7q4-7 8 0" stroke="#d85a20" stroke-width="1.5" fill="none"/><circle cx="5" cy="7" r="1.2" fill="#d85a20"/></svg>
<svg class="a" style="left:1093px;top:630px;" width="10" height="8" viewBox="0 0 10 8"><rect x="0.5" y="0.5" width="8" height="6" fill="#eaf2fc" stroke="#3a70b8" stroke-width="0.8"/><path d="M3 0.5v6" stroke="#3a70b8" stroke-width="0.6"/></svg>
<svg class="a" style="left:1104px;top:632px;" width="6" height="4" viewBox="0 0 6 4"><path d="M0.5 0.5H5.5L3 3.5Z" fill="#111"/></svg>
<svg class="a" style="left:1116px;top:629.5px;" width="10" height="9" viewBox="0 0 10 9"><path d="M5 0.5v6M2.5 4l2.5 3 2.5-3" stroke="#e8a020" stroke-width="1.4" fill="none"/><rect x="1" y="0.5" width="8" height="2" fill="#5a8ad0"/></svg>
<svg class="a" style="left:1129px;top:629.5px;" width="12" height="9" viewBox="0 0 12 9"><path d="M3.5 0.5v6M1 4l2.5 3 2.5-3M8.5 0.5v6M6 4l2.5 3 2.5-3" stroke="#e8a020" stroke-width="1.3" fill="none"/></svg>
<svg class="a" style="left:1145px;top:629.5px;" width="10" height="9" viewBox="0 0 10 9"><path d="M1 1l2.5 2.5M9 1L6.5 3.5M1 8l2.5-2.5M9 8L6.5 5.5" stroke="#333" stroke-width="0.8"/></svg>
<div class="a" style="left:102px;top:136.5px;width:51px;height:38px;background:none;border:2px solid #d8232c"></div></body></html>
